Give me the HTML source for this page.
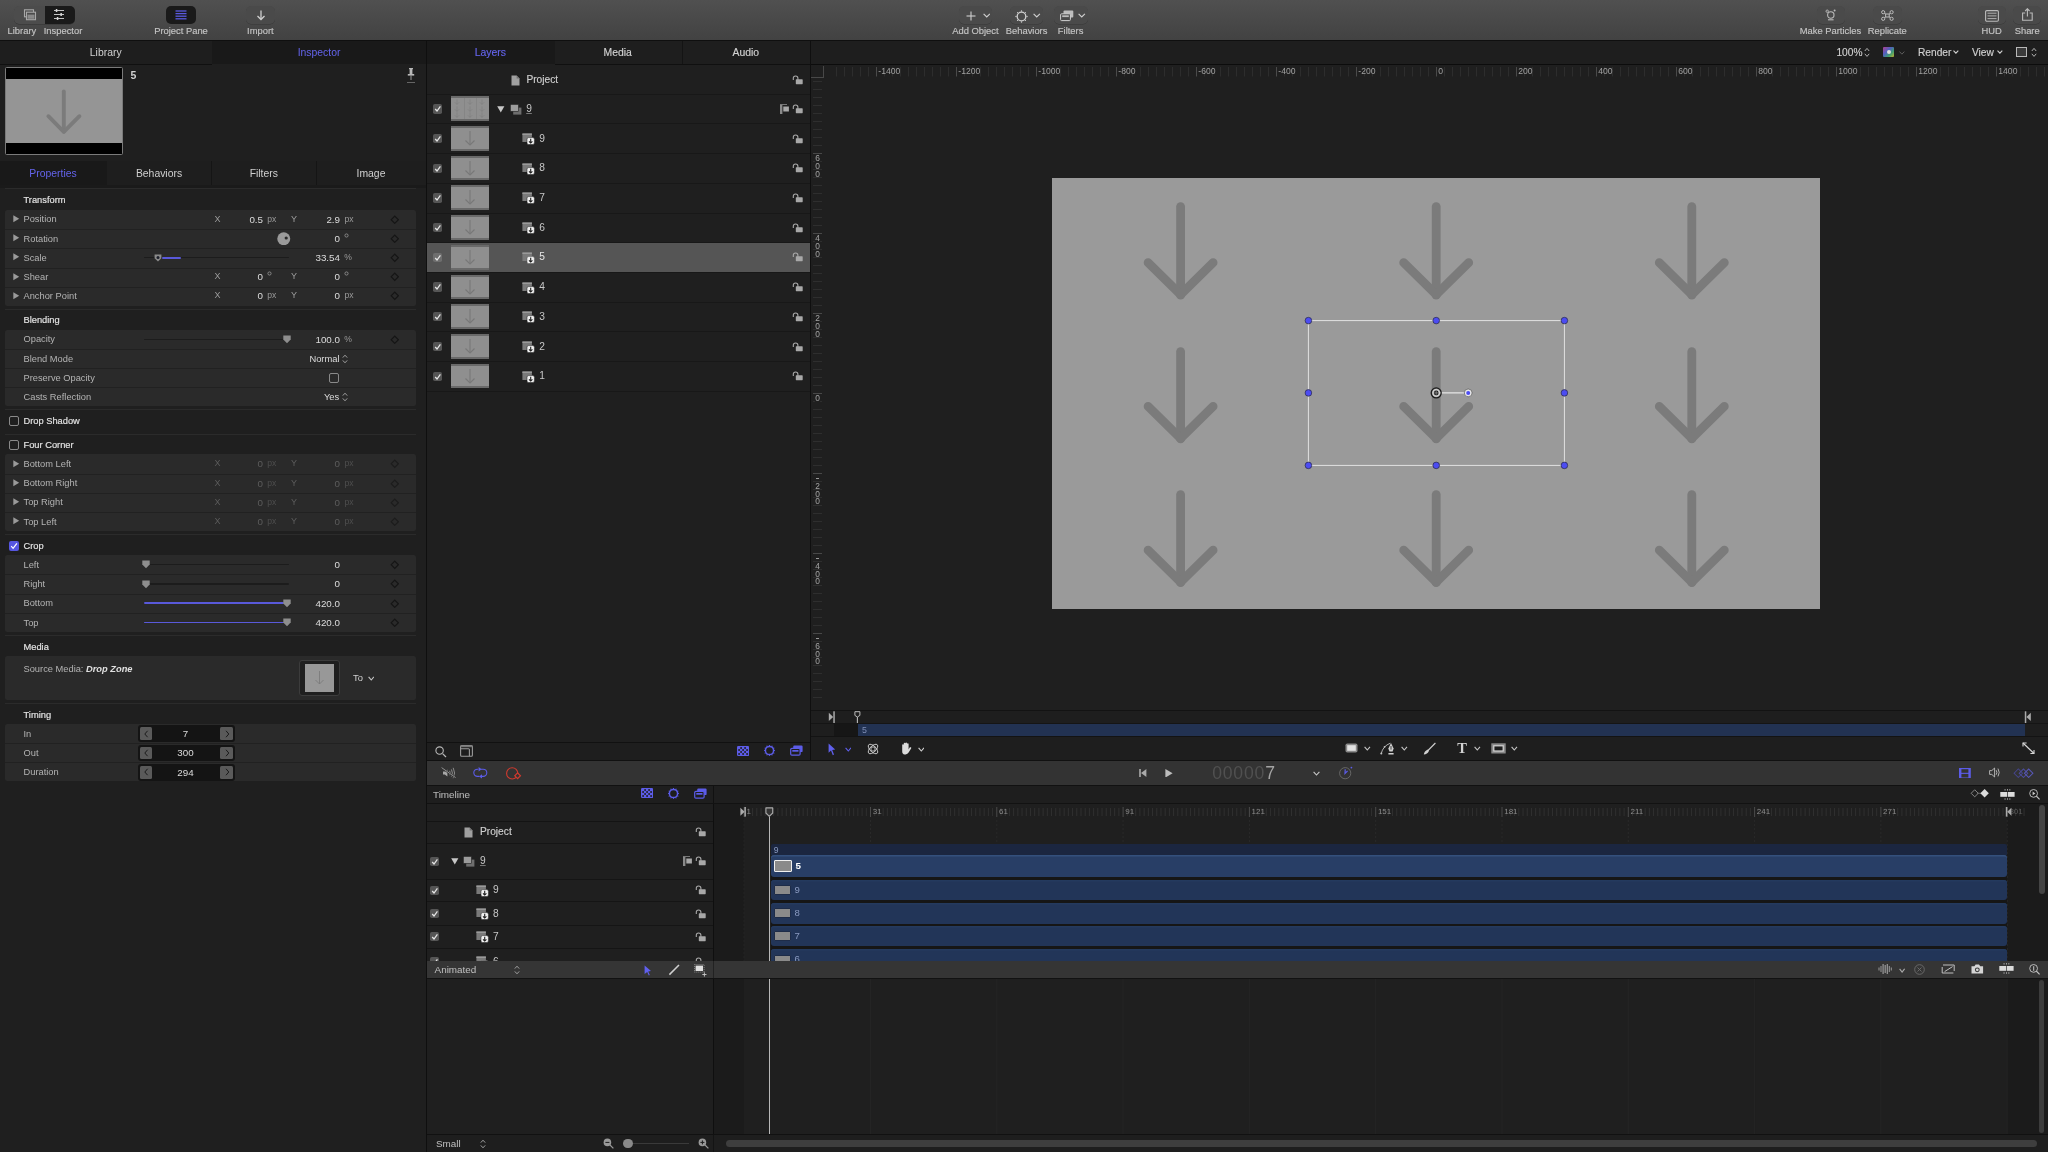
<!DOCTYPE html>
<html><head><meta charset="utf-8"><style>
html,body{margin:0;padding:0;width:2048px;height:1152px;overflow:hidden;background:#1f1f1f;font-family:"Liberation Sans",sans-serif;}
#r>div,#r>svg{position:absolute;}
#r{will-change:transform;position:relative;width:2048px;height:1152px;overflow:hidden;}
</style></head><body><div id="r">
<div style="left:0px;top:0px;width:2048px;height:40px;background:linear-gradient(#505050,#424242);"></div>
<div style="left:0px;top:40px;width:2048px;height:1px;background:#0f0f0f;"></div>
<div style="left:0px;top:41px;width:426px;height:1111px;background:#1f1f1f;"></div>
<div style="left:426px;top:41px;width:1px;height:1111px;background:#0f0f0f;"></div>
<div style="left:427px;top:41px;width:384px;height:701px;background:#1f1f1f;"></div>
<div style="left:810px;top:41px;width:1px;height:719px;background:#0f0f0f;"></div>
<div style="left:811px;top:41px;width:1237px;height:669px;background:#1f1f1f;"></div>
<div style="left:13.7px;top:6px;width:61.5px;height:18px;background:#4c4c4c;border-radius:5px;box-shadow:0 0.5px 0 rgba(0,0,0,0.3);"></div>
<div style="left:45px;top:6px;width:30.2px;height:18px;background:#1a1a1a;border-radius:0 5px 5px 0;"></div>
<svg style="left:23px;top:8px;" width="14" height="14" viewBox="0 0 14 14"><rect x="1.5" y="1.8" width="9" height="7" fill="none" stroke="#a8a8a8" stroke-width="1.1"/><rect x="3.5" y="4.2" width="9" height="7.5" fill="#4c4c4c" stroke="#a8a8a8" stroke-width="1.1"/><rect x="4.5" y="6.6" width="7" height="4.2" fill="#8a8a8a"/></svg>
<svg style="left:53px;top:9px;" width="12" height="12" viewBox="0 0 12 12"><g stroke="#d8d8d8" stroke-width="0.9"><line x1="1" y1="1.5" x2="11" y2="1.5"/><line x1="1" y1="5.5" x2="11" y2="5.5"/><line x1="1" y1="9.5" x2="11" y2="9.5"/></g><g fill="#d8d8d8"><rect x="2.8" y="0" width="1.5" height="3"/><rect x="7.4" y="4" width="1.5" height="3"/><rect x="3.8" y="8" width="1.5" height="3"/></g></svg>
<div style="left:-128.1px;width:300px;text-align:center;top:25.3px;line-height:12px;font-size:9.4px;color:#c4c4c4;font-weight:400;white-space:nowrap;-webkit-text-stroke:0.15px #c4c4c4">Library</div>
<div style="left:-87px;width:300px;text-align:center;top:25.3px;line-height:12px;font-size:9.4px;color:#c4c4c4;font-weight:400;white-space:nowrap;-webkit-text-stroke:0.15px #c4c4c4">Inspector</div>
<div style="left:166.4px;top:6px;width:29.4px;height:18px;background:#1a1a1a;border-radius:5px;"></div>
<svg style="left:175px;top:10px;" width="12" height="10" viewBox="0 0 12 10"><g stroke="#5a5ae0" stroke-width="1.3"><line x1="0.5" y1="1" x2="11.5" y2="1"/><line x1="0.5" y1="3.6" x2="11.5" y2="3.6"/><line x1="0.5" y1="6.2" x2="11.5" y2="6.2"/><line x1="0.5" y1="8.8" x2="11.5" y2="8.8"/></g></svg>
<div style="left:31px;width:300px;text-align:center;top:25.3px;line-height:12px;font-size:9.4px;color:#c4c4c4;font-weight:400;white-space:nowrap;-webkit-text-stroke:0.15px #c4c4c4">Project Pane</div>
<div style="left:246.4px;top:6px;width:28.5px;height:18px;background:#4a4a4a;border-radius:5px;box-shadow:0 0.5px 0 rgba(0,0,0,0.25);"></div>
<svg style="left:256px;top:10px;" width="10" height="11" viewBox="0 0 10 11"><g stroke="#d0d0d0" stroke-width="1.3" fill="none"><line x1="5" y1="0.5" x2="5" y2="9.3"/><polyline points="1.5,6 5,9.5 8.5,6"/></g></svg>
<div style="left:110.39999999999998px;width:300px;text-align:center;top:25.3px;line-height:12px;font-size:9.4px;color:#c4c4c4;font-weight:400;white-space:nowrap;-webkit-text-stroke:0.15px #c4c4c4">Import</div>
<div style="left:958.6px;top:6px;width:33.8px;height:18px;background:#4a4a4a;border-radius:5px;box-shadow:0 0.5px 0 rgba(0,0,0,0.25);"></div>
<div style="left:1009.5px;top:6px;width:33.8px;height:18px;background:#4a4a4a;border-radius:5px;box-shadow:0 0.5px 0 rgba(0,0,0,0.25);"></div>
<div style="left:1053.8px;top:6px;width:34.2px;height:18px;background:#4a4a4a;border-radius:5px;box-shadow:0 0.5px 0 rgba(0,0,0,0.25);"></div>
<svg style="left:966px;top:10.5px;" width="10" height="10" viewBox="0 0 10 10"><g stroke="#cfcfcf" stroke-width="1.1"><line x1="5" y1="0.5" x2="5" y2="9.5"/><line x1="0.5" y1="5" x2="9.5" y2="5"/></g></svg>
<svg style="left:982.6px;top:13.2px;" width="7.5" height="5" viewBox="0 0 7.5 5"><polyline points="0.6,0.8 3.75,4 6.9,0.8" fill="none" stroke="#cfcfcf" stroke-width="1.1"/></svg>
<svg style="left:1033.3px;top:13.2px;" width="7.5" height="5" viewBox="0 0 7.5 5"><polyline points="0.6,0.8 3.75,4 6.9,0.8" fill="none" stroke="#cfcfcf" stroke-width="1.1"/></svg>
<svg style="left:1078px;top:13.2px;" width="7.5" height="5" viewBox="0 0 7.5 5"><polyline points="0.6,0.8 3.75,4 6.9,0.8" fill="none" stroke="#cfcfcf" stroke-width="1.1"/></svg>
<svg style="left:1015px;top:9.8px;" width="13" height="13" viewBox="0 0 13 13"><circle cx="6.5" cy="6.5" r="4.3" fill="none" stroke="#cfcfcf" stroke-width="1.3"/><g fill="#cfcfcf"><circle cx="6.5" cy="1" r="0.7"/><circle cx="6.5" cy="12" r="0.7"/><circle cx="1" cy="6.5" r="0.7"/><circle cx="12" cy="6.5" r="0.7"/><circle cx="2.6" cy="2.6" r="0.6"/><circle cx="10.4" cy="2.6" r="0.6"/><circle cx="2.6" cy="10.4" r="0.6"/><circle cx="10.4" cy="10.4" r="0.6"/></g></svg>
<svg style="left:1059.5px;top:10px;" width="14" height="11.5" viewBox="0 0 14 11.5"><rect x="3.5" y="0.6" width="9.8" height="6.8" rx="1" fill="#bdbdbd"/><rect x="0.6" y="3.8" width="9.8" height="6.8" rx="1" fill="#4a4a4a" stroke="#cfcfcf" stroke-width="1"/><rect x="2.2" y="5.3" width="6.6" height="1.8" fill="#bdbdbd"/></svg>
<div style="left:825.4px;width:300px;text-align:center;top:25.3px;line-height:12px;font-size:9.4px;color:#c4c4c4;font-weight:400;white-space:nowrap;-webkit-text-stroke:0.15px #c4c4c4">Add Object</div>
<div style="left:876.5999999999999px;width:300px;text-align:center;top:25.3px;line-height:12px;font-size:9.4px;color:#c4c4c4;font-weight:400;white-space:nowrap;-webkit-text-stroke:0.15px #c4c4c4">Behaviors</div>
<div style="left:920.5999999999999px;width:300px;text-align:center;top:25.3px;line-height:12px;font-size:9.4px;color:#c4c4c4;font-weight:400;white-space:nowrap;-webkit-text-stroke:0.15px #c4c4c4">Filters</div>
<div style="left:1816.6px;top:6px;width:28.4px;height:18px;background:#4a4a4a;border-radius:5px;box-shadow:0 0.5px 0 rgba(0,0,0,0.25);"></div>
<div style="left:1872.8px;top:6px;width:29.1px;height:18px;background:#4a4a4a;border-radius:5px;box-shadow:0 0.5px 0 rgba(0,0,0,0.25);"></div>
<div style="left:1977.8px;top:6px;width:27.8px;height:18px;background:#4a4a4a;border-radius:5px;box-shadow:0 0.5px 0 rgba(0,0,0,0.25);"></div>
<div style="left:2013px;top:6px;width:27.8px;height:18px;background:#4a4a4a;border-radius:5px;box-shadow:0 0.5px 0 rgba(0,0,0,0.25);"></div>
<svg style="left:1824.5px;top:9px;" width="12" height="12" viewBox="0 0 12 12"><circle cx="5.8" cy="6" r="3.2" fill="none" stroke="#bbb" stroke-width="1.1"/><circle cx="2.2" cy="2.2" r="1.2" fill="none" stroke="#bbb" stroke-width="0.9"/><circle cx="9.6" cy="1.6" r="1" fill="#bbb"/><line x1="3" y1="10.8" x2="8.6" y2="10.8" stroke="#bbb" stroke-width="1.1"/></svg>
<svg style="left:1881px;top:9.5px;" width="13" height="11" viewBox="0 0 13 11"><g fill="none" stroke="#bbb" stroke-width="1"><circle cx="2.2" cy="2.2" r="1.6"/><circle cx="10.6" cy="2.2" r="1.6"/><circle cx="2.2" cy="8.8" r="1.6"/><circle cx="10.6" cy="8.8" r="1.6"/><rect x="4.6" y="4" width="3.6" height="3"/><line x1="3.4" y1="3.4" x2="4.8" y2="4.2"/><line x1="9.4" y1="3.4" x2="8" y2="4.2"/><line x1="3.4" y1="7.6" x2="4.8" y2="6.8"/><line x1="9.4" y1="7.6" x2="8" y2="6.8"/></g></svg>
<svg style="left:1985px;top:9.5px;" width="14" height="12" viewBox="0 0 14 12"><rect x="0.6" y="0.6" width="12.8" height="10.6" rx="1.2" fill="none" stroke="#bbb" stroke-width="1.1"/><g stroke="#bbb" stroke-width="0.9"><line x1="2.5" y1="3.2" x2="11.5" y2="3.2"/><line x1="2.5" y1="5.9" x2="11.5" y2="5.9"/><line x1="2.5" y1="8.6" x2="11.5" y2="8.6"/></g></svg>
<svg style="left:2022px;top:8px;" width="11" height="13" viewBox="0 0 11 13"><g fill="none" stroke="#bbb" stroke-width="1.1"><polyline points="3.2,5 0.6,5 0.6,12.3 10.2,12.3 10.2,5 7.6,5"/><line x1="5.4" y1="0.8" x2="5.4" y2="8.5"/><polyline points="3.2,3 5.4,0.8 7.6,3"/></g></svg>
<div style="left:1680.5px;width:300px;text-align:center;top:25.3px;line-height:12px;font-size:9.4px;color:#c4c4c4;font-weight:400;white-space:nowrap;-webkit-text-stroke:0.15px #c4c4c4">Make Particles</div>
<div style="left:1737.3px;width:300px;text-align:center;top:25.3px;line-height:12px;font-size:9.4px;color:#c4c4c4;font-weight:400;white-space:nowrap;-webkit-text-stroke:0.15px #c4c4c4">Replicate</div>
<div style="left:1841.6px;width:300px;text-align:center;top:25.3px;line-height:12px;font-size:9.4px;color:#c4c4c4;font-weight:400;white-space:nowrap;-webkit-text-stroke:0.15px #c4c4c4">HUD</div>
<div style="left:1877.2px;width:300px;text-align:center;top:25.3px;line-height:12px;font-size:9.4px;color:#c4c4c4;font-weight:400;white-space:nowrap;-webkit-text-stroke:0.15px #c4c4c4">Share</div>
<div style="left:0px;top:41px;width:212px;height:23px;background:#1e1e1e;"></div>
<div style="left:212px;top:41px;width:214px;height:23px;background:#191919;"></div>
<div style="left:0px;top:64px;width:212px;height:1px;background:#101010;"></div>
<div style="left:-44.3px;width:300px;text-align:center;top:46.2px;line-height:14px;font-size:10.4px;color:#d2d2d2;font-weight:400;white-space:nowrap;">Library</div>
<div style="left:169px;width:300px;text-align:center;top:46.2px;line-height:14px;font-size:10.4px;color:#6464ec;font-weight:400;white-space:nowrap;">Inspector</div>
<div style="left:5.2px;top:67px;width:117.5px;height:88.2px;background:#000;border:1px solid #7a7a7a;box-sizing:border-box;border-radius:1.5px;"></div>
<div style="left:6.2px;top:78.8px;width:115.5px;height:64.7px;background:#959595;"></div>
<svg style="left:40px;top:88px;" width="48" height="48" viewBox="0 0 48 48"><g stroke="#7b7b7b" stroke-width="3.9" stroke-linecap="round" stroke-linejoin="round" fill="none"><line x1="23.8" y1="3.4" x2="23.8" y2="43.5"/><polyline points="8.4,28.2 23.8,43.8 39.4,28.2"/></g></svg>
<div style="left:130.5px;top:68.1px;line-height:14px;font-size:10.5px;color:#d0d0d0;font-weight:700;white-space:nowrap;">5</div>
<svg style="left:406px;top:67px;" width="11" height="17" viewBox="0 0 11 17"><g fill="#b8b8b8"><rect x="3" y="1" width="4" height="1.2"/><rect x="3.6" y="2" width="2.8" height="5"/><polygon points="1.8,7 8.2,7 8.2,8.6 1.8,8.6"/></g><line x1="5" y1="8.6" x2="5" y2="13" stroke="#b8b8b8" stroke-width="0.8"/><line x1="1" y1="15.5" x2="9" y2="15.5" stroke="#777" stroke-width="0.8"/></svg>
<div style="left:0px;top:161px;width:107px;height:24px;background:#191919;"></div>
<div style="left:107px;top:161px;width:104px;height:24px;background:#1e1e1e;"></div>
<div style="left:211px;top:161px;width:1px;height:24px;background:#151515;"></div>
<div style="left:212px;top:161px;width:104.4px;height:24px;background:#1e1e1e;"></div>
<div style="left:316.4px;top:161px;width:1px;height:24px;background:#151515;"></div>
<div style="left:317.4px;top:161px;width:108.6px;height:24px;background:#1e1e1e;"></div>
<div style="left:0px;top:185px;width:426px;height:3px;background:#1a1a1a;"></div>
<div style="left:-97px;width:300px;text-align:center;top:167.3px;line-height:14px;font-size:10.4px;color:#6464ec;font-weight:400;white-space:nowrap;">Properties</div>
<div style="left:9px;width:300px;text-align:center;top:167.3px;line-height:14px;font-size:10.4px;color:#d0d0d0;font-weight:400;white-space:nowrap;">Behaviors</div>
<div style="left:113.80000000000001px;width:300px;text-align:center;top:167.3px;line-height:14px;font-size:10.4px;color:#d0d0d0;font-weight:400;white-space:nowrap;">Filters</div>
<div style="left:221px;width:300px;text-align:center;top:167.3px;line-height:14px;font-size:10.4px;color:#d0d0d0;font-weight:400;white-space:nowrap;">Image</div>
<div style="left:4.7px;top:188.2px;width:411px;height:1.2px;background:#2b2b2b;"></div>
<div style="left:23.5px;top:193.2px;line-height:14px;font-size:9.3px;color:#e4e4e4;font-weight:400;white-space:nowrap;-webkit-text-stroke:0.2px #dedede">Transform</div>
<div style="left:4.9px;top:209.8px;width:410.7px;height:95.80000000000001px;background:#2a2a2a;border-radius:2.5px;"></div>
<div style="left:4.9px;top:229.1px;width:410.7px;height:1px;background:#212121;"></div>
<div style="left:4.9px;top:248.3px;width:410.7px;height:1px;background:#212121;"></div>
<div style="left:4.9px;top:267.5px;width:410.7px;height:1px;background:#212121;"></div>
<div style="left:4.9px;top:286.7px;width:410.7px;height:1px;background:#212121;"></div>
<svg style="left:12.5px;top:214.79999999999998px;" width="7" height="8" viewBox="0 0 7 8"><polygon points="0.3,0.2 6.2,3.7 0.3,7.2" fill="#9a9a9a"/></svg>
<div style="left:23.5px;top:212.2px;line-height:14px;font-size:9.3px;color:#b4b4b4;font-weight:400;white-space:nowrap;">Position</div>
<svg style="left:389.5px;top:214.6px;" width="9.5" height="9.5" viewBox="0 0 9.5 9.5"><rect x="2.2" y="2.2" width="5.1" height="5.1" transform="rotate(45 4.75 4.75)" fill="none" stroke="#151515" stroke-width="1.15"/></svg>
<svg style="left:12.5px;top:234.1px;" width="7" height="8" viewBox="0 0 7 8"><polygon points="0.3,0.2 6.2,3.7 0.3,7.2" fill="#9a9a9a"/></svg>
<div style="left:23.5px;top:231.5px;line-height:14px;font-size:9.3px;color:#b4b4b4;font-weight:400;white-space:nowrap;">Rotation</div>
<svg style="left:389.5px;top:233.9px;" width="9.5" height="9.5" viewBox="0 0 9.5 9.5"><rect x="2.2" y="2.2" width="5.1" height="5.1" transform="rotate(45 4.75 4.75)" fill="none" stroke="#151515" stroke-width="1.15"/></svg>
<svg style="left:12.5px;top:253.29999999999998px;" width="7" height="8" viewBox="0 0 7 8"><polygon points="0.3,0.2 6.2,3.7 0.3,7.2" fill="#9a9a9a"/></svg>
<div style="left:23.5px;top:250.7px;line-height:14px;font-size:9.3px;color:#b4b4b4;font-weight:400;white-space:nowrap;">Scale</div>
<svg style="left:389.5px;top:253.1px;" width="9.5" height="9.5" viewBox="0 0 9.5 9.5"><rect x="2.2" y="2.2" width="5.1" height="5.1" transform="rotate(45 4.75 4.75)" fill="none" stroke="#151515" stroke-width="1.15"/></svg>
<svg style="left:12.5px;top:272.5px;" width="7" height="8" viewBox="0 0 7 8"><polygon points="0.3,0.2 6.2,3.7 0.3,7.2" fill="#9a9a9a"/></svg>
<div style="left:23.5px;top:269.9px;line-height:14px;font-size:9.3px;color:#b4b4b4;font-weight:400;white-space:nowrap;">Shear</div>
<svg style="left:389.5px;top:272.29999999999995px;" width="9.5" height="9.5" viewBox="0 0 9.5 9.5"><rect x="2.2" y="2.2" width="5.1" height="5.1" transform="rotate(45 4.75 4.75)" fill="none" stroke="#151515" stroke-width="1.15"/></svg>
<svg style="left:12.5px;top:291.6px;" width="7" height="8" viewBox="0 0 7 8"><polygon points="0.3,0.2 6.2,3.7 0.3,7.2" fill="#9a9a9a"/></svg>
<div style="left:23.5px;top:289.0px;line-height:14px;font-size:9.3px;color:#b4b4b4;font-weight:400;white-space:nowrap;">Anchor Point</div>
<svg style="left:389.5px;top:291.4px;" width="9.5" height="9.5" viewBox="0 0 9.5 9.5"><rect x="2.2" y="2.2" width="5.1" height="5.1" transform="rotate(45 4.75 4.75)" fill="none" stroke="#151515" stroke-width="1.15"/></svg>
<div style="left:67.5px;width:300px;text-align:center;top:211.6px;line-height:14px;font-size:9px;color:#9c9c9c;font-weight:400;white-space:nowrap;">X</div>
<div style="left:-37px;width:300px;text-align:right;top:212.6px;line-height:14px;font-size:9.8px;color:#dcdcdc;font-weight:400;white-space:nowrap;">0.5</div>
<div style="left:267.3px;top:211.6px;line-height:14px;font-size:8.6px;color:#9a9a9a;font-weight:400;white-space:nowrap;">px</div>
<div style="left:144.10000000000002px;width:300px;text-align:center;top:211.6px;line-height:14px;font-size:9px;color:#9c9c9c;font-weight:400;white-space:nowrap;">Y</div>
<div style="left:40px;width:300px;text-align:right;top:212.6px;line-height:14px;font-size:9.8px;color:#dcdcdc;font-weight:400;white-space:nowrap;">2.9</div>
<div style="left:344.5px;top:211.6px;line-height:14px;font-size:8.6px;color:#9a9a9a;font-weight:400;white-space:nowrap;">px</div>
<svg style="left:277.3px;top:231.9px;" width="13.5" height="13.5" viewBox="0 0 13.5 13.5"><circle cx="6.75" cy="6.75" r="6.5" fill="#9a9a9a"/><circle cx="9.2" cy="6" r="1.6" fill="#2a2a2a"/></svg>
<div style="left:40px;width:300px;text-align:right;top:231.9px;line-height:14px;font-size:9.8px;color:#dcdcdc;font-weight:400;white-space:nowrap;">0</div>
<svg style="left:344.1px;top:232.5px;" width="5" height="5" viewBox="0 0 5 5"><circle cx="2.5" cy="2.5" r="1.6" fill="none" stroke="#9a9a9a" stroke-width="0.8"/></svg>
<div style="left:144.4px;top:257.09999999999997px;width:144.8px;height:1.2px;background:#1c1c1c;border-radius:1px;"></div>
<div style="left:161.8px;top:256.8px;width:19.0px;height:1.8px;background:#5959da;border-radius:1px;"></div>
<svg style="left:154.1px;top:253.7px;" width="8" height="8" viewBox="0 0 8 8"><path d="M0.6,0.5 H7.4 V4.2 L4,7.4 L0.6,4.2 Z" fill="#8a8a8a"/><circle cx="4" cy="3.6" r="1.5" fill="#1c1f2a"/></svg>
<div style="left:40px;width:300px;text-align:right;top:251.09999999999997px;line-height:14px;font-size:9.8px;color:#dcdcdc;font-weight:400;white-space:nowrap;">33.54</div>
<div style="left:344.3px;top:250.09999999999997px;line-height:14px;font-size:8.6px;color:#9a9a9a;font-weight:400;white-space:nowrap;">%</div>
<div style="left:67.5px;width:300px;text-align:center;top:269.29999999999995px;line-height:14px;font-size:9px;color:#9c9c9c;font-weight:400;white-space:nowrap;">X</div>
<div style="left:-37px;width:300px;text-align:right;top:270.29999999999995px;line-height:14px;font-size:9.8px;color:#dcdcdc;font-weight:400;white-space:nowrap;">0</div>
<svg style="left:267.3px;top:270.9px;" width="5" height="5" viewBox="0 0 5 5"><circle cx="2.5" cy="2.5" r="1.6" fill="none" stroke="#9a9a9a" stroke-width="0.8"/></svg>
<div style="left:144.10000000000002px;width:300px;text-align:center;top:269.29999999999995px;line-height:14px;font-size:9px;color:#9c9c9c;font-weight:400;white-space:nowrap;">Y</div>
<div style="left:40px;width:300px;text-align:right;top:270.29999999999995px;line-height:14px;font-size:9.8px;color:#dcdcdc;font-weight:400;white-space:nowrap;">0</div>
<svg style="left:344.1px;top:270.9px;" width="5" height="5" viewBox="0 0 5 5"><circle cx="2.5" cy="2.5" r="1.6" fill="none" stroke="#9a9a9a" stroke-width="0.8"/></svg>
<div style="left:67.5px;width:300px;text-align:center;top:288.4px;line-height:14px;font-size:9px;color:#9c9c9c;font-weight:400;white-space:nowrap;">X</div>
<div style="left:-37px;width:300px;text-align:right;top:289.4px;line-height:14px;font-size:9.8px;color:#dcdcdc;font-weight:400;white-space:nowrap;">0</div>
<div style="left:267.3px;top:288.4px;line-height:14px;font-size:8.6px;color:#9a9a9a;font-weight:400;white-space:nowrap;">px</div>
<div style="left:144.10000000000002px;width:300px;text-align:center;top:288.4px;line-height:14px;font-size:9px;color:#9c9c9c;font-weight:400;white-space:nowrap;">Y</div>
<div style="left:40px;width:300px;text-align:right;top:289.4px;line-height:14px;font-size:9.8px;color:#dcdcdc;font-weight:400;white-space:nowrap;">0</div>
<div style="left:344.5px;top:288.4px;line-height:14px;font-size:8.6px;color:#9a9a9a;font-weight:400;white-space:nowrap;">px</div>
<div style="left:4.7px;top:308.8px;width:411px;height:1.2px;background:#2b2b2b;"></div>
<div style="left:23.5px;top:313.2px;line-height:14px;font-size:9.3px;color:#e4e4e4;font-weight:400;white-space:nowrap;-webkit-text-stroke:0.2px #dedede">Blending</div>
<div style="left:4.9px;top:329.6px;width:410.7px;height:76.39999999999998px;background:#2a2a2a;border-radius:2.5px;"></div>
<div style="left:4.9px;top:348.9px;width:410.7px;height:1px;background:#212121;"></div>
<div style="left:4.9px;top:368.1px;width:410.7px;height:1px;background:#212121;"></div>
<div style="left:4.9px;top:387.3px;width:410.7px;height:1px;background:#212121;"></div>
<div style="left:23.5px;top:332.4px;line-height:14px;font-size:9.3px;color:#b4b4b4;font-weight:400;white-space:nowrap;">Opacity</div>
<svg style="left:389.5px;top:334.79999999999995px;" width="9.5" height="9.5" viewBox="0 0 9.5 9.5"><rect x="2.2" y="2.2" width="5.1" height="5.1" transform="rotate(45 4.75 4.75)" fill="none" stroke="#151515" stroke-width="1.15"/></svg>
<div style="left:144.4px;top:338.79999999999995px;width:144.8px;height:1.2px;background:#1c1c1c;border-radius:1px;"></div>
<svg style="left:282.5px;top:334.9px;" width="8" height="9" viewBox="0 0 8 9"><path d="M0.3,0.5 H7.7 V4.4 L4,8.2 L0.3,4.4 Z" fill="#8e8e8e"/></svg>
<div style="left:40px;width:300px;text-align:right;top:332.79999999999995px;line-height:14px;font-size:9.8px;color:#dcdcdc;font-weight:400;white-space:nowrap;">100.0</div>
<div style="left:344.3px;top:331.79999999999995px;line-height:14px;font-size:8.6px;color:#9a9a9a;font-weight:400;white-space:nowrap;">%</div>
<div style="left:23.5px;top:351.5px;line-height:14px;font-size:9.3px;color:#b4b4b4;font-weight:400;white-space:nowrap;">Blend Mode</div>
<div style="left:39.60000000000002px;width:300px;text-align:right;top:351.5px;line-height:14px;font-size:9.4px;color:#dcdcdc;font-weight:400;white-space:nowrap;">Normal</div>
<svg style="left:341.7px;top:353.5px;" width="6" height="10" viewBox="0 0 6 10"><g fill="none" stroke="#a0a0a0" stroke-width="1"><polyline points="0.8,3.6 3,1.2 5.2,3.6"/><polyline points="0.8,6.4 3,8.8 5.2,6.4"/></g></svg>
<div style="left:23.5px;top:370.6px;line-height:14px;font-size:9.3px;color:#b4b4b4;font-weight:400;white-space:nowrap;">Preserve Opacity</div>
<div style="left:329.2px;top:373.2px;width:10px;height:10px;background:transparent;border:1px solid #8a8a8a;border-radius:2px;box-sizing:border-box;"></div>
<div style="left:23.5px;top:389.7px;line-height:14px;font-size:9.3px;color:#b4b4b4;font-weight:400;white-space:nowrap;">Casts Reflection</div>
<div style="left:39.19999999999999px;width:300px;text-align:right;top:389.7px;line-height:14px;font-size:9.4px;color:#dcdcdc;font-weight:400;white-space:nowrap;">Yes</div>
<svg style="left:341.7px;top:391.7px;" width="6" height="10" viewBox="0 0 6 10"><g fill="none" stroke="#a0a0a0" stroke-width="1"><polyline points="0.8,3.6 3,1.2 5.2,3.6"/><polyline points="0.8,6.4 3,8.8 5.2,6.4"/></g></svg>
<div style="left:4.7px;top:409px;width:411px;height:1.2px;background:#2b2b2b;"></div>
<div style="left:9.4px;top:416.20000000000005px;width:9.8px;height:9.8px;background:transparent;border:1px solid #8a8a8a;border-radius:2px;box-sizing:border-box;"></div>
<div style="left:23.5px;top:413.8px;line-height:14px;font-size:9.3px;color:#e4e4e4;font-weight:400;white-space:nowrap;-webkit-text-stroke:0.2px #dedede">Drop Shadow</div>
<div style="left:4.7px;top:433.6px;width:411px;height:1.2px;background:#2b2b2b;"></div>
<div style="left:9.4px;top:439.90000000000003px;width:9.8px;height:9.8px;background:transparent;border:1px solid #8a8a8a;border-radius:2px;box-sizing:border-box;"></div>
<div style="left:23.5px;top:437.8px;line-height:14px;font-size:9.3px;color:#e4e4e4;font-weight:400;white-space:nowrap;-webkit-text-stroke:0.2px #dedede">Four Corner</div>
<div style="left:4.9px;top:454.2px;width:410.7px;height:76.59999999999997px;background:#2a2a2a;border-radius:2.5px;"></div>
<div style="left:4.9px;top:473.5px;width:410.7px;height:1px;background:#212121;"></div>
<div style="left:4.9px;top:492.7px;width:410.7px;height:1px;background:#212121;"></div>
<div style="left:4.9px;top:511.9px;width:410.7px;height:1px;background:#212121;"></div>
<svg style="left:12.5px;top:459.6px;" width="7" height="8" viewBox="0 0 7 8"><polygon points="0.3,0.2 6.2,3.7 0.3,7.2" fill="#9a9a9a"/></svg>
<div style="left:23.5px;top:457.0px;line-height:14px;font-size:9.3px;color:#b4b4b4;font-weight:400;white-space:nowrap;">Bottom Left</div>
<svg style="left:389.5px;top:459.4px;" width="9.5" height="9.5" viewBox="0 0 9.5 9.5"><rect x="2.2" y="2.2" width="5.1" height="5.1" transform="rotate(45 4.75 4.75)" fill="none" stroke="#1c1c1c" stroke-width="1.15"/></svg>
<div style="left:67.5px;width:300px;text-align:center;top:456.4px;line-height:14px;font-size:9px;color:#5c5c5c;font-weight:400;white-space:nowrap;">X</div>
<div style="left:-37px;width:300px;text-align:right;top:457.4px;line-height:14px;font-size:9.8px;color:#5c5c5c;font-weight:400;white-space:nowrap;">0</div>
<div style="left:267.3px;top:456.4px;line-height:14px;font-size:8.6px;color:#4e4e4e;font-weight:400;white-space:nowrap;">px</div>
<div style="left:144.10000000000002px;width:300px;text-align:center;top:456.4px;line-height:14px;font-size:9px;color:#5c5c5c;font-weight:400;white-space:nowrap;">Y</div>
<div style="left:40px;width:300px;text-align:right;top:457.4px;line-height:14px;font-size:9.8px;color:#5c5c5c;font-weight:400;white-space:nowrap;">0</div>
<div style="left:344.5px;top:456.4px;line-height:14px;font-size:8.6px;color:#4e4e4e;font-weight:400;white-space:nowrap;">px</div>
<svg style="left:12.5px;top:478.70000000000005px;" width="7" height="8" viewBox="0 0 7 8"><polygon points="0.3,0.2 6.2,3.7 0.3,7.2" fill="#9a9a9a"/></svg>
<div style="left:23.5px;top:476.1px;line-height:14px;font-size:9.3px;color:#b4b4b4;font-weight:400;white-space:nowrap;">Bottom Right</div>
<svg style="left:389.5px;top:478.5px;" width="9.5" height="9.5" viewBox="0 0 9.5 9.5"><rect x="2.2" y="2.2" width="5.1" height="5.1" transform="rotate(45 4.75 4.75)" fill="none" stroke="#1c1c1c" stroke-width="1.15"/></svg>
<div style="left:67.5px;width:300px;text-align:center;top:475.5px;line-height:14px;font-size:9px;color:#5c5c5c;font-weight:400;white-space:nowrap;">X</div>
<div style="left:-37px;width:300px;text-align:right;top:476.5px;line-height:14px;font-size:9.8px;color:#5c5c5c;font-weight:400;white-space:nowrap;">0</div>
<div style="left:267.3px;top:475.5px;line-height:14px;font-size:8.6px;color:#4e4e4e;font-weight:400;white-space:nowrap;">px</div>
<div style="left:144.10000000000002px;width:300px;text-align:center;top:475.5px;line-height:14px;font-size:9px;color:#5c5c5c;font-weight:400;white-space:nowrap;">Y</div>
<div style="left:40px;width:300px;text-align:right;top:476.5px;line-height:14px;font-size:9.8px;color:#5c5c5c;font-weight:400;white-space:nowrap;">0</div>
<div style="left:344.5px;top:475.5px;line-height:14px;font-size:8.6px;color:#4e4e4e;font-weight:400;white-space:nowrap;">px</div>
<svg style="left:12.5px;top:497.90000000000003px;" width="7" height="8" viewBox="0 0 7 8"><polygon points="0.3,0.2 6.2,3.7 0.3,7.2" fill="#9a9a9a"/></svg>
<div style="left:23.5px;top:495.3px;line-height:14px;font-size:9.3px;color:#b4b4b4;font-weight:400;white-space:nowrap;">Top Right</div>
<svg style="left:389.5px;top:497.7px;" width="9.5" height="9.5" viewBox="0 0 9.5 9.5"><rect x="2.2" y="2.2" width="5.1" height="5.1" transform="rotate(45 4.75 4.75)" fill="none" stroke="#1c1c1c" stroke-width="1.15"/></svg>
<div style="left:67.5px;width:300px;text-align:center;top:494.7px;line-height:14px;font-size:9px;color:#5c5c5c;font-weight:400;white-space:nowrap;">X</div>
<div style="left:-37px;width:300px;text-align:right;top:495.7px;line-height:14px;font-size:9.8px;color:#5c5c5c;font-weight:400;white-space:nowrap;">0</div>
<div style="left:267.3px;top:494.7px;line-height:14px;font-size:8.6px;color:#4e4e4e;font-weight:400;white-space:nowrap;">px</div>
<div style="left:144.10000000000002px;width:300px;text-align:center;top:494.7px;line-height:14px;font-size:9px;color:#5c5c5c;font-weight:400;white-space:nowrap;">Y</div>
<div style="left:40px;width:300px;text-align:right;top:495.7px;line-height:14px;font-size:9.8px;color:#5c5c5c;font-weight:400;white-space:nowrap;">0</div>
<div style="left:344.5px;top:494.7px;line-height:14px;font-size:8.6px;color:#4e4e4e;font-weight:400;white-space:nowrap;">px</div>
<svg style="left:12.5px;top:517.1px;" width="7" height="8" viewBox="0 0 7 8"><polygon points="0.3,0.2 6.2,3.7 0.3,7.2" fill="#9a9a9a"/></svg>
<div style="left:23.5px;top:514.5px;line-height:14px;font-size:9.3px;color:#b4b4b4;font-weight:400;white-space:nowrap;">Top Left</div>
<svg style="left:389.5px;top:516.9px;" width="9.5" height="9.5" viewBox="0 0 9.5 9.5"><rect x="2.2" y="2.2" width="5.1" height="5.1" transform="rotate(45 4.75 4.75)" fill="none" stroke="#1c1c1c" stroke-width="1.15"/></svg>
<div style="left:67.5px;width:300px;text-align:center;top:513.9px;line-height:14px;font-size:9px;color:#5c5c5c;font-weight:400;white-space:nowrap;">X</div>
<div style="left:-37px;width:300px;text-align:right;top:514.9px;line-height:14px;font-size:9.8px;color:#5c5c5c;font-weight:400;white-space:nowrap;">0</div>
<div style="left:267.3px;top:513.9px;line-height:14px;font-size:8.6px;color:#4e4e4e;font-weight:400;white-space:nowrap;">px</div>
<div style="left:144.10000000000002px;width:300px;text-align:center;top:513.9px;line-height:14px;font-size:9px;color:#5c5c5c;font-weight:400;white-space:nowrap;">Y</div>
<div style="left:40px;width:300px;text-align:right;top:514.9px;line-height:14px;font-size:9.8px;color:#5c5c5c;font-weight:400;white-space:nowrap;">0</div>
<div style="left:344.5px;top:513.9px;line-height:14px;font-size:8.6px;color:#4e4e4e;font-weight:400;white-space:nowrap;">px</div>
<div style="left:4.7px;top:534px;width:411px;height:1.2px;background:#2b2b2b;"></div>
<div style="left:9.4px;top:540.8000000000001px;width:9.8px;height:9.8px;background:#5656e0;border-radius:2px;"></div>
<svg style="left:9.4px;top:540.8000000000001px;" width="10" height="10" viewBox="0 0 10 10"><polyline points="2.2,5.2 4.1,7.3 7.9,2.3" fill="none" stroke="#fff" stroke-width="1.2"/></svg>
<div style="left:23.5px;top:538.6px;line-height:14px;font-size:9.3px;color:#e4e4e4;font-weight:400;white-space:nowrap;-webkit-text-stroke:0.2px #dedede">Crop</div>
<div style="left:4.9px;top:555.2px;width:410.7px;height:76.69999999999993px;background:#2a2a2a;border-radius:2.5px;"></div>
<div style="left:4.9px;top:574.4px;width:410.7px;height:1px;background:#212121;"></div>
<div style="left:4.9px;top:593.6px;width:410.7px;height:1px;background:#212121;"></div>
<div style="left:4.9px;top:612.8px;width:410.7px;height:1px;background:#212121;"></div>
<div style="left:23.5px;top:557.8px;line-height:14px;font-size:9.3px;color:#b4b4b4;font-weight:400;white-space:nowrap;">Left</div>
<svg style="left:389.5px;top:560.1999999999999px;" width="9.5" height="9.5" viewBox="0 0 9.5 9.5"><rect x="2.2" y="2.2" width="5.1" height="5.1" transform="rotate(45 4.75 4.75)" fill="none" stroke="#151515" stroke-width="1.15"/></svg>
<div style="left:23.5px;top:577.0px;line-height:14px;font-size:9.3px;color:#b4b4b4;font-weight:400;white-space:nowrap;">Right</div>
<svg style="left:389.5px;top:579.4px;" width="9.5" height="9.5" viewBox="0 0 9.5 9.5"><rect x="2.2" y="2.2" width="5.1" height="5.1" transform="rotate(45 4.75 4.75)" fill="none" stroke="#151515" stroke-width="1.15"/></svg>
<div style="left:23.5px;top:596.3px;line-height:14px;font-size:9.3px;color:#b4b4b4;font-weight:400;white-space:nowrap;">Bottom</div>
<svg style="left:389.5px;top:598.6999999999999px;" width="9.5" height="9.5" viewBox="0 0 9.5 9.5"><rect x="2.2" y="2.2" width="5.1" height="5.1" transform="rotate(45 4.75 4.75)" fill="none" stroke="#151515" stroke-width="1.15"/></svg>
<div style="left:23.5px;top:615.5px;line-height:14px;font-size:9.3px;color:#b4b4b4;font-weight:400;white-space:nowrap;">Top</div>
<svg style="left:389.5px;top:617.9px;" width="9.5" height="9.5" viewBox="0 0 9.5 9.5"><rect x="2.2" y="2.2" width="5.1" height="5.1" transform="rotate(45 4.75 4.75)" fill="none" stroke="#151515" stroke-width="1.15"/></svg>
<div style="left:144.4px;top:564.1999999999999px;width:144.8px;height:1.2px;background:#1c1c1c;border-radius:1px;"></div>
<svg style="left:142.29999999999998px;top:560.3px;" width="8" height="9" viewBox="0 0 8 9"><path d="M0.3,0.5 H7.7 V4.4 L4,8.2 L0.3,4.4 Z" fill="#8e8e8e"/></svg>
<div style="left:40px;width:300px;text-align:right;top:558.1999999999999px;line-height:14px;font-size:9.8px;color:#dcdcdc;font-weight:400;white-space:nowrap;">0</div>
<div style="left:144.4px;top:583.4px;width:144.8px;height:1.2px;background:#1c1c1c;border-radius:1px;"></div>
<svg style="left:142.29999999999998px;top:579.5px;" width="8" height="9" viewBox="0 0 8 9"><path d="M0.3,0.5 H7.7 V4.4 L4,8.2 L0.3,4.4 Z" fill="#8e8e8e"/></svg>
<div style="left:40px;width:300px;text-align:right;top:577.4px;line-height:14px;font-size:9.8px;color:#dcdcdc;font-weight:400;white-space:nowrap;">0</div>
<div style="left:144.4px;top:602.6999999999999px;width:144.8px;height:1.2px;background:#1c1c1c;border-radius:1px;"></div>
<div style="left:144.4px;top:602.4px;width:139.6px;height:1.8px;background:#5959da;border-radius:1px;"></div>
<svg style="left:282.5px;top:598.8px;" width="8" height="9" viewBox="0 0 8 9"><path d="M0.3,0.5 H7.7 V4.4 L4,8.2 L0.3,4.4 Z" fill="#8e8e8e"/></svg>
<div style="left:40px;width:300px;text-align:right;top:596.6999999999999px;line-height:14px;font-size:9.8px;color:#dcdcdc;font-weight:400;white-space:nowrap;">420.0</div>
<div style="left:144.4px;top:621.9px;width:144.8px;height:1.2px;background:#1c1c1c;border-radius:1px;"></div>
<div style="left:144.4px;top:621.6px;width:139.6px;height:1.8px;background:#5959da;border-radius:1px;"></div>
<svg style="left:282.5px;top:618.0px;" width="8" height="9" viewBox="0 0 8 9"><path d="M0.3,0.5 H7.7 V4.4 L4,8.2 L0.3,4.4 Z" fill="#8e8e8e"/></svg>
<div style="left:40px;width:300px;text-align:right;top:615.9px;line-height:14px;font-size:9.8px;color:#dcdcdc;font-weight:400;white-space:nowrap;">420.0</div>
<div style="left:4.7px;top:635px;width:411px;height:1.2px;background:#2b2b2b;"></div>
<div style="left:23.5px;top:639.7px;line-height:14px;font-size:9.3px;color:#e4e4e4;font-weight:400;white-space:nowrap;-webkit-text-stroke:0.2px #dedede">Media</div>
<div style="left:4.9px;top:656px;width:410.7px;height:43.799999999999955px;background:#2a2a2a;border-radius:2.5px;"></div>
<div style="left:23.5px;top:662.0px;line-height:14px;font-size:9.3px;color:#b4b4b4;font-weight:400;white-space:nowrap;">Source Media: <i style="font-weight:700;color:#e0e0e0">Drop Zone</i></div>
<div style="left:299px;top:659.8px;width:41.2px;height:36.5px;background:#1f1f1f;border:1px solid #3c3c3c;border-radius:3px;box-sizing:border-box;"></div>
<div style="left:305.2px;top:664px;width:28.8px;height:28px;background:#989898;"></div>
<svg style="left:313px;top:670px;" width="13" height="16" viewBox="0 0 13 16"><g stroke="#7a7a7a" stroke-width="0.9" fill="none"><line x1="6.5" y1="1" x2="6.5" y2="14"/><polyline points="2.5,10 6.5,14 10.5,10"/></g></svg>
<div style="left:353px;top:671.3px;line-height:14px;font-size:9.4px;color:#d0d0d0;font-weight:400;white-space:nowrap;">To</div>
<svg style="left:367.6px;top:676.3px;" width="6.5" height="5" viewBox="0 0 6.5 5"><polyline points="0.6,0.8 3.25,4 5.9,0.8" fill="none" stroke="#c8c8c8" stroke-width="1.1"/></svg>
<div style="left:4.7px;top:703px;width:411px;height:1.2px;background:#2b2b2b;"></div>
<div style="left:23.5px;top:707.8px;line-height:14px;font-size:9.3px;color:#e4e4e4;font-weight:400;white-space:nowrap;-webkit-text-stroke:0.2px #dedede">Timing</div>
<div style="left:4.9px;top:723.75px;width:410.7px;height:57.25px;background:#2a2a2a;border-radius:2.5px;"></div>
<div style="left:4.9px;top:743.2px;width:410.7px;height:1px;background:#212121;"></div>
<div style="left:4.9px;top:762.4px;width:410.7px;height:1px;background:#212121;"></div>
<div style="left:23.5px;top:726.75px;line-height:14px;font-size:9.3px;color:#b4b4b4;font-weight:400;white-space:nowrap;">In</div>
<div style="left:138px;top:725.45px;width:96.8px;height:16.6px;background:#141414;border-radius:3px;"></div>
<div style="left:140.2px;top:727.45px;width:12.3px;height:12.6px;background:#5a5a5a;border-radius:1.5px;"></div>
<div style="left:220.4px;top:727.45px;width:12.3px;height:12.6px;background:#5a5a5a;border-radius:1.5px;"></div>
<svg style="left:143px;top:729.75px;" width="7" height="8" viewBox="0 0 7 8"><polyline points="4.6,0.8 1.8,4 4.6,7.2" fill="none" stroke="#1a1a1a" stroke-width="1"/></svg>
<svg style="left:223.5px;top:729.75px;" width="7" height="8" viewBox="0 0 7 8"><polyline points="2,0.8 4.8,4 2,7.2" fill="none" stroke="#1a1a1a" stroke-width="1"/></svg>
<div style="left:35.5px;width:300px;text-align:center;top:727.15px;line-height:14px;font-size:9.8px;color:#dcdcdc;font-weight:400;white-space:nowrap;">7</div>
<div style="left:23.5px;top:746.0px;line-height:14px;font-size:9.3px;color:#b4b4b4;font-weight:400;white-space:nowrap;">Out</div>
<div style="left:138px;top:744.7px;width:96.8px;height:16.6px;background:#141414;border-radius:3px;"></div>
<div style="left:140.2px;top:746.7px;width:12.3px;height:12.6px;background:#5a5a5a;border-radius:1.5px;"></div>
<div style="left:220.4px;top:746.7px;width:12.3px;height:12.6px;background:#5a5a5a;border-radius:1.5px;"></div>
<svg style="left:143px;top:749.0px;" width="7" height="8" viewBox="0 0 7 8"><polyline points="4.6,0.8 1.8,4 4.6,7.2" fill="none" stroke="#1a1a1a" stroke-width="1"/></svg>
<svg style="left:223.5px;top:749.0px;" width="7" height="8" viewBox="0 0 7 8"><polyline points="2,0.8 4.8,4 2,7.2" fill="none" stroke="#1a1a1a" stroke-width="1"/></svg>
<div style="left:35.5px;width:300px;text-align:center;top:746.4px;line-height:14px;font-size:9.8px;color:#dcdcdc;font-weight:400;white-space:nowrap;">300</div>
<div style="left:23.5px;top:765.3px;line-height:14px;font-size:9.3px;color:#b4b4b4;font-weight:400;white-space:nowrap;">Duration</div>
<div style="left:138px;top:764.0px;width:96.8px;height:16.6px;background:#141414;border-radius:3px;"></div>
<div style="left:140.2px;top:766.0px;width:12.3px;height:12.6px;background:#5a5a5a;border-radius:1.5px;"></div>
<div style="left:220.4px;top:766.0px;width:12.3px;height:12.6px;background:#5a5a5a;border-radius:1.5px;"></div>
<svg style="left:143px;top:768.3px;" width="7" height="8" viewBox="0 0 7 8"><polyline points="4.6,0.8 1.8,4 4.6,7.2" fill="none" stroke="#1a1a1a" stroke-width="1"/></svg>
<svg style="left:223.5px;top:768.3px;" width="7" height="8" viewBox="0 0 7 8"><polyline points="2,0.8 4.8,4 2,7.2" fill="none" stroke="#1a1a1a" stroke-width="1"/></svg>
<div style="left:35.5px;width:300px;text-align:center;top:765.6999999999999px;line-height:14px;font-size:9.8px;color:#dcdcdc;font-weight:400;white-space:nowrap;">294</div>
<div style="left:427px;top:41px;width:128px;height:23px;background:#191919;"></div>
<div style="left:555px;top:41px;width:126.5px;height:23px;background:#1e1e1e;"></div>
<div style="left:681.5px;top:41px;width:1px;height:23px;background:#141414;"></div>
<div style="left:682.5px;top:41px;width:127.5px;height:23px;background:#1e1e1e;"></div>
<div style="left:555px;top:64px;width:255px;height:1px;background:#101010;"></div>
<div style="left:340.3px;width:300px;text-align:center;top:46.1px;line-height:14px;font-size:10.4px;color:#6464ec;font-weight:400;white-space:nowrap;-webkit-text-stroke:0.15px #6464ec">Layers</div>
<div style="left:467.70000000000005px;width:300px;text-align:center;top:46.1px;line-height:14px;font-size:10.4px;color:#d2d2d2;font-weight:400;white-space:nowrap;-webkit-text-stroke:0.15px #d2d2d2">Media</div>
<div style="left:595.8px;width:300px;text-align:center;top:46.1px;line-height:14px;font-size:10.4px;color:#d2d2d2;font-weight:400;white-space:nowrap;-webkit-text-stroke:0.15px #d2d2d2">Audio</div>
<svg style="left:510.8px;top:74.5px;" width="9" height="11" viewBox="0 0 9 11"><path d="M0.5,0.5 H5.6 L8.5,3.4 V10.5 H0.5 Z" fill="#a0a0a0"/><path d="M5.6,0.5 V3.4 H8.5" fill="#707070"/></svg>
<div style="left:526.4px;top:72.5px;line-height:14px;font-size:10.2px;color:#cfcfcf;font-weight:400;white-space:nowrap;-webkit-text-stroke:0.15px #cfcfcf">Project</div>
<svg style="left:791.5px;top:74.5px;" width="11" height="10" viewBox="0 0 11 10"><path d="M1.3,5 V3.3 A2.3,2.3 0 0 1 5.9,3.3 V5" fill="none" stroke="#a8a8a8" stroke-width="1.1"/><rect x="3.8" y="4.3" width="6.9" height="4.9" rx="0.6" fill="#a8a8a8"/></svg>
<div style="left:427px;top:93.7px;width:383px;height:1px;background:#181818;"></div>
<div style="left:427px;top:123.4px;width:383px;height:1px;background:#181818;"></div>
<div style="left:427px;top:153.1px;width:383px;height:1px;background:#181818;"></div>
<div style="left:427px;top:182.8px;width:383px;height:1px;background:#181818;"></div>
<div style="left:427px;top:212.5px;width:383px;height:1px;background:#181818;"></div>
<div style="left:427px;top:242.2px;width:383px;height:1px;background:#181818;"></div>
<div style="left:427px;top:271.9px;width:383px;height:1px;background:#181818;"></div>
<div style="left:427px;top:301.6px;width:383px;height:1px;background:#181818;"></div>
<div style="left:427px;top:331.3px;width:383px;height:1px;background:#181818;"></div>
<div style="left:427px;top:361.0px;width:383px;height:1px;background:#181818;"></div>
<div style="left:427px;top:390.7px;width:383px;height:1px;background:#181818;"></div>
<div style="left:427px;top:243.2px;width:383px;height:28.7px;background:#555555;"></div>
<div style="left:433.1px;top:104.2px;width:9.2px;height:9.4px;background:#555;border-radius:1.8px;"></div>
<svg style="left:433.1px;top:104.2px;" width="10" height="10" viewBox="0 0 10 10"><polyline points="2.2,5 4,7 7.4,2.3" fill="none" stroke="#e6e6e6" stroke-width="1.25"/></svg>
<div style="left:451.2px;top:96.30000000000001px;width:37.6px;height:24.8px;background:#8f8f8f;border-top:2px solid #6a6a6a;border-bottom:2px solid #6a6a6a;box-sizing:border-box;"></div>
<svg style="left:454.2px;top:98.80000000000001px;" width="6" height="6" viewBox="0 0 6 6"><g stroke="#7c7c7c" stroke-width="0.6" fill="none"><line x1="3" y1="0.5" x2="3" y2="5.2"/><polyline points="1,3.4 3,5.4 5,3.4"/></g></svg>
<svg style="left:454.2px;top:105.60000000000001px;" width="6" height="6" viewBox="0 0 6 6"><g stroke="#7c7c7c" stroke-width="0.6" fill="none"><line x1="3" y1="0.5" x2="3" y2="5.2"/><polyline points="1,3.4 3,5.4 5,3.4"/></g></svg>
<svg style="left:454.2px;top:112.4px;" width="6" height="6" viewBox="0 0 6 6"><g stroke="#7c7c7c" stroke-width="0.6" fill="none"><line x1="3" y1="0.5" x2="3" y2="5.2"/><polyline points="1,3.4 3,5.4 5,3.4"/></g></svg>
<svg style="left:466.7px;top:98.80000000000001px;" width="6" height="6" viewBox="0 0 6 6"><g stroke="#7c7c7c" stroke-width="0.6" fill="none"><line x1="3" y1="0.5" x2="3" y2="5.2"/><polyline points="1,3.4 3,5.4 5,3.4"/></g></svg>
<svg style="left:466.7px;top:105.60000000000001px;" width="6" height="6" viewBox="0 0 6 6"><g stroke="#7c7c7c" stroke-width="0.6" fill="none"><line x1="3" y1="0.5" x2="3" y2="5.2"/><polyline points="1,3.4 3,5.4 5,3.4"/></g></svg>
<svg style="left:466.7px;top:112.4px;" width="6" height="6" viewBox="0 0 6 6"><g stroke="#7c7c7c" stroke-width="0.6" fill="none"><line x1="3" y1="0.5" x2="3" y2="5.2"/><polyline points="1,3.4 3,5.4 5,3.4"/></g></svg>
<svg style="left:479.2px;top:98.80000000000001px;" width="6" height="6" viewBox="0 0 6 6"><g stroke="#7c7c7c" stroke-width="0.6" fill="none"><line x1="3" y1="0.5" x2="3" y2="5.2"/><polyline points="1,3.4 3,5.4 5,3.4"/></g></svg>
<svg style="left:479.2px;top:105.60000000000001px;" width="6" height="6" viewBox="0 0 6 6"><g stroke="#7c7c7c" stroke-width="0.6" fill="none"><line x1="3" y1="0.5" x2="3" y2="5.2"/><polyline points="1,3.4 3,5.4 5,3.4"/></g></svg>
<svg style="left:479.2px;top:112.4px;" width="6" height="6" viewBox="0 0 6 6"><g stroke="#7c7c7c" stroke-width="0.6" fill="none"><line x1="3" y1="0.5" x2="3" y2="5.2"/><polyline points="1,3.4 3,5.4 5,3.4"/></g></svg>
<div style="left:463.5px;top:98.30000000000001px;width:0.8px;height:20.8px;background:#858585;"></div>
<div style="left:476.0px;top:98.30000000000001px;width:0.8px;height:20.8px;background:#858585;"></div>
<svg style="left:496.8px;top:105.60000000000001px;" width="8" height="7" viewBox="0 0 8 7"><polygon points="0.2,0.3 7.4,0.3 3.8,6.5" fill="#c8c8c8"/></svg>
<svg style="left:509.8px;top:103.5px;" width="12" height="11" viewBox="0 0 12 11"><rect x="3.2" y="3.6" width="8.2" height="7" fill="#6e6e6e"/><rect x="0.3" y="0.4" width="8.2" height="7" fill="#9c9c9c" stroke="#1f1f1f" stroke-width="0.6"/></svg>
<div style="left:526.2px;top:101.9px;line-height:14px;font-size:10.2px;color:#c8c8c8;font-weight:400;white-space:nowrap;text-decoration:underline;text-underline-offset:1px;text-decoration-color:#777">9</div>
<svg style="left:779.5px;top:103.9px;" width="10" height="10" viewBox="0 0 10 10"><rect x="0" y="0" width="7" height="1" fill="#777"/><rect x="0" y="1" width="2.4" height="9" fill="#8a8a8a"/><rect x="3.3" y="2.5" width="5.6" height="5" fill="#a8a8a8"/></svg>
<svg style="left:791.5px;top:103.9px;" width="11" height="10" viewBox="0 0 11 10"><path d="M1.3,5 V3.3 A2.3,2.3 0 0 1 5.9,3.3 V5" fill="none" stroke="#a8a8a8" stroke-width="1.1"/><rect x="3.8" y="4.3" width="6.9" height="4.9" rx="0.6" fill="#a8a8a8"/></svg>
<div style="left:433.1px;top:133.9px;width:9.2px;height:9.4px;background:#555;border-radius:1.8px;"></div>
<svg style="left:433.1px;top:133.9px;" width="10" height="10" viewBox="0 0 10 10"><polyline points="2.2,5 4,7 7.4,2.3" fill="none" stroke="#e6e6e6" stroke-width="1.25"/></svg>
<div style="left:451.2px;top:126.0px;width:37.6px;height:24.8px;background:#8f8f8f;border-top:2px solid #6a6a6a;border-bottom:2px solid #6a6a6a;box-sizing:border-box;"></div>
<svg style="left:463.0px;top:130.0px;" width="14" height="17" viewBox="0 0 14 17"><g stroke="#787878" stroke-width="1.1" fill="none"><line x1="7" y1="1" x2="7" y2="15"/><polyline points="2.5,10.5 7,15 11.5,10.5"/></g></svg>
<svg style="left:522.3px;top:133.0px;" width="13" height="12" viewBox="0 0 13 12"><rect x="0.4" y="0.5" width="9.5" height="8.5" fill="#7a7a7a"/><rect x="0.4" y="0.5" width="9.5" height="1.5" fill="#9a9a9a"/><rect x="5" y="4.6" width="7.4" height="6.9" rx="1.6" fill="#f2f2f2" stroke="#1f1f1f" stroke-width="0.5"/><g stroke="#1f1f1f" stroke-width="1.1" fill="none"><line x1="8.7" y1="5.8" x2="8.7" y2="10"/><polyline points="7,8.3 8.7,10 10.4,8.3"/></g></svg>
<div style="left:539.3px;top:131.6px;line-height:14px;font-size:10.2px;color:#c8c8c8;font-weight:400;white-space:nowrap;">9</div>
<svg style="left:791.5px;top:133.6px;" width="11" height="10" viewBox="0 0 11 10"><path d="M1.3,5 V3.3 A2.3,2.3 0 0 1 5.9,3.3 V5" fill="none" stroke="#a8a8a8" stroke-width="1.1"/><rect x="3.8" y="4.3" width="6.9" height="4.9" rx="0.6" fill="#a8a8a8"/></svg>
<div style="left:433.1px;top:163.6px;width:9.2px;height:9.4px;background:#555;border-radius:1.8px;"></div>
<svg style="left:433.1px;top:163.6px;" width="10" height="10" viewBox="0 0 10 10"><polyline points="2.2,5 4,7 7.4,2.3" fill="none" stroke="#e6e6e6" stroke-width="1.25"/></svg>
<div style="left:451.2px;top:155.7px;width:37.6px;height:24.8px;background:#8f8f8f;border-top:2px solid #6a6a6a;border-bottom:2px solid #6a6a6a;box-sizing:border-box;"></div>
<svg style="left:463.0px;top:159.7px;" width="14" height="17" viewBox="0 0 14 17"><g stroke="#787878" stroke-width="1.1" fill="none"><line x1="7" y1="1" x2="7" y2="15"/><polyline points="2.5,10.5 7,15 11.5,10.5"/></g></svg>
<svg style="left:522.3px;top:162.7px;" width="13" height="12" viewBox="0 0 13 12"><rect x="0.4" y="0.5" width="9.5" height="8.5" fill="#7a7a7a"/><rect x="0.4" y="0.5" width="9.5" height="1.5" fill="#9a9a9a"/><rect x="5" y="4.6" width="7.4" height="6.9" rx="1.6" fill="#f2f2f2" stroke="#1f1f1f" stroke-width="0.5"/><g stroke="#1f1f1f" stroke-width="1.1" fill="none"><line x1="8.7" y1="5.8" x2="8.7" y2="10"/><polyline points="7,8.3 8.7,10 10.4,8.3"/></g></svg>
<div style="left:539.3px;top:161.29999999999998px;line-height:14px;font-size:10.2px;color:#c8c8c8;font-weight:400;white-space:nowrap;">8</div>
<svg style="left:791.5px;top:163.29999999999998px;" width="11" height="10" viewBox="0 0 11 10"><path d="M1.3,5 V3.3 A2.3,2.3 0 0 1 5.9,3.3 V5" fill="none" stroke="#a8a8a8" stroke-width="1.1"/><rect x="3.8" y="4.3" width="6.9" height="4.9" rx="0.6" fill="#a8a8a8"/></svg>
<div style="left:433.1px;top:193.3px;width:9.2px;height:9.4px;background:#555;border-radius:1.8px;"></div>
<svg style="left:433.1px;top:193.3px;" width="10" height="10" viewBox="0 0 10 10"><polyline points="2.2,5 4,7 7.4,2.3" fill="none" stroke="#e6e6e6" stroke-width="1.25"/></svg>
<div style="left:451.2px;top:185.4px;width:37.6px;height:24.8px;background:#8f8f8f;border-top:2px solid #6a6a6a;border-bottom:2px solid #6a6a6a;box-sizing:border-box;"></div>
<svg style="left:463.0px;top:189.4px;" width="14" height="17" viewBox="0 0 14 17"><g stroke="#787878" stroke-width="1.1" fill="none"><line x1="7" y1="1" x2="7" y2="15"/><polyline points="2.5,10.5 7,15 11.5,10.5"/></g></svg>
<svg style="left:522.3px;top:192.4px;" width="13" height="12" viewBox="0 0 13 12"><rect x="0.4" y="0.5" width="9.5" height="8.5" fill="#7a7a7a"/><rect x="0.4" y="0.5" width="9.5" height="1.5" fill="#9a9a9a"/><rect x="5" y="4.6" width="7.4" height="6.9" rx="1.6" fill="#f2f2f2" stroke="#1f1f1f" stroke-width="0.5"/><g stroke="#1f1f1f" stroke-width="1.1" fill="none"><line x1="8.7" y1="5.8" x2="8.7" y2="10"/><polyline points="7,8.3 8.7,10 10.4,8.3"/></g></svg>
<div style="left:539.3px;top:191.0px;line-height:14px;font-size:10.2px;color:#c8c8c8;font-weight:400;white-space:nowrap;">7</div>
<svg style="left:791.5px;top:193.0px;" width="11" height="10" viewBox="0 0 11 10"><path d="M1.3,5 V3.3 A2.3,2.3 0 0 1 5.9,3.3 V5" fill="none" stroke="#a8a8a8" stroke-width="1.1"/><rect x="3.8" y="4.3" width="6.9" height="4.9" rx="0.6" fill="#a8a8a8"/></svg>
<div style="left:433.1px;top:223.0px;width:9.2px;height:9.4px;background:#555;border-radius:1.8px;"></div>
<svg style="left:433.1px;top:223.0px;" width="10" height="10" viewBox="0 0 10 10"><polyline points="2.2,5 4,7 7.4,2.3" fill="none" stroke="#e6e6e6" stroke-width="1.25"/></svg>
<div style="left:451.2px;top:215.1px;width:37.6px;height:24.8px;background:#8f8f8f;border-top:2px solid #6a6a6a;border-bottom:2px solid #6a6a6a;box-sizing:border-box;"></div>
<svg style="left:463.0px;top:219.1px;" width="14" height="17" viewBox="0 0 14 17"><g stroke="#787878" stroke-width="1.1" fill="none"><line x1="7" y1="1" x2="7" y2="15"/><polyline points="2.5,10.5 7,15 11.5,10.5"/></g></svg>
<svg style="left:522.3px;top:222.1px;" width="13" height="12" viewBox="0 0 13 12"><rect x="0.4" y="0.5" width="9.5" height="8.5" fill="#7a7a7a"/><rect x="0.4" y="0.5" width="9.5" height="1.5" fill="#9a9a9a"/><rect x="5" y="4.6" width="7.4" height="6.9" rx="1.6" fill="#f2f2f2" stroke="#1f1f1f" stroke-width="0.5"/><g stroke="#1f1f1f" stroke-width="1.1" fill="none"><line x1="8.7" y1="5.8" x2="8.7" y2="10"/><polyline points="7,8.3 8.7,10 10.4,8.3"/></g></svg>
<div style="left:539.3px;top:220.7px;line-height:14px;font-size:10.2px;color:#c8c8c8;font-weight:400;white-space:nowrap;">6</div>
<svg style="left:791.5px;top:222.7px;" width="11" height="10" viewBox="0 0 11 10"><path d="M1.3,5 V3.3 A2.3,2.3 0 0 1 5.9,3.3 V5" fill="none" stroke="#a8a8a8" stroke-width="1.1"/><rect x="3.8" y="4.3" width="6.9" height="4.9" rx="0.6" fill="#a8a8a8"/></svg>
<div style="left:433.1px;top:252.7px;width:9.2px;height:9.4px;background:#6e6e6e;border-radius:1.8px;"></div>
<svg style="left:433.1px;top:252.7px;" width="10" height="10" viewBox="0 0 10 10"><polyline points="2.2,5 4,7 7.4,2.3" fill="none" stroke="#e6e6e6" stroke-width="1.25"/></svg>
<div style="left:451.2px;top:244.79999999999998px;width:37.6px;height:24.8px;background:#8f8f8f;border-top:2px solid #6a6a6a;border-bottom:2px solid #6a6a6a;box-sizing:border-box;"></div>
<svg style="left:463.0px;top:248.79999999999998px;" width="14" height="17" viewBox="0 0 14 17"><g stroke="#787878" stroke-width="1.1" fill="none"><line x1="7" y1="1" x2="7" y2="15"/><polyline points="2.5,10.5 7,15 11.5,10.5"/></g></svg>
<svg style="left:522.3px;top:251.79999999999998px;" width="13" height="12" viewBox="0 0 13 12"><rect x="0.4" y="0.5" width="9.5" height="8.5" fill="#7a7a7a"/><rect x="0.4" y="0.5" width="9.5" height="1.5" fill="#9a9a9a"/><rect x="5" y="4.6" width="7.4" height="6.9" rx="1.6" fill="#f2f2f2" stroke="#555" stroke-width="0.5"/><g stroke="#1f1f1f" stroke-width="1.1" fill="none"><line x1="8.7" y1="5.8" x2="8.7" y2="10"/><polyline points="7,8.3 8.7,10 10.4,8.3"/></g></svg>
<div style="left:539.3px;top:250.39999999999998px;line-height:14px;font-size:10.2px;color:#e8e8e8;font-weight:400;white-space:nowrap;">5</div>
<svg style="left:791.5px;top:252.39999999999998px;" width="11" height="10" viewBox="0 0 11 10"><path d="M1.3,5 V3.3 A2.3,2.3 0 0 1 5.9,3.3 V5" fill="none" stroke="#a8a8a8" stroke-width="1.1"/><rect x="3.8" y="4.3" width="6.9" height="4.9" rx="0.6" fill="#a8a8a8"/></svg>
<div style="left:433.1px;top:282.4px;width:9.2px;height:9.4px;background:#555;border-radius:1.8px;"></div>
<svg style="left:433.1px;top:282.4px;" width="10" height="10" viewBox="0 0 10 10"><polyline points="2.2,5 4,7 7.4,2.3" fill="none" stroke="#e6e6e6" stroke-width="1.25"/></svg>
<div style="left:451.2px;top:274.49999999999994px;width:37.6px;height:24.8px;background:#8f8f8f;border-top:2px solid #6a6a6a;border-bottom:2px solid #6a6a6a;box-sizing:border-box;"></div>
<svg style="left:463.0px;top:278.49999999999994px;" width="14" height="17" viewBox="0 0 14 17"><g stroke="#787878" stroke-width="1.1" fill="none"><line x1="7" y1="1" x2="7" y2="15"/><polyline points="2.5,10.5 7,15 11.5,10.5"/></g></svg>
<svg style="left:522.3px;top:281.49999999999994px;" width="13" height="12" viewBox="0 0 13 12"><rect x="0.4" y="0.5" width="9.5" height="8.5" fill="#7a7a7a"/><rect x="0.4" y="0.5" width="9.5" height="1.5" fill="#9a9a9a"/><rect x="5" y="4.6" width="7.4" height="6.9" rx="1.6" fill="#f2f2f2" stroke="#1f1f1f" stroke-width="0.5"/><g stroke="#1f1f1f" stroke-width="1.1" fill="none"><line x1="8.7" y1="5.8" x2="8.7" y2="10"/><polyline points="7,8.3 8.7,10 10.4,8.3"/></g></svg>
<div style="left:539.3px;top:280.09999999999997px;line-height:14px;font-size:10.2px;color:#c8c8c8;font-weight:400;white-space:nowrap;">4</div>
<svg style="left:791.5px;top:282.09999999999997px;" width="11" height="10" viewBox="0 0 11 10"><path d="M1.3,5 V3.3 A2.3,2.3 0 0 1 5.9,3.3 V5" fill="none" stroke="#a8a8a8" stroke-width="1.1"/><rect x="3.8" y="4.3" width="6.9" height="4.9" rx="0.6" fill="#a8a8a8"/></svg>
<div style="left:433.1px;top:312.1px;width:9.2px;height:9.4px;background:#555;border-radius:1.8px;"></div>
<svg style="left:433.1px;top:312.1px;" width="10" height="10" viewBox="0 0 10 10"><polyline points="2.2,5 4,7 7.4,2.3" fill="none" stroke="#e6e6e6" stroke-width="1.25"/></svg>
<div style="left:451.2px;top:304.2px;width:37.6px;height:24.8px;background:#8f8f8f;border-top:2px solid #6a6a6a;border-bottom:2px solid #6a6a6a;box-sizing:border-box;"></div>
<svg style="left:463.0px;top:308.2px;" width="14" height="17" viewBox="0 0 14 17"><g stroke="#787878" stroke-width="1.1" fill="none"><line x1="7" y1="1" x2="7" y2="15"/><polyline points="2.5,10.5 7,15 11.5,10.5"/></g></svg>
<svg style="left:522.3px;top:311.2px;" width="13" height="12" viewBox="0 0 13 12"><rect x="0.4" y="0.5" width="9.5" height="8.5" fill="#7a7a7a"/><rect x="0.4" y="0.5" width="9.5" height="1.5" fill="#9a9a9a"/><rect x="5" y="4.6" width="7.4" height="6.9" rx="1.6" fill="#f2f2f2" stroke="#1f1f1f" stroke-width="0.5"/><g stroke="#1f1f1f" stroke-width="1.1" fill="none"><line x1="8.7" y1="5.8" x2="8.7" y2="10"/><polyline points="7,8.3 8.7,10 10.4,8.3"/></g></svg>
<div style="left:539.3px;top:309.8px;line-height:14px;font-size:10.2px;color:#c8c8c8;font-weight:400;white-space:nowrap;">3</div>
<svg style="left:791.5px;top:311.8px;" width="11" height="10" viewBox="0 0 11 10"><path d="M1.3,5 V3.3 A2.3,2.3 0 0 1 5.9,3.3 V5" fill="none" stroke="#a8a8a8" stroke-width="1.1"/><rect x="3.8" y="4.3" width="6.9" height="4.9" rx="0.6" fill="#a8a8a8"/></svg>
<div style="left:433.1px;top:341.8px;width:9.2px;height:9.4px;background:#555;border-radius:1.8px;"></div>
<svg style="left:433.1px;top:341.8px;" width="10" height="10" viewBox="0 0 10 10"><polyline points="2.2,5 4,7 7.4,2.3" fill="none" stroke="#e6e6e6" stroke-width="1.25"/></svg>
<div style="left:451.2px;top:333.9px;width:37.6px;height:24.8px;background:#8f8f8f;border-top:2px solid #6a6a6a;border-bottom:2px solid #6a6a6a;box-sizing:border-box;"></div>
<svg style="left:463.0px;top:337.9px;" width="14" height="17" viewBox="0 0 14 17"><g stroke="#787878" stroke-width="1.1" fill="none"><line x1="7" y1="1" x2="7" y2="15"/><polyline points="2.5,10.5 7,15 11.5,10.5"/></g></svg>
<svg style="left:522.3px;top:340.9px;" width="13" height="12" viewBox="0 0 13 12"><rect x="0.4" y="0.5" width="9.5" height="8.5" fill="#7a7a7a"/><rect x="0.4" y="0.5" width="9.5" height="1.5" fill="#9a9a9a"/><rect x="5" y="4.6" width="7.4" height="6.9" rx="1.6" fill="#f2f2f2" stroke="#1f1f1f" stroke-width="0.5"/><g stroke="#1f1f1f" stroke-width="1.1" fill="none"><line x1="8.7" y1="5.8" x2="8.7" y2="10"/><polyline points="7,8.3 8.7,10 10.4,8.3"/></g></svg>
<div style="left:539.3px;top:339.5px;line-height:14px;font-size:10.2px;color:#c8c8c8;font-weight:400;white-space:nowrap;">2</div>
<svg style="left:791.5px;top:341.5px;" width="11" height="10" viewBox="0 0 11 10"><path d="M1.3,5 V3.3 A2.3,2.3 0 0 1 5.9,3.3 V5" fill="none" stroke="#a8a8a8" stroke-width="1.1"/><rect x="3.8" y="4.3" width="6.9" height="4.9" rx="0.6" fill="#a8a8a8"/></svg>
<div style="left:433.1px;top:371.5px;width:9.2px;height:9.4px;background:#555;border-radius:1.8px;"></div>
<svg style="left:433.1px;top:371.5px;" width="10" height="10" viewBox="0 0 10 10"><polyline points="2.2,5 4,7 7.4,2.3" fill="none" stroke="#e6e6e6" stroke-width="1.25"/></svg>
<div style="left:451.2px;top:363.59999999999997px;width:37.6px;height:24.8px;background:#8f8f8f;border-top:2px solid #6a6a6a;border-bottom:2px solid #6a6a6a;box-sizing:border-box;"></div>
<svg style="left:463.0px;top:367.59999999999997px;" width="14" height="17" viewBox="0 0 14 17"><g stroke="#787878" stroke-width="1.1" fill="none"><line x1="7" y1="1" x2="7" y2="15"/><polyline points="2.5,10.5 7,15 11.5,10.5"/></g></svg>
<svg style="left:522.3px;top:370.59999999999997px;" width="13" height="12" viewBox="0 0 13 12"><rect x="0.4" y="0.5" width="9.5" height="8.5" fill="#7a7a7a"/><rect x="0.4" y="0.5" width="9.5" height="1.5" fill="#9a9a9a"/><rect x="5" y="4.6" width="7.4" height="6.9" rx="1.6" fill="#f2f2f2" stroke="#1f1f1f" stroke-width="0.5"/><g stroke="#1f1f1f" stroke-width="1.1" fill="none"><line x1="8.7" y1="5.8" x2="8.7" y2="10"/><polyline points="7,8.3 8.7,10 10.4,8.3"/></g></svg>
<div style="left:539.3px;top:369.2px;line-height:14px;font-size:10.2px;color:#c8c8c8;font-weight:400;white-space:nowrap;">1</div>
<svg style="left:791.5px;top:371.2px;" width="11" height="10" viewBox="0 0 11 10"><path d="M1.3,5 V3.3 A2.3,2.3 0 0 1 5.9,3.3 V5" fill="none" stroke="#a8a8a8" stroke-width="1.1"/><rect x="3.8" y="4.3" width="6.9" height="4.9" rx="0.6" fill="#a8a8a8"/></svg>
<div style="left:811px;top:41px;width:1237px;height:23px;background:#1e1e1e;"></div>
<div style="left:811px;top:64px;width:1237px;height:1px;background:#0c0c0c;"></div>
<div style="left:1562.5px;width:300px;text-align:right;top:45.6px;line-height:14px;font-size:10.2px;color:#d0d0d0;font-weight:400;white-space:nowrap;-webkit-text-stroke:0.15px #d0d0d0">100%</div>
<svg style="left:1863.8px;top:47px;" width="6" height="11" viewBox="0 0 6 11"><g fill="none" stroke="#c0c0c0" stroke-width="0.9"><polyline points="0.8,4 3,1.4 5.2,4"/><polyline points="0.8,6.8 3,9.4 5.2,6.8"/></g></svg>
<div style="left:1883px;top:46.8px;width:11.4px;height:9.9px;background:linear-gradient(135deg,#b04090,#5060c0 40%,#40a070 70%,#c0b030);border-radius:1px;"></div>
<div style="left:1886.5px;top:49.5px;width:4px;height:4px;border-radius:2px;background:#ddd;"></div>
<svg style="left:1899.2px;top:50.5px;" width="6" height="4" viewBox="0 0 6 4"><polyline points="0.5,0.6 2.9,3.2 5.3,0.6" fill="none" stroke="#666" stroke-width="0.9"/></svg>
<div style="left:1918px;top:45.6px;line-height:14px;font-size:10.2px;color:#d0d0d0;font-weight:400;white-space:nowrap;-webkit-text-stroke:0.15px #d0d0d0">Render</div>
<svg style="left:1952.8px;top:50.3px;" width="6" height="4" viewBox="0 0 6 4"><polyline points="0.5,0.6 2.9,3.2 5.3,0.6" fill="none" stroke="#d0d0d0" stroke-width="1.1"/></svg>
<div style="left:1972px;top:45.6px;line-height:14px;font-size:10.2px;color:#d0d0d0;font-weight:400;white-space:nowrap;-webkit-text-stroke:0.15px #d0d0d0">View</div>
<svg style="left:1996.5px;top:50.3px;" width="6" height="4" viewBox="0 0 6 4"><polyline points="0.5,0.6 2.9,3.2 5.3,0.6" fill="none" stroke="#d0d0d0" stroke-width="1.1"/></svg>
<div style="left:2016px;top:47.4px;width:11px;height:9.4px;background:#3a3a3a;border:1px solid #b8b8b8;box-sizing:border-box;"></div>
<svg style="left:2030.5px;top:47px;" width="6" height="11" viewBox="0 0 6 11"><g fill="none" stroke="#c0c0c0" stroke-width="0.9"><polyline points="0.8,4 3,1.4 5.2,4"/><polyline points="0.8,6.8 3,9.4 5.2,6.8"/></g></svg>
<svg style="left:811px;top:65px;" width="1237" height="13" viewBox="0 0 1237 13"><line x1="25.5" y1="2" x2="25.5" y2="11.5" stroke="#2d2d2d" stroke-width="1"/><line x1="33.5" y1="2" x2="33.5" y2="11.5" stroke="#2d2d2d" stroke-width="1"/><line x1="41.5" y1="2" x2="41.5" y2="11.5" stroke="#2d2d2d" stroke-width="1"/><line x1="49.5" y1="2" x2="49.5" y2="11.5" stroke="#2d2d2d" stroke-width="1"/><line x1="57.5" y1="2" x2="57.5" y2="11.5" stroke="#2d2d2d" stroke-width="1"/><line x1="65.5" y1="2" x2="65.5" y2="11.5" stroke="#4a4a4a" stroke-width="1"/><line x1="73.5" y1="2" x2="73.5" y2="11.5" stroke="#2d2d2d" stroke-width="1"/><line x1="81.5" y1="2" x2="81.5" y2="11.5" stroke="#2d2d2d" stroke-width="1"/><line x1="89.5" y1="2" x2="89.5" y2="11.5" stroke="#2d2d2d" stroke-width="1"/><line x1="97.5" y1="2" x2="97.5" y2="11.5" stroke="#2d2d2d" stroke-width="1"/><line x1="105.5" y1="2" x2="105.5" y2="11.5" stroke="#2d2d2d" stroke-width="1"/><line x1="113.5" y1="2" x2="113.5" y2="11.5" stroke="#2d2d2d" stroke-width="1"/><line x1="121.5" y1="2" x2="121.5" y2="11.5" stroke="#2d2d2d" stroke-width="1"/><line x1="129.5" y1="2" x2="129.5" y2="11.5" stroke="#2d2d2d" stroke-width="1"/><line x1="137.5" y1="2" x2="137.5" y2="11.5" stroke="#2d2d2d" stroke-width="1"/><line x1="145.5" y1="2" x2="145.5" y2="11.5" stroke="#4a4a4a" stroke-width="1"/><line x1="153.5" y1="2" x2="153.5" y2="11.5" stroke="#2d2d2d" stroke-width="1"/><line x1="161.5" y1="2" x2="161.5" y2="11.5" stroke="#2d2d2d" stroke-width="1"/><line x1="169.5" y1="2" x2="169.5" y2="11.5" stroke="#2d2d2d" stroke-width="1"/><line x1="177.5" y1="2" x2="177.5" y2="11.5" stroke="#2d2d2d" stroke-width="1"/><line x1="185.5" y1="2" x2="185.5" y2="11.5" stroke="#2d2d2d" stroke-width="1"/><line x1="193.5" y1="2" x2="193.5" y2="11.5" stroke="#2d2d2d" stroke-width="1"/><line x1="201.5" y1="2" x2="201.5" y2="11.5" stroke="#2d2d2d" stroke-width="1"/><line x1="209.5" y1="2" x2="209.5" y2="11.5" stroke="#2d2d2d" stroke-width="1"/><line x1="217.5" y1="2" x2="217.5" y2="11.5" stroke="#2d2d2d" stroke-width="1"/><line x1="225.5" y1="2" x2="225.5" y2="11.5" stroke="#4a4a4a" stroke-width="1"/><line x1="233.5" y1="2" x2="233.5" y2="11.5" stroke="#2d2d2d" stroke-width="1"/><line x1="241.5" y1="2" x2="241.5" y2="11.5" stroke="#2d2d2d" stroke-width="1"/><line x1="249.5" y1="2" x2="249.5" y2="11.5" stroke="#2d2d2d" stroke-width="1"/><line x1="257.5" y1="2" x2="257.5" y2="11.5" stroke="#2d2d2d" stroke-width="1"/><line x1="265.5" y1="2" x2="265.5" y2="11.5" stroke="#2d2d2d" stroke-width="1"/><line x1="273.5" y1="2" x2="273.5" y2="11.5" stroke="#2d2d2d" stroke-width="1"/><line x1="281.5" y1="2" x2="281.5" y2="11.5" stroke="#2d2d2d" stroke-width="1"/><line x1="289.5" y1="2" x2="289.5" y2="11.5" stroke="#2d2d2d" stroke-width="1"/><line x1="297.5" y1="2" x2="297.5" y2="11.5" stroke="#2d2d2d" stroke-width="1"/><line x1="305.5" y1="2" x2="305.5" y2="11.5" stroke="#4a4a4a" stroke-width="1"/><line x1="313.5" y1="2" x2="313.5" y2="11.5" stroke="#2d2d2d" stroke-width="1"/><line x1="321.5" y1="2" x2="321.5" y2="11.5" stroke="#2d2d2d" stroke-width="1"/><line x1="329.5" y1="2" x2="329.5" y2="11.5" stroke="#2d2d2d" stroke-width="1"/><line x1="337.5" y1="2" x2="337.5" y2="11.5" stroke="#2d2d2d" stroke-width="1"/><line x1="345.5" y1="2" x2="345.5" y2="11.5" stroke="#2d2d2d" stroke-width="1"/><line x1="353.5" y1="2" x2="353.5" y2="11.5" stroke="#2d2d2d" stroke-width="1"/><line x1="361.5" y1="2" x2="361.5" y2="11.5" stroke="#2d2d2d" stroke-width="1"/><line x1="369.5" y1="2" x2="369.5" y2="11.5" stroke="#2d2d2d" stroke-width="1"/><line x1="377.5" y1="2" x2="377.5" y2="11.5" stroke="#2d2d2d" stroke-width="1"/><line x1="385.5" y1="2" x2="385.5" y2="11.5" stroke="#4a4a4a" stroke-width="1"/><line x1="393.5" y1="2" x2="393.5" y2="11.5" stroke="#2d2d2d" stroke-width="1"/><line x1="401.5" y1="2" x2="401.5" y2="11.5" stroke="#2d2d2d" stroke-width="1"/><line x1="409.5" y1="2" x2="409.5" y2="11.5" stroke="#2d2d2d" stroke-width="1"/><line x1="417.5" y1="2" x2="417.5" y2="11.5" stroke="#2d2d2d" stroke-width="1"/><line x1="425.5" y1="2" x2="425.5" y2="11.5" stroke="#2d2d2d" stroke-width="1"/><line x1="433.5" y1="2" x2="433.5" y2="11.5" stroke="#2d2d2d" stroke-width="1"/><line x1="441.5" y1="2" x2="441.5" y2="11.5" stroke="#2d2d2d" stroke-width="1"/><line x1="449.5" y1="2" x2="449.5" y2="11.5" stroke="#2d2d2d" stroke-width="1"/><line x1="457.5" y1="2" x2="457.5" y2="11.5" stroke="#2d2d2d" stroke-width="1"/><line x1="465.5" y1="2" x2="465.5" y2="11.5" stroke="#4a4a4a" stroke-width="1"/><line x1="473.5" y1="2" x2="473.5" y2="11.5" stroke="#2d2d2d" stroke-width="1"/><line x1="481.5" y1="2" x2="481.5" y2="11.5" stroke="#2d2d2d" stroke-width="1"/><line x1="489.5" y1="2" x2="489.5" y2="11.5" stroke="#2d2d2d" stroke-width="1"/><line x1="497.5" y1="2" x2="497.5" y2="11.5" stroke="#2d2d2d" stroke-width="1"/><line x1="505.5" y1="2" x2="505.5" y2="11.5" stroke="#2d2d2d" stroke-width="1"/><line x1="513.5" y1="2" x2="513.5" y2="11.5" stroke="#2d2d2d" stroke-width="1"/><line x1="521.5" y1="2" x2="521.5" y2="11.5" stroke="#2d2d2d" stroke-width="1"/><line x1="529.5" y1="2" x2="529.5" y2="11.5" stroke="#2d2d2d" stroke-width="1"/><line x1="537.5" y1="2" x2="537.5" y2="11.5" stroke="#2d2d2d" stroke-width="1"/><line x1="545.5" y1="2" x2="545.5" y2="11.5" stroke="#4a4a4a" stroke-width="1"/><line x1="553.5" y1="2" x2="553.5" y2="11.5" stroke="#2d2d2d" stroke-width="1"/><line x1="561.5" y1="2" x2="561.5" y2="11.5" stroke="#2d2d2d" stroke-width="1"/><line x1="569.5" y1="2" x2="569.5" y2="11.5" stroke="#2d2d2d" stroke-width="1"/><line x1="577.5" y1="2" x2="577.5" y2="11.5" stroke="#2d2d2d" stroke-width="1"/><line x1="585.5" y1="2" x2="585.5" y2="11.5" stroke="#2d2d2d" stroke-width="1"/><line x1="593.5" y1="2" x2="593.5" y2="11.5" stroke="#2d2d2d" stroke-width="1"/><line x1="601.5" y1="2" x2="601.5" y2="11.5" stroke="#2d2d2d" stroke-width="1"/><line x1="609.5" y1="2" x2="609.5" y2="11.5" stroke="#2d2d2d" stroke-width="1"/><line x1="617.5" y1="2" x2="617.5" y2="11.5" stroke="#2d2d2d" stroke-width="1"/><line x1="625.5" y1="2" x2="625.5" y2="11.5" stroke="#4a4a4a" stroke-width="1"/><line x1="633.5" y1="2" x2="633.5" y2="11.5" stroke="#2d2d2d" stroke-width="1"/><line x1="641.5" y1="2" x2="641.5" y2="11.5" stroke="#2d2d2d" stroke-width="1"/><line x1="649.5" y1="2" x2="649.5" y2="11.5" stroke="#2d2d2d" stroke-width="1"/><line x1="657.5" y1="2" x2="657.5" y2="11.5" stroke="#2d2d2d" stroke-width="1"/><line x1="665.5" y1="2" x2="665.5" y2="11.5" stroke="#2d2d2d" stroke-width="1"/><line x1="673.5" y1="2" x2="673.5" y2="11.5" stroke="#2d2d2d" stroke-width="1"/><line x1="681.5" y1="2" x2="681.5" y2="11.5" stroke="#2d2d2d" stroke-width="1"/><line x1="689.5" y1="2" x2="689.5" y2="11.5" stroke="#2d2d2d" stroke-width="1"/><line x1="697.5" y1="2" x2="697.5" y2="11.5" stroke="#2d2d2d" stroke-width="1"/><line x1="705.5" y1="2" x2="705.5" y2="11.5" stroke="#4a4a4a" stroke-width="1"/><line x1="713.5" y1="2" x2="713.5" y2="11.5" stroke="#2d2d2d" stroke-width="1"/><line x1="721.5" y1="2" x2="721.5" y2="11.5" stroke="#2d2d2d" stroke-width="1"/><line x1="729.5" y1="2" x2="729.5" y2="11.5" stroke="#2d2d2d" stroke-width="1"/><line x1="737.5" y1="2" x2="737.5" y2="11.5" stroke="#2d2d2d" stroke-width="1"/><line x1="745.5" y1="2" x2="745.5" y2="11.5" stroke="#2d2d2d" stroke-width="1"/><line x1="753.5" y1="2" x2="753.5" y2="11.5" stroke="#2d2d2d" stroke-width="1"/><line x1="761.5" y1="2" x2="761.5" y2="11.5" stroke="#2d2d2d" stroke-width="1"/><line x1="769.5" y1="2" x2="769.5" y2="11.5" stroke="#2d2d2d" stroke-width="1"/><line x1="777.5" y1="2" x2="777.5" y2="11.5" stroke="#2d2d2d" stroke-width="1"/><line x1="785.5" y1="2" x2="785.5" y2="11.5" stroke="#4a4a4a" stroke-width="1"/><line x1="793.5" y1="2" x2="793.5" y2="11.5" stroke="#2d2d2d" stroke-width="1"/><line x1="801.5" y1="2" x2="801.5" y2="11.5" stroke="#2d2d2d" stroke-width="1"/><line x1="809.5" y1="2" x2="809.5" y2="11.5" stroke="#2d2d2d" stroke-width="1"/><line x1="817.5" y1="2" x2="817.5" y2="11.5" stroke="#2d2d2d" stroke-width="1"/><line x1="825.5" y1="2" x2="825.5" y2="11.5" stroke="#2d2d2d" stroke-width="1"/><line x1="833.5" y1="2" x2="833.5" y2="11.5" stroke="#2d2d2d" stroke-width="1"/><line x1="841.5" y1="2" x2="841.5" y2="11.5" stroke="#2d2d2d" stroke-width="1"/><line x1="849.5" y1="2" x2="849.5" y2="11.5" stroke="#2d2d2d" stroke-width="1"/><line x1="857.5" y1="2" x2="857.5" y2="11.5" stroke="#2d2d2d" stroke-width="1"/><line x1="865.5" y1="2" x2="865.5" y2="11.5" stroke="#4a4a4a" stroke-width="1"/><line x1="873.5" y1="2" x2="873.5" y2="11.5" stroke="#2d2d2d" stroke-width="1"/><line x1="881.5" y1="2" x2="881.5" y2="11.5" stroke="#2d2d2d" stroke-width="1"/><line x1="889.5" y1="2" x2="889.5" y2="11.5" stroke="#2d2d2d" stroke-width="1"/><line x1="897.5" y1="2" x2="897.5" y2="11.5" stroke="#2d2d2d" stroke-width="1"/><line x1="905.5" y1="2" x2="905.5" y2="11.5" stroke="#2d2d2d" stroke-width="1"/><line x1="913.5" y1="2" x2="913.5" y2="11.5" stroke="#2d2d2d" stroke-width="1"/><line x1="921.5" y1="2" x2="921.5" y2="11.5" stroke="#2d2d2d" stroke-width="1"/><line x1="929.5" y1="2" x2="929.5" y2="11.5" stroke="#2d2d2d" stroke-width="1"/><line x1="937.5" y1="2" x2="937.5" y2="11.5" stroke="#2d2d2d" stroke-width="1"/><line x1="945.5" y1="2" x2="945.5" y2="11.5" stroke="#4a4a4a" stroke-width="1"/><line x1="953.5" y1="2" x2="953.5" y2="11.5" stroke="#2d2d2d" stroke-width="1"/><line x1="961.5" y1="2" x2="961.5" y2="11.5" stroke="#2d2d2d" stroke-width="1"/><line x1="969.5" y1="2" x2="969.5" y2="11.5" stroke="#2d2d2d" stroke-width="1"/><line x1="977.5" y1="2" x2="977.5" y2="11.5" stroke="#2d2d2d" stroke-width="1"/><line x1="985.5" y1="2" x2="985.5" y2="11.5" stroke="#2d2d2d" stroke-width="1"/><line x1="993.5" y1="2" x2="993.5" y2="11.5" stroke="#2d2d2d" stroke-width="1"/><line x1="1001.5" y1="2" x2="1001.5" y2="11.5" stroke="#2d2d2d" stroke-width="1"/><line x1="1009.5" y1="2" x2="1009.5" y2="11.5" stroke="#2d2d2d" stroke-width="1"/><line x1="1017.5" y1="2" x2="1017.5" y2="11.5" stroke="#2d2d2d" stroke-width="1"/><line x1="1025.5" y1="2" x2="1025.5" y2="11.5" stroke="#4a4a4a" stroke-width="1"/><line x1="1033.5" y1="2" x2="1033.5" y2="11.5" stroke="#2d2d2d" stroke-width="1"/><line x1="1041.5" y1="2" x2="1041.5" y2="11.5" stroke="#2d2d2d" stroke-width="1"/><line x1="1049.5" y1="2" x2="1049.5" y2="11.5" stroke="#2d2d2d" stroke-width="1"/><line x1="1057.5" y1="2" x2="1057.5" y2="11.5" stroke="#2d2d2d" stroke-width="1"/><line x1="1065.5" y1="2" x2="1065.5" y2="11.5" stroke="#2d2d2d" stroke-width="1"/><line x1="1073.5" y1="2" x2="1073.5" y2="11.5" stroke="#2d2d2d" stroke-width="1"/><line x1="1081.5" y1="2" x2="1081.5" y2="11.5" stroke="#2d2d2d" stroke-width="1"/><line x1="1089.5" y1="2" x2="1089.5" y2="11.5" stroke="#2d2d2d" stroke-width="1"/><line x1="1097.5" y1="2" x2="1097.5" y2="11.5" stroke="#2d2d2d" stroke-width="1"/><line x1="1105.5" y1="2" x2="1105.5" y2="11.5" stroke="#4a4a4a" stroke-width="1"/><line x1="1113.5" y1="2" x2="1113.5" y2="11.5" stroke="#2d2d2d" stroke-width="1"/><line x1="1121.5" y1="2" x2="1121.5" y2="11.5" stroke="#2d2d2d" stroke-width="1"/><line x1="1129.5" y1="2" x2="1129.5" y2="11.5" stroke="#2d2d2d" stroke-width="1"/><line x1="1137.5" y1="2" x2="1137.5" y2="11.5" stroke="#2d2d2d" stroke-width="1"/><line x1="1145.5" y1="2" x2="1145.5" y2="11.5" stroke="#2d2d2d" stroke-width="1"/><line x1="1153.5" y1="2" x2="1153.5" y2="11.5" stroke="#2d2d2d" stroke-width="1"/><line x1="1161.5" y1="2" x2="1161.5" y2="11.5" stroke="#2d2d2d" stroke-width="1"/><line x1="1169.5" y1="2" x2="1169.5" y2="11.5" stroke="#2d2d2d" stroke-width="1"/><line x1="1177.5" y1="2" x2="1177.5" y2="11.5" stroke="#2d2d2d" stroke-width="1"/><line x1="1185.5" y1="2" x2="1185.5" y2="11.5" stroke="#4a4a4a" stroke-width="1"/><line x1="1193.5" y1="2" x2="1193.5" y2="11.5" stroke="#2d2d2d" stroke-width="1"/><line x1="1201.5" y1="2" x2="1201.5" y2="11.5" stroke="#2d2d2d" stroke-width="1"/><line x1="1209.5" y1="2" x2="1209.5" y2="11.5" stroke="#2d2d2d" stroke-width="1"/><line x1="1217.5" y1="2" x2="1217.5" y2="11.5" stroke="#2d2d2d" stroke-width="1"/><line x1="1225.5" y1="2" x2="1225.5" y2="11.5" stroke="#2d2d2d" stroke-width="1"/><line x1="1233.5" y1="2" x2="1233.5" y2="11.5" stroke="#2d2d2d" stroke-width="1"/></svg>
<div style="left:811px;top:65.5px;width:13px;height:12px;background:transparent;border-right:1px solid #484848;border-bottom:1px solid #484848;box-sizing:border-box;"></div>
<div style="left:878.3px;top:64.1px;line-height:14px;font-size:8.6px;color:#a0a0a0;font-weight:400;white-space:nowrap;">-1400</div>
<div style="left:958.3px;top:64.1px;line-height:14px;font-size:8.6px;color:#a0a0a0;font-weight:400;white-space:nowrap;">-1200</div>
<div style="left:1038.3px;top:64.1px;line-height:14px;font-size:8.6px;color:#a0a0a0;font-weight:400;white-space:nowrap;">-1000</div>
<div style="left:1118.3px;top:64.1px;line-height:14px;font-size:8.6px;color:#a0a0a0;font-weight:400;white-space:nowrap;">-800</div>
<div style="left:1198.3px;top:64.1px;line-height:14px;font-size:8.6px;color:#a0a0a0;font-weight:400;white-space:nowrap;">-600</div>
<div style="left:1278.3px;top:64.1px;line-height:14px;font-size:8.6px;color:#a0a0a0;font-weight:400;white-space:nowrap;">-400</div>
<div style="left:1358.3px;top:64.1px;line-height:14px;font-size:8.6px;color:#a0a0a0;font-weight:400;white-space:nowrap;">-200</div>
<div style="left:1438.3px;top:64.1px;line-height:14px;font-size:8.6px;color:#a0a0a0;font-weight:400;white-space:nowrap;">0</div>
<div style="left:1518.3px;top:64.1px;line-height:14px;font-size:8.6px;color:#a0a0a0;font-weight:400;white-space:nowrap;">200</div>
<div style="left:1598.3px;top:64.1px;line-height:14px;font-size:8.6px;color:#a0a0a0;font-weight:400;white-space:nowrap;">400</div>
<div style="left:1678.3px;top:64.1px;line-height:14px;font-size:8.6px;color:#a0a0a0;font-weight:400;white-space:nowrap;">600</div>
<div style="left:1758.3px;top:64.1px;line-height:14px;font-size:8.6px;color:#a0a0a0;font-weight:400;white-space:nowrap;">800</div>
<div style="left:1838.3px;top:64.1px;line-height:14px;font-size:8.6px;color:#a0a0a0;font-weight:400;white-space:nowrap;">1000</div>
<div style="left:1918.3px;top:64.1px;line-height:14px;font-size:8.6px;color:#a0a0a0;font-weight:400;white-space:nowrap;">1200</div>
<div style="left:1998.3px;top:64.1px;line-height:14px;font-size:8.6px;color:#a0a0a0;font-weight:400;white-space:nowrap;">1400</div>
<svg style="left:811px;top:65px;" width="14" height="645" viewBox="0 0 14 645"><line x1="2" y1="16.5" x2="11" y2="16.5" stroke="#2e2e2e" stroke-width="1"/><line x1="2" y1="24.5" x2="11" y2="24.5" stroke="#2e2e2e" stroke-width="1"/><line x1="2" y1="32.5" x2="11" y2="32.5" stroke="#2e2e2e" stroke-width="1"/><line x1="2" y1="40.5" x2="11" y2="40.5" stroke="#2e2e2e" stroke-width="1"/><line x1="2" y1="48.5" x2="11" y2="48.5" stroke="#2e2e2e" stroke-width="1"/><line x1="2" y1="56.5" x2="11" y2="56.5" stroke="#2e2e2e" stroke-width="1"/><line x1="2" y1="64.5" x2="11" y2="64.5" stroke="#2e2e2e" stroke-width="1"/><line x1="2" y1="72.5" x2="11" y2="72.5" stroke="#2e2e2e" stroke-width="1"/><line x1="2" y1="80.5" x2="11" y2="80.5" stroke="#2e2e2e" stroke-width="1"/><line x1="2" y1="88.5" x2="11" y2="88.5" stroke="#484848" stroke-width="1"/><line x1="2" y1="96.5" x2="11" y2="96.5" stroke="#2e2e2e" stroke-width="1"/><line x1="2" y1="104.5" x2="11" y2="104.5" stroke="#2e2e2e" stroke-width="1"/><line x1="2" y1="112.5" x2="11" y2="112.5" stroke="#2e2e2e" stroke-width="1"/><line x1="2" y1="120.5" x2="11" y2="120.5" stroke="#2e2e2e" stroke-width="1"/><line x1="2" y1="128.5" x2="11" y2="128.5" stroke="#2e2e2e" stroke-width="1"/><line x1="2" y1="136.5" x2="11" y2="136.5" stroke="#2e2e2e" stroke-width="1"/><line x1="2" y1="144.5" x2="11" y2="144.5" stroke="#2e2e2e" stroke-width="1"/><line x1="2" y1="152.5" x2="11" y2="152.5" stroke="#2e2e2e" stroke-width="1"/><line x1="2" y1="160.5" x2="11" y2="160.5" stroke="#2e2e2e" stroke-width="1"/><line x1="2" y1="168.5" x2="11" y2="168.5" stroke="#484848" stroke-width="1"/><line x1="2" y1="176.5" x2="11" y2="176.5" stroke="#2e2e2e" stroke-width="1"/><line x1="2" y1="184.5" x2="11" y2="184.5" stroke="#2e2e2e" stroke-width="1"/><line x1="2" y1="192.5" x2="11" y2="192.5" stroke="#2e2e2e" stroke-width="1"/><line x1="2" y1="200.5" x2="11" y2="200.5" stroke="#2e2e2e" stroke-width="1"/><line x1="2" y1="208.5" x2="11" y2="208.5" stroke="#2e2e2e" stroke-width="1"/><line x1="2" y1="216.5" x2="11" y2="216.5" stroke="#2e2e2e" stroke-width="1"/><line x1="2" y1="224.5" x2="11" y2="224.5" stroke="#2e2e2e" stroke-width="1"/><line x1="2" y1="232.5" x2="11" y2="232.5" stroke="#2e2e2e" stroke-width="1"/><line x1="2" y1="240.5" x2="11" y2="240.5" stroke="#2e2e2e" stroke-width="1"/><line x1="2" y1="248.5" x2="11" y2="248.5" stroke="#484848" stroke-width="1"/><line x1="2" y1="256.5" x2="11" y2="256.5" stroke="#2e2e2e" stroke-width="1"/><line x1="2" y1="264.5" x2="11" y2="264.5" stroke="#2e2e2e" stroke-width="1"/><line x1="2" y1="272.5" x2="11" y2="272.5" stroke="#2e2e2e" stroke-width="1"/><line x1="2" y1="280.5" x2="11" y2="280.5" stroke="#2e2e2e" stroke-width="1"/><line x1="2" y1="288.5" x2="11" y2="288.5" stroke="#2e2e2e" stroke-width="1"/><line x1="2" y1="296.5" x2="11" y2="296.5" stroke="#2e2e2e" stroke-width="1"/><line x1="2" y1="304.5" x2="11" y2="304.5" stroke="#2e2e2e" stroke-width="1"/><line x1="2" y1="312.5" x2="11" y2="312.5" stroke="#2e2e2e" stroke-width="1"/><line x1="2" y1="320.5" x2="11" y2="320.5" stroke="#2e2e2e" stroke-width="1"/><line x1="2" y1="328.5" x2="11" y2="328.5" stroke="#484848" stroke-width="1"/><line x1="2" y1="336.5" x2="11" y2="336.5" stroke="#2e2e2e" stroke-width="1"/><line x1="2" y1="344.5" x2="11" y2="344.5" stroke="#2e2e2e" stroke-width="1"/><line x1="2" y1="352.5" x2="11" y2="352.5" stroke="#2e2e2e" stroke-width="1"/><line x1="2" y1="360.5" x2="11" y2="360.5" stroke="#2e2e2e" stroke-width="1"/><line x1="2" y1="368.5" x2="11" y2="368.5" stroke="#2e2e2e" stroke-width="1"/><line x1="2" y1="376.5" x2="11" y2="376.5" stroke="#2e2e2e" stroke-width="1"/><line x1="2" y1="384.5" x2="11" y2="384.5" stroke="#2e2e2e" stroke-width="1"/><line x1="2" y1="392.5" x2="11" y2="392.5" stroke="#2e2e2e" stroke-width="1"/><line x1="2" y1="400.5" x2="11" y2="400.5" stroke="#2e2e2e" stroke-width="1"/><line x1="2" y1="408.5" x2="11" y2="408.5" stroke="#484848" stroke-width="1"/><line x1="2" y1="416.5" x2="11" y2="416.5" stroke="#2e2e2e" stroke-width="1"/><line x1="2" y1="424.5" x2="11" y2="424.5" stroke="#2e2e2e" stroke-width="1"/><line x1="2" y1="432.5" x2="11" y2="432.5" stroke="#2e2e2e" stroke-width="1"/><line x1="2" y1="440.5" x2="11" y2="440.5" stroke="#2e2e2e" stroke-width="1"/><line x1="2" y1="448.5" x2="11" y2="448.5" stroke="#2e2e2e" stroke-width="1"/><line x1="2" y1="456.5" x2="11" y2="456.5" stroke="#2e2e2e" stroke-width="1"/><line x1="2" y1="464.5" x2="11" y2="464.5" stroke="#2e2e2e" stroke-width="1"/><line x1="2" y1="472.5" x2="11" y2="472.5" stroke="#2e2e2e" stroke-width="1"/><line x1="2" y1="480.5" x2="11" y2="480.5" stroke="#2e2e2e" stroke-width="1"/><line x1="2" y1="488.5" x2="11" y2="488.5" stroke="#484848" stroke-width="1"/><line x1="2" y1="496.5" x2="11" y2="496.5" stroke="#2e2e2e" stroke-width="1"/><line x1="2" y1="504.5" x2="11" y2="504.5" stroke="#2e2e2e" stroke-width="1"/><line x1="2" y1="512.5" x2="11" y2="512.5" stroke="#2e2e2e" stroke-width="1"/><line x1="2" y1="520.5" x2="11" y2="520.5" stroke="#2e2e2e" stroke-width="1"/><line x1="2" y1="528.5" x2="11" y2="528.5" stroke="#2e2e2e" stroke-width="1"/><line x1="2" y1="536.5" x2="11" y2="536.5" stroke="#2e2e2e" stroke-width="1"/><line x1="2" y1="544.5" x2="11" y2="544.5" stroke="#2e2e2e" stroke-width="1"/><line x1="2" y1="552.5" x2="11" y2="552.5" stroke="#2e2e2e" stroke-width="1"/><line x1="2" y1="560.5" x2="11" y2="560.5" stroke="#2e2e2e" stroke-width="1"/><line x1="2" y1="568.5" x2="11" y2="568.5" stroke="#484848" stroke-width="1"/><line x1="2" y1="576.5" x2="11" y2="576.5" stroke="#2e2e2e" stroke-width="1"/><line x1="2" y1="584.5" x2="11" y2="584.5" stroke="#2e2e2e" stroke-width="1"/><line x1="2" y1="592.5" x2="11" y2="592.5" stroke="#2e2e2e" stroke-width="1"/><line x1="2" y1="600.5" x2="11" y2="600.5" stroke="#2e2e2e" stroke-width="1"/><line x1="2" y1="608.5" x2="11" y2="608.5" stroke="#2e2e2e" stroke-width="1"/><line x1="2" y1="616.5" x2="11" y2="616.5" stroke="#2e2e2e" stroke-width="1"/><line x1="2" y1="624.5" x2="11" y2="624.5" stroke="#2e2e2e" stroke-width="1"/><line x1="2" y1="632.5" x2="11" y2="632.5" stroke="#2e2e2e" stroke-width="1"/></svg>
<div style="left:815px;top:154.9px;width:5.4px;height:6.8px;background:#1f1f1f;"></div>
<div style="left:667.6px;width:300px;text-align:center;top:154.0px;line-height:9px;font-size:8.4px;color:#a4a4a4;font-weight:400;white-space:nowrap;">6</div>
<div style="left:815px;top:162.70000000000002px;width:5.4px;height:6.8px;background:#1f1f1f;"></div>
<div style="left:667.6px;width:300px;text-align:center;top:161.8px;line-height:9px;font-size:8.4px;color:#a4a4a4;font-weight:400;white-space:nowrap;">0</div>
<div style="left:815px;top:170.5px;width:5.4px;height:6.8px;background:#1f1f1f;"></div>
<div style="left:667.6px;width:300px;text-align:center;top:169.6px;line-height:9px;font-size:8.4px;color:#a4a4a4;font-weight:400;white-space:nowrap;">0</div>
<div style="left:815px;top:234.9px;width:5.4px;height:6.8px;background:#1f1f1f;"></div>
<div style="left:667.6px;width:300px;text-align:center;top:234.0px;line-height:9px;font-size:8.4px;color:#a4a4a4;font-weight:400;white-space:nowrap;">4</div>
<div style="left:815px;top:242.70000000000002px;width:5.4px;height:6.8px;background:#1f1f1f;"></div>
<div style="left:667.6px;width:300px;text-align:center;top:241.8px;line-height:9px;font-size:8.4px;color:#a4a4a4;font-weight:400;white-space:nowrap;">0</div>
<div style="left:815px;top:250.5px;width:5.4px;height:6.8px;background:#1f1f1f;"></div>
<div style="left:667.6px;width:300px;text-align:center;top:249.6px;line-height:9px;font-size:8.4px;color:#a4a4a4;font-weight:400;white-space:nowrap;">0</div>
<div style="left:815px;top:314.90000000000003px;width:5.4px;height:6.8px;background:#1f1f1f;"></div>
<div style="left:667.6px;width:300px;text-align:center;top:314.0px;line-height:9px;font-size:8.4px;color:#a4a4a4;font-weight:400;white-space:nowrap;">2</div>
<div style="left:815px;top:322.70000000000005px;width:5.4px;height:6.8px;background:#1f1f1f;"></div>
<div style="left:667.6px;width:300px;text-align:center;top:321.8px;line-height:9px;font-size:8.4px;color:#a4a4a4;font-weight:400;white-space:nowrap;">0</div>
<div style="left:815px;top:330.50000000000006px;width:5.4px;height:6.8px;background:#1f1f1f;"></div>
<div style="left:667.6px;width:300px;text-align:center;top:329.6px;line-height:9px;font-size:8.4px;color:#a4a4a4;font-weight:400;white-space:nowrap;">0</div>
<div style="left:815px;top:394.90000000000003px;width:5.4px;height:6.8px;background:#1f1f1f;"></div>
<div style="left:667.6px;width:300px;text-align:center;top:394.0px;line-height:9px;font-size:8.4px;color:#a4a4a4;font-weight:400;white-space:nowrap;">0</div>
<div style="left:815.7px;top:477.7px;width:3px;height:0.9px;background:#9a9a9a;"></div>
<div style="left:815px;top:482.70000000000005px;width:5.4px;height:6.8px;background:#1f1f1f;"></div>
<div style="left:667.6px;width:300px;text-align:center;top:481.8px;line-height:9px;font-size:8.4px;color:#a4a4a4;font-weight:400;white-space:nowrap;">2</div>
<div style="left:815px;top:490.50000000000006px;width:5.4px;height:6.8px;background:#1f1f1f;"></div>
<div style="left:667.6px;width:300px;text-align:center;top:489.6px;line-height:9px;font-size:8.4px;color:#a4a4a4;font-weight:400;white-space:nowrap;">0</div>
<div style="left:815px;top:498.30000000000007px;width:5.4px;height:6.8px;background:#1f1f1f;"></div>
<div style="left:667.6px;width:300px;text-align:center;top:497.40000000000003px;line-height:9px;font-size:8.4px;color:#a4a4a4;font-weight:400;white-space:nowrap;">0</div>
<div style="left:815.7px;top:557.7px;width:3px;height:0.9px;background:#9a9a9a;"></div>
<div style="left:815px;top:562.6999999999999px;width:5.4px;height:6.8px;background:#1f1f1f;"></div>
<div style="left:667.6px;width:300px;text-align:center;top:561.8px;line-height:9px;font-size:8.4px;color:#a4a4a4;font-weight:400;white-space:nowrap;">4</div>
<div style="left:815px;top:570.4999999999999px;width:5.4px;height:6.8px;background:#1f1f1f;"></div>
<div style="left:667.6px;width:300px;text-align:center;top:569.5999999999999px;line-height:9px;font-size:8.4px;color:#a4a4a4;font-weight:400;white-space:nowrap;">0</div>
<div style="left:815px;top:578.3px;width:5.4px;height:6.8px;background:#1f1f1f;"></div>
<div style="left:667.6px;width:300px;text-align:center;top:577.4px;line-height:9px;font-size:8.4px;color:#a4a4a4;font-weight:400;white-space:nowrap;">0</div>
<div style="left:815.7px;top:637.7px;width:3px;height:0.9px;background:#9a9a9a;"></div>
<div style="left:815px;top:642.6999999999999px;width:5.4px;height:6.8px;background:#1f1f1f;"></div>
<div style="left:667.6px;width:300px;text-align:center;top:641.8px;line-height:9px;font-size:8.4px;color:#a4a4a4;font-weight:400;white-space:nowrap;">6</div>
<div style="left:815px;top:650.4999999999999px;width:5.4px;height:6.8px;background:#1f1f1f;"></div>
<div style="left:667.6px;width:300px;text-align:center;top:649.5999999999999px;line-height:9px;font-size:8.4px;color:#a4a4a4;font-weight:400;white-space:nowrap;">0</div>
<div style="left:815px;top:658.3px;width:5.4px;height:6.8px;background:#1f1f1f;"></div>
<div style="left:667.6px;width:300px;text-align:center;top:657.4px;line-height:9px;font-size:8.4px;color:#a4a4a4;font-weight:400;white-space:nowrap;">0</div>
<div style="left:1052px;top:177.6px;width:768px;height:431.7px;background:#9a9a9a;"></div>
<svg style="left:1052px;top:177.6px;" width="768" height="432" viewBox="0 0 768 432"><g stroke="#7b7b7b" stroke-width="8.8" stroke-linecap="round" stroke-linejoin="round" fill="none"><line x1="128.5999999999999" y1="28.599999999999994" x2="128.5999999999999" y2="117.20000000000002" /><polyline points="96.09999999999991,84.70000000000002 128.5999999999999,116.70000000000002 161.0999999999999,84.70000000000002"/><line x1="128.5999999999999" y1="173.6" x2="128.5999999999999" y2="260.9" /><polyline points="96.09999999999991,228.39999999999998 128.5999999999999,260.4 161.0999999999999,228.39999999999998"/><line x1="128.5999999999999" y1="316.6" x2="128.5999999999999" y2="404.69999999999993" /><polyline points="96.09999999999991,372.19999999999993 128.5999999999999,404.19999999999993 161.0999999999999,372.19999999999993"/><line x1="384.20000000000005" y1="28.599999999999994" x2="384.20000000000005" y2="117.20000000000002" /><polyline points="351.70000000000005,84.70000000000002 384.20000000000005,116.70000000000002 416.70000000000005,84.70000000000002"/><line x1="384.20000000000005" y1="173.6" x2="384.20000000000005" y2="260.9" /><polyline points="351.70000000000005,228.39999999999998 384.20000000000005,260.4 416.70000000000005,228.39999999999998"/><line x1="384.20000000000005" y1="316.6" x2="384.20000000000005" y2="404.69999999999993" /><polyline points="351.70000000000005,372.19999999999993 384.20000000000005,404.19999999999993 416.70000000000005,372.19999999999993"/><line x1="639.8" y1="28.599999999999994" x2="639.8" y2="117.20000000000002" /><polyline points="607.3,84.70000000000002 639.8,116.70000000000002 672.3,84.70000000000002"/><line x1="639.8" y1="173.6" x2="639.8" y2="260.9" /><polyline points="607.3,228.39999999999998 639.8,260.4 672.3,228.39999999999998"/><line x1="639.8" y1="316.6" x2="639.8" y2="404.69999999999993" /><polyline points="607.3,372.19999999999993 639.8,404.19999999999993 672.3,372.19999999999993"/></g></svg>
<svg style="left:1300px;top:312px;" width="272" height="162" viewBox="0 0 272 162"><rect x="8.400000000000091" y="8.600000000000023" width="256.0" height="144.79999999999995" fill="none" stroke="#e2e2e2" stroke-width="1"/><line x1="136.20000000000005" y1="80.89999999999998" x2="168.20000000000005" y2="80.89999999999998" stroke="#e6e6e6" stroke-width="1.2"/><circle cx="8.400000000000091" cy="8.600000000000023" r="3.3" fill="#4c4cf2" stroke="#2a2a40" stroke-width="0.7"/><circle cx="8.400000000000091" cy="80.89999999999998" r="3.3" fill="#4c4cf2" stroke="#2a2a40" stroke-width="0.7"/><circle cx="8.400000000000091" cy="153.39999999999998" r="3.3" fill="#4c4cf2" stroke="#2a2a40" stroke-width="0.7"/><circle cx="136.20000000000005" cy="8.600000000000023" r="3.3" fill="#4c4cf2" stroke="#2a2a40" stroke-width="0.7"/><circle cx="136.20000000000005" cy="153.39999999999998" r="3.3" fill="#4c4cf2" stroke="#2a2a40" stroke-width="0.7"/><circle cx="264.4000000000001" cy="8.600000000000023" r="3.3" fill="#4c4cf2" stroke="#2a2a40" stroke-width="0.7"/><circle cx="264.4000000000001" cy="80.89999999999998" r="3.3" fill="#4c4cf2" stroke="#2a2a40" stroke-width="0.7"/><circle cx="264.4000000000001" cy="153.39999999999998" r="3.3" fill="#4c4cf2" stroke="#2a2a40" stroke-width="0.7"/><circle cx="168.20000000000005" cy="80.89999999999998" r="3.9" fill="#e8e8e8" stroke="#444" stroke-width="0.6"/><circle cx="168.20000000000005" cy="80.89999999999998" r="2" fill="#4c4cf2"/><circle cx="136.20000000000005" cy="80.89999999999998" r="5" fill="none" stroke="#1a1a1a" stroke-width="1.3"/><circle cx="136.20000000000005" cy="80.89999999999998" r="3.6" fill="#bbb" stroke="#eee" stroke-width="0.6"/><circle cx="136.20000000000005" cy="80.89999999999998" r="2.3" fill="#1a1a1a"/><path d="M136.20000000000005,78.89999999999998 V82.89999999999998 M134.20000000000005,80.89999999999998 H138.20000000000005" stroke="#aaa" stroke-width="0.6"/></svg>
<div style="left:427px;top:742px;width:383px;height:1px;background:#111;"></div>
<div style="left:427px;top:743px;width:383px;height:17px;background:#1e1e1e;"></div>
<svg style="left:434.6px;top:745.6px;" width="12" height="12" viewBox="0 0 12 12"><circle cx="4.6" cy="4.6" r="3.7" fill="none" stroke="#b8b8b8" stroke-width="1.1"/><line x1="7.6" y1="7.6" x2="11" y2="11" stroke="#b8b8b8" stroke-width="1.2"/></svg>
<svg style="left:460.4px;top:744.8px;" width="13" height="12" viewBox="0 0 13 12"><rect x="0.6" y="0.6" width="11.8" height="10.6" rx="1" fill="none" stroke="#9a9a9a" stroke-width="1.1"/><rect x="0.6" y="0.4" width="11.8" height="1.8" fill="#777"/><path d="M0.6,3.8 H8.6 A0.8,0.8 0 0 1 9.4,4.6 V11.2" fill="none" stroke="#9a9a9a" stroke-width="1.1"/></svg>
<svg style="left:736.8px;top:745.5px;" width="12.2" height="10" viewBox="0 0 12.2 10"><rect x="0" y="0" width="12.2" height="10" rx="1.3" fill="#5c5ce8"/><rect x="3.2499999999999996" y="1.15" width="1.7" height="1.7" fill="#1e1e1e"/><rect x="7.25" y="1.15" width="1.7" height="1.7" fill="#1e1e1e"/><rect x="1.25" y="3.15" width="1.7" height="1.7" fill="#1e1e1e"/><rect x="5.25" y="3.15" width="1.7" height="1.7" fill="#1e1e1e"/><rect x="9.25" y="3.15" width="1.7" height="1.7" fill="#1e1e1e"/><rect x="3.2499999999999996" y="5.15" width="1.7" height="1.7" fill="#1e1e1e"/><rect x="7.25" y="5.15" width="1.7" height="1.7" fill="#1e1e1e"/><rect x="1.25" y="7.15" width="1.7" height="1.7" fill="#1e1e1e"/><rect x="5.25" y="7.15" width="1.7" height="1.7" fill="#1e1e1e"/><rect x="9.25" y="7.15" width="1.7" height="1.7" fill="#1e1e1e"/></svg>
<svg style="left:763.6px;top:745.2px;" width="11" height="11" viewBox="0 0 11 11"><circle cx="5.5" cy="5.5" r="4.1" fill="none" stroke="#5c5ce8" stroke-width="1.5"/><circle cx="10.55" cy="5.5" r="0.6" fill="#5c5ce8"/><circle cx="9.873428289111416" cy="8.024999999999999" r="0.6" fill="#5c5ce8"/><circle cx="8.025" cy="9.873428289111414" r="0.6" fill="#5c5ce8"/><circle cx="5.5" cy="10.55" r="0.6" fill="#5c5ce8"/><circle cx="2.9750000000000014" cy="9.873428289111416" r="0.6" fill="#5c5ce8"/><circle cx="1.1265717108885847" cy="8.024999999999999" r="0.6" fill="#5c5ce8"/><circle cx="0.4500000000000002" cy="5.500000000000001" r="0.6" fill="#5c5ce8"/><circle cx="1.1265717108885838" cy="2.9750000000000014" r="0.6" fill="#5c5ce8"/><circle cx="2.974999999999998" cy="1.1265717108885864" r="0.6" fill="#5c5ce8"/><circle cx="5.499999999999999" cy="0.4500000000000002" r="0.6" fill="#5c5ce8"/><circle cx="8.025" cy="1.1265717108885855" r="0.6" fill="#5c5ce8"/><circle cx="9.873428289111413" cy="2.974999999999998" r="0.6" fill="#5c5ce8"/></svg>
<svg style="left:789.6px;top:745.3px;" width="13" height="11" viewBox="0 0 13 11"><rect x="3.2" y="0.5" width="9.4" height="6.6" rx="1.2" fill="#5c5ce8"/><rect x="0.7" y="3.4" width="9.4" height="6.8" rx="1.2" fill="#1e1e1e" stroke="#5c5ce8" stroke-width="1.2"/><rect x="2.3" y="5" width="6.2" height="1.7" fill="#5c5ce8"/></svg>
<div style="left:811px;top:710px;width:1237px;height:1px;background:#131313;"></div>
<div style="left:811px;top:711px;width:1237px;height:12px;background:#1e1e1e;"></div>
<div style="left:811px;top:723px;width:1237px;height:1px;background:#151515;"></div>
<div style="left:811px;top:724px;width:1237px;height:12px;background:#1e1e1e;"></div>
<div style="left:834px;top:724px;width:23.5px;height:12px;background:#161616;"></div>
<div style="left:857.5px;top:724px;width:1167.5px;height:12px;background:#223252;"></div>
<div style="left:862px;top:723.4px;line-height:14px;font-size:8.8px;color:#7d8db5;font-weight:400;white-space:nowrap;">5</div>
<div style="left:811px;top:736px;width:1237px;height:1px;background:#131313;"></div>
<div style="left:811px;top:737px;width:1237px;height:23px;background:#1e1e1e;"></div>
<div style="left:811px;top:760px;width:1237px;height:1px;background:#111;"></div>
<svg style="left:828px;top:711px;" width="8" height="13" viewBox="0 0 8 13"><polygon points="0.8,1.8 5.2,5.9 0.8,10" fill="#aaa"/><rect x="5.3" y="0.3" width="1.5" height="11.7" fill="#aaa"/></svg>
<svg style="left:854px;top:711px;" width="7" height="13" viewBox="0 0 7 13"><path d="M0.9,0.7 H5.9 V4.4 L3.4,6 L0.9,4.4 Z" fill="none" stroke="#bbb" stroke-width="1"/><line x1="3.4" y1="6" x2="3.4" y2="12" stroke="#bbb" stroke-width="1.1"/></svg>
<svg style="left:2023.6px;top:711px;" width="8" height="13" viewBox="0 0 8 13"><polygon points="6.8,1.8 2.4,5.9 6.8,10" fill="#aaa"/><rect x="0.8" y="0.3" width="1.5" height="11.7" fill="#aaa"/></svg>
<svg style="left:828px;top:742.5px;" width="8" height="13" viewBox="0 0 8 13"><path d="M0.6,0.6 L7.2,6.6 L4.2,7 L6,11.6 L4.8,12.2 L3,7.6 L0.6,9.8 Z" fill="#6060ee"/></svg>
<svg style="left:844.8px;top:746.6px;" width="6.6" height="5" viewBox="0 0 6.6 5"><polyline points="0.6,0.8 3.3,4 6.0,0.8" fill="none" stroke="#6060ee" stroke-width="1.1"/></svg>
<svg style="left:866.4px;top:742px;" width="14" height="14" viewBox="0 0 14 14"><g fill="none" stroke="#d0d0d0" stroke-width="0.9"><ellipse cx="7" cy="7" rx="6" ry="3" transform="rotate(45 7 7)"/><ellipse cx="7" cy="7" rx="6" ry="3" transform="rotate(-45 7 7)"/><rect x="4.9" y="4.9" width="4.2" height="4.2" fill="#1e1e1e" stroke="none"/><rect x="5" y="5" width="4" height="4"/></g></svg>
<svg style="left:899.5px;top:742.2px;" width="12" height="13" viewBox="0 0 12 13"><path d="M2.2,6.5 V3 a0.8,0.8 0 0 1 1.6,0 V6 V1.6 a0.8,0.8 0 0 1 1.6,0 V6 V1.2 a0.8,0.8 0 0 1 1.6,0 V6 V2 a0.8,0.8 0 0 1 1.6,0 V7.5 L9.6,5.6 a0.9,0.9 0 0 1 1.5,1 L8.6,10.6 Q7.6,12.4 5.6,12.4 H4.6 Q2.2,12.4 2.2,9.6 Z" fill="#dcdcdc"/></svg>
<svg style="left:917.8px;top:746.6px;" width="6.6" height="5" viewBox="0 0 6.6 5"><polyline points="0.6,0.8 3.3,4 6.0,0.8" fill="none" stroke="#d0d0d0" stroke-width="1.1"/></svg>
<svg style="left:1345px;top:743.3px;" width="13" height="10" viewBox="0 0 13 10"><rect x="0.5" y="0.5" width="12" height="9" rx="1.8" fill="#8a8a8a"/><rect x="2.2" y="2.2" width="8.6" height="5.6" fill="#e2e2e2"/></svg>
<svg style="left:1364px;top:746.2px;" width="6.6" height="5" viewBox="0 0 6.6 5"><polyline points="0.6,0.8 3.3,4 6.0,0.8" fill="none" stroke="#c8c8c8" stroke-width="1.1"/></svg>
<svg style="left:1379.6px;top:741.6px;" width="17" height="13.5" viewBox="0 0 17 13.5"><path d="M1.2,11.6 Q3,4 10.3,1.2" fill="none" stroke="#c0c0c0" stroke-width="0.9"/><circle cx="1.3" cy="11.6" r="1" fill="#c0c0c0"/><circle cx="4.6" cy="4.8" r="0.9" fill="#c0c0c0"/><path d="M11,1 L13.6,6.6 L12.6,9.6 H9.4 L8.4,6.6 Z" fill="#d0d0d0"/><line x1="11" y1="4" x2="11" y2="7.6" stroke="#1e1e1e" stroke-width="0.8"/><rect x="8.4" y="11" width="5.2" height="1.5" fill="#d0d0d0"/></svg>
<svg style="left:1401px;top:746.2px;" width="6.6" height="5" viewBox="0 0 6.6 5"><polyline points="0.6,0.8 3.3,4 6.0,0.8" fill="none" stroke="#c8c8c8" stroke-width="1.1"/></svg>
<svg style="left:1422.6px;top:741.6px;" width="13.5" height="13.5" viewBox="0 0 13.5 13.5"><line x1="12.4" y1="1" x2="4.5" y2="9" stroke="#d0d0d0" stroke-width="1.1"/><path d="M4.8,7.6 L6,8.8 Q4.4,12.6 0.8,12.6 Q1.2,9.2 4.8,7.6 Z" fill="#d0d0d0"/></svg>
<div style="left:1455px;top:740.6px;width:14px;line-height:15px;font-size:14.5px;font-weight:700;color:#d2d2d2;font-family:'Liberation Serif',serif;text-align:center;">T</div>
<svg style="left:1474.4px;top:746.2px;" width="6.6" height="5" viewBox="0 0 6.6 5"><polyline points="0.6,0.8 3.3,4 6.0,0.8" fill="none" stroke="#c8c8c8" stroke-width="1.1"/></svg>
<svg style="left:1491.4px;top:743.2px;" width="15" height="10.8" viewBox="0 0 15 10.8"><rect x="0.3" y="0.3" width="14.4" height="10.2" fill="#8a8a8a"/><rect x="2.8" y="2.8" width="9.4" height="5.2" fill="#1e1e1e" stroke="#d6d6d6" stroke-width="1.2"/></svg>
<svg style="left:1511.2px;top:746.2px;" width="6.6" height="5" viewBox="0 0 6.6 5"><polyline points="0.6,0.8 3.3,4 6.0,0.8" fill="none" stroke="#c8c8c8" stroke-width="1.1"/></svg>
<svg style="left:2021.5px;top:742.4px;" width="13" height="12.5" viewBox="0 0 13 12.5"><g stroke="#d8d8d8" stroke-width="1.1" fill="none"><line x1="1" y1="1" x2="12" y2="11.5"/><polyline points="1,4.6 1,1 4.6,1"/><polyline points="8.4,11.5 12,11.5 12,7.9"/></g></svg>
<div style="left:427px;top:760px;width:1621px;height:1px;background:#111;"></div>
<div style="left:427px;top:761px;width:1621px;height:24px;background:#333333;"></div>
<div style="left:427px;top:785px;width:1621px;height:1px;background:#111;"></div>
<svg style="left:440.8px;top:767.4px;" width="16" height="12" viewBox="0 0 16 12"><path d="M2,4.6 H3.8 L6.4,2.4 V9.6 L3.8,7.4 H2 Z" fill="#a8a8a8"/><path d="M8.6,3.8 Q9.8,6 8.6,8.2 M10.4,2.4 Q12.4,6 10.4,9.6 M12.2,0.8 Q15,6 12.2,11.2" fill="none" stroke="#a0a0a0" stroke-width="0.8"/><line x1="0.6" y1="0.8" x2="14.6" y2="10.8" stroke="#333" stroke-width="1.8"/><line x1="0.6" y1="0.6" x2="14.6" y2="10.6" stroke="#a8a8a8" stroke-width="0.8"/></svg>
<svg style="left:472.6px;top:767px;" width="15" height="12" viewBox="0 0 15 12"><g fill="none" stroke="#5c5ce8" stroke-width="1.1"><path d="M7.8,2.2 H10.2 A3.6,3.6 0 0 1 10.2,9.4 H8.6"/><path d="M6.4,9.4 H4.4 A3.6,3.6 0 0 1 4.4,2.2 H5.4"/></g><polygon points="5.6,0 8.6,2.2 5.6,4.4" fill="#5c5ce8"/><polygon points="9,7.2 6,9.4 9,11.6" fill="#5c5ce8"/></svg>
<svg style="left:505.5px;top:766.6px;" width="16" height="13" viewBox="0 0 16 13"><circle cx="6.2" cy="6.4" r="5.6" fill="none" stroke="#d03a2e" stroke-width="1.1"/><rect x="9.6" y="6.8" width="4" height="4" transform="rotate(45 11.6 8.8)" fill="#333" stroke="#d03a2e" stroke-width="1.2"/></svg>
<svg style="left:1138.6px;top:768.8px;" width="8" height="8" viewBox="0 0 8 8"><rect x="0.2" y="0" width="1.6" height="8" fill="#aaa"/><polygon points="7.4,0 2,4 7.4,8" fill="#aaa"/></svg>
<svg style="left:1165px;top:768.6px;" width="8" height="8.6" viewBox="0 0 8 8.6"><polygon points="0.4,0 7.6,4.3 0.4,8.6" fill="#bcbcbc"/></svg>
<div style="left:1212.2px;top:762.6px;line-height:20px;font-size:17.6px;color:#505050;white-space:nowrap;letter-spacing:0.8px;">00000<span style="color:#a4a4a4">7</span></div>
<svg style="left:1312.6px;top:771.3px;" width="7" height="5" viewBox="0 0 7 5"><polyline points="0.6,0.8 3.5,4 6.4,0.8" fill="none" stroke="#c8c8c8" stroke-width="1.1"/></svg>
<svg style="left:1338.6px;top:766.4px;" width="14.5" height="13.5" viewBox="0 0 14.5 13.5"><circle cx="6.2" cy="7.2" r="5.6" fill="none" stroke="#666" stroke-width="1"/><polyline points="6.2,3.2 6,7.4 8.6,4.8" fill="none" stroke="#5c5ce8" stroke-width="1.2"/><circle cx="12.4" cy="1.6" r="0.9" fill="#5c5ce8"/></svg>
<svg style="left:1959.4px;top:767.6px;" width="11.8" height="10.6" viewBox="0 0 11.8 10.6"><rect x="0" y="0" width="11.8" height="10.6" fill="#5c5ce8"/><rect x="2.4" y="1.2" width="7" height="3.6" fill="#333"/><rect x="2.4" y="5.9" width="7" height="3.6" fill="#333"/></svg>
<svg style="left:1988.8px;top:767.4px;" width="12" height="11" viewBox="0 0 12 11"><path d="M0.6,3.6 H2.8 L5.6,1 V10 L2.8,7.4 H0.6 Z" fill="none" stroke="#c0c0c0" stroke-width="0.9"/><path d="M7.2,3.2 Q8.6,5.5 7.2,7.8 M9,1.6 Q11.4,5.5 9,9.4" fill="none" stroke="#c0c0c0" stroke-width="0.9"/></svg>
<svg style="left:2013px;top:767.6px;" width="21" height="10.6" viewBox="0 0 21 10.6"><g fill="none" stroke-width="1"><rect x="2.2" y="2.2" width="6" height="6" transform="rotate(45 5.3 5.3)" stroke="#45458a"/><rect x="7.4" y="2.2" width="6" height="6" transform="rotate(45 10.4 5.3)" stroke="#4c4c9a"/><rect x="12.6" y="2.2" width="6" height="6" transform="rotate(45 15.6 5.3)" stroke="#5858b8"/></g></svg>
<div style="left:427px;top:786px;width:1621px;height:16.5px;background:#1e1e1e;"></div>
<div style="left:427px;top:802.5px;width:1621px;height:1px;background:#121212;"></div>
<div style="left:433px;top:788.1px;line-height:14px;font-size:9.9px;color:#b4b4b4;font-weight:400;white-space:nowrap;-webkit-text-stroke:0.1px #b4b4b4">Timeline</div>
<div style="left:713.4px;top:786px;width:1px;height:17px;background:#111;"></div>
<svg style="left:640.9px;top:787.8px;" width="12.2" height="10" viewBox="0 0 12.2 10"><rect x="0" y="0" width="12.2" height="10" rx="1.3" fill="#5c5ce8"/><rect x="3.2499999999999996" y="1.15" width="1.7" height="1.7" fill="#1e1e1e"/><rect x="7.25" y="1.15" width="1.7" height="1.7" fill="#1e1e1e"/><rect x="1.25" y="3.15" width="1.7" height="1.7" fill="#1e1e1e"/><rect x="5.25" y="3.15" width="1.7" height="1.7" fill="#1e1e1e"/><rect x="9.25" y="3.15" width="1.7" height="1.7" fill="#1e1e1e"/><rect x="3.2499999999999996" y="5.15" width="1.7" height="1.7" fill="#1e1e1e"/><rect x="7.25" y="5.15" width="1.7" height="1.7" fill="#1e1e1e"/><rect x="1.25" y="7.15" width="1.7" height="1.7" fill="#1e1e1e"/><rect x="5.25" y="7.15" width="1.7" height="1.7" fill="#1e1e1e"/><rect x="9.25" y="7.15" width="1.7" height="1.7" fill="#1e1e1e"/></svg>
<svg style="left:667.6px;top:787.6px;" width="11" height="11" viewBox="0 0 11 11"><circle cx="5.5" cy="5.5" r="4.1" fill="none" stroke="#5c5ce8" stroke-width="1.5"/><circle cx="10.55" cy="5.5" r="0.6" fill="#5c5ce8"/><circle cx="9.873428289111416" cy="8.024999999999999" r="0.6" fill="#5c5ce8"/><circle cx="8.025" cy="9.873428289111414" r="0.6" fill="#5c5ce8"/><circle cx="5.5" cy="10.55" r="0.6" fill="#5c5ce8"/><circle cx="2.9750000000000014" cy="9.873428289111416" r="0.6" fill="#5c5ce8"/><circle cx="1.1265717108885847" cy="8.024999999999999" r="0.6" fill="#5c5ce8"/><circle cx="0.4500000000000002" cy="5.500000000000001" r="0.6" fill="#5c5ce8"/><circle cx="1.1265717108885838" cy="2.9750000000000014" r="0.6" fill="#5c5ce8"/><circle cx="2.974999999999998" cy="1.1265717108885864" r="0.6" fill="#5c5ce8"/><circle cx="5.499999999999999" cy="0.4500000000000002" r="0.6" fill="#5c5ce8"/><circle cx="8.025" cy="1.1265717108885855" r="0.6" fill="#5c5ce8"/><circle cx="9.873428289111413" cy="2.974999999999998" r="0.6" fill="#5c5ce8"/></svg>
<svg style="left:693.6px;top:787.6px;" width="13" height="11" viewBox="0 0 13 11"><rect x="3.2" y="0.5" width="9.4" height="6.6" rx="1.2" fill="#5c5ce8"/><rect x="0.7" y="3.4" width="9.4" height="6.8" rx="1.2" fill="#1e1e1e" stroke="#5c5ce8" stroke-width="1.2"/><rect x="2.3" y="5" width="6.2" height="1.7" fill="#5c5ce8"/></svg>
<svg style="left:1969.8px;top:789.4px;" width="19" height="9" viewBox="0 0 19 9"><rect x="2.2" y="1.8" width="5" height="5" transform="rotate(45 4.7 4.3)" fill="none" stroke="#9a9a9a" stroke-width="0.8"/><line x1="7" y1="4.3" x2="12" y2="4.3" stroke="#777" stroke-width="0.8"/><rect x="11.6" y="1.3" width="6" height="6" transform="rotate(45 14.6 4.3)" fill="#dcdcdc"/></svg>
<svg style="left:1999.8px;top:789px;" width="15" height="11" viewBox="0 0 15 11"><rect x="0.3" y="3" width="6.8" height="4.8" fill="#dcdcdc"/><rect x="7.8" y="3" width="6.8" height="4.8" fill="#dcdcdc"/><g fill="#aaa"><rect x="4.6" y="0" width="0.9" height="1.6"/><rect x="7" y="0" width="0.9" height="1.6"/><rect x="9.4" y="0" width="0.9" height="1.6"/><rect x="4.6" y="9.2" width="0.9" height="1.6"/><rect x="7" y="9.2" width="0.9" height="1.6"/><rect x="9.4" y="9.2" width="0.9" height="1.6"/></g></svg>
<svg style="left:2029.3px;top:789px;" width="11" height="11" viewBox="0 0 11 11"><circle cx="4.6" cy="4.4" r="3.9" fill="none" stroke="#c8c8c8" stroke-width="0.9"/><line x1="7.4" y1="7.2" x2="10.6" y2="10.4" stroke="#c8c8c8" stroke-width="1.2"/><polygon points="3.6,2.6 6.4,4.4 3.6,6.2" fill="#c8c8c8"/></svg>
<div style="left:713.4px;top:803.5px;width:1px;height:157.5px;background:#0f0f0f;"></div>
<div style="left:427px;top:803.5px;width:286.4px;height:17px;background:#1f1f1f;"></div>
<div style="left:427px;top:820.5px;width:286.4px;height:1px;background:#141414;"></div>
<div style="left:427px;top:843.2px;width:286.4px;height:1.2px;background:#151515;"></div>
<div style="left:427px;top:878.8px;width:286.4px;height:1.2px;background:#151515;"></div>
<div style="left:427px;top:901.3px;width:286.4px;height:1.2px;background:#151515;"></div>
<div style="left:427px;top:924.8px;width:286.4px;height:1.2px;background:#151515;"></div>
<div style="left:427px;top:947.8px;width:286.4px;height:1.2px;background:#151515;"></div>
<svg style="left:464.3px;top:827.3000000000001px;" width="9" height="11" viewBox="0 0 9 11"><path d="M0.5,0.5 H5.6 L8.5,3.4 V10.5 H0.5 Z" fill="#a0a0a0"/><path d="M5.6,0.5 V3.4 H8.5" fill="#707070"/></svg>
<div style="left:480px;top:825.1px;line-height:14px;font-size:10.2px;color:#cfcfcf;font-weight:400;white-space:nowrap;-webkit-text-stroke:0.15px #cfcfcf">Project</div>
<svg style="left:694.5px;top:827.1px;" width="11" height="10" viewBox="0 0 11 10"><path d="M1.3,5 V3.3 A2.3,2.3 0 0 1 5.9,3.3 V5" fill="none" stroke="#a8a8a8" stroke-width="1.1"/><rect x="3.8" y="4.3" width="6.9" height="4.9" rx="0.6" fill="#a8a8a8"/></svg>
<div style="left:430.3px;top:856.5px;width:9.2px;height:9.4px;background:#555;border-radius:1.8px;"></div>
<svg style="left:430.3px;top:856.5px;" width="10" height="10" viewBox="0 0 10 10"><polyline points="2.2,5 4,7 7.4,2.3" fill="none" stroke="#e6e6e6" stroke-width="1.25"/></svg>
<svg style="left:450.6px;top:857.9000000000001px;" width="8" height="7" viewBox="0 0 8 7"><polygon points="0.2,0.3 7.4,0.3 3.8,6.5" fill="#c8c8c8"/></svg>
<svg style="left:463px;top:855.8000000000001px;" width="12" height="11" viewBox="0 0 12 11"><rect x="3.2" y="3.6" width="8.2" height="7" fill="#6e6e6e"/><rect x="0.3" y="0.4" width="8.2" height="7" fill="#9c9c9c" stroke="#1f1f1f" stroke-width="0.6"/></svg>
<div style="left:480px;top:854.2px;line-height:14px;font-size:10.2px;color:#c8c8c8;font-weight:400;white-space:nowrap;text-decoration:underline;text-underline-offset:1px;text-decoration-color:#777">9</div>
<svg style="left:682.6px;top:856.2px;" width="10" height="10" viewBox="0 0 10 10"><rect x="0" y="0" width="7" height="1" fill="#777"/><rect x="0" y="1" width="2.4" height="9" fill="#8a8a8a"/><rect x="3.3" y="2.5" width="5.6" height="5" fill="#a8a8a8"/></svg>
<svg style="left:694.5px;top:856.2px;" width="11" height="10" viewBox="0 0 11 10"><path d="M1.3,5 V3.3 A2.3,2.3 0 0 1 5.9,3.3 V5" fill="none" stroke="#a8a8a8" stroke-width="1.1"/><rect x="3.8" y="4.3" width="6.9" height="4.9" rx="0.6" fill="#a8a8a8"/></svg>
<div style="left:430.3px;top:885.6999999999999px;width:9.2px;height:9.4px;background:#555;border-radius:1.8px;"></div>
<svg style="left:430.3px;top:885.6999999999999px;" width="10" height="10" viewBox="0 0 10 10"><polyline points="2.2,5 4,7 7.4,2.3" fill="none" stroke="#e6e6e6" stroke-width="1.25"/></svg>
<svg style="left:475.8px;top:884.8px;" width="13" height="12" viewBox="0 0 13 12"><rect x="0.4" y="0.5" width="9.5" height="8.5" fill="#7a7a7a"/><rect x="0.4" y="0.5" width="9.5" height="1.5" fill="#9a9a9a"/><rect x="5" y="4.6" width="7.4" height="6.9" rx="1.6" fill="#f2f2f2" stroke="#1f1f1f" stroke-width="0.5"/><g stroke="#1f1f1f" stroke-width="1.1" fill="none"><line x1="8.7" y1="5.8" x2="8.7" y2="10"/><polyline points="7,8.3 8.7,10 10.4,8.3"/></g></svg>
<div style="left:493px;top:883.4px;line-height:14px;font-size:10.2px;color:#c8c8c8;font-weight:400;white-space:nowrap;">9</div>
<svg style="left:694.5px;top:885.4px;" width="11" height="10" viewBox="0 0 11 10"><path d="M1.3,5 V3.3 A2.3,2.3 0 0 1 5.9,3.3 V5" fill="none" stroke="#a8a8a8" stroke-width="1.1"/><rect x="3.8" y="4.3" width="6.9" height="4.9" rx="0.6" fill="#a8a8a8"/></svg>
<div style="left:430.3px;top:908.8px;width:9.2px;height:9.4px;background:#555;border-radius:1.8px;"></div>
<svg style="left:430.3px;top:908.8px;" width="10" height="10" viewBox="0 0 10 10"><polyline points="2.2,5 4,7 7.4,2.3" fill="none" stroke="#e6e6e6" stroke-width="1.25"/></svg>
<svg style="left:475.8px;top:907.9px;" width="13" height="12" viewBox="0 0 13 12"><rect x="0.4" y="0.5" width="9.5" height="8.5" fill="#7a7a7a"/><rect x="0.4" y="0.5" width="9.5" height="1.5" fill="#9a9a9a"/><rect x="5" y="4.6" width="7.4" height="6.9" rx="1.6" fill="#f2f2f2" stroke="#1f1f1f" stroke-width="0.5"/><g stroke="#1f1f1f" stroke-width="1.1" fill="none"><line x1="8.7" y1="5.8" x2="8.7" y2="10"/><polyline points="7,8.3 8.7,10 10.4,8.3"/></g></svg>
<div style="left:493px;top:906.5px;line-height:14px;font-size:10.2px;color:#c8c8c8;font-weight:400;white-space:nowrap;">8</div>
<svg style="left:694.5px;top:908.5px;" width="11" height="10" viewBox="0 0 11 10"><path d="M1.3,5 V3.3 A2.3,2.3 0 0 1 5.9,3.3 V5" fill="none" stroke="#a8a8a8" stroke-width="1.1"/><rect x="3.8" y="4.3" width="6.9" height="4.9" rx="0.6" fill="#a8a8a8"/></svg>
<div style="left:430.3px;top:932.0px;width:9.2px;height:9.4px;background:#555;border-radius:1.8px;"></div>
<svg style="left:430.3px;top:932.0px;" width="10" height="10" viewBox="0 0 10 10"><polyline points="2.2,5 4,7 7.4,2.3" fill="none" stroke="#e6e6e6" stroke-width="1.25"/></svg>
<svg style="left:475.8px;top:931.1px;" width="13" height="12" viewBox="0 0 13 12"><rect x="0.4" y="0.5" width="9.5" height="8.5" fill="#7a7a7a"/><rect x="0.4" y="0.5" width="9.5" height="1.5" fill="#9a9a9a"/><rect x="5" y="4.6" width="7.4" height="6.9" rx="1.6" fill="#f2f2f2" stroke="#1f1f1f" stroke-width="0.5"/><g stroke="#1f1f1f" stroke-width="1.1" fill="none"><line x1="8.7" y1="5.8" x2="8.7" y2="10"/><polyline points="7,8.3 8.7,10 10.4,8.3"/></g></svg>
<div style="left:493px;top:929.7px;line-height:14px;font-size:10.2px;color:#c8c8c8;font-weight:400;white-space:nowrap;">7</div>
<svg style="left:694.5px;top:931.7px;" width="11" height="10" viewBox="0 0 11 10"><path d="M1.3,5 V3.3 A2.3,2.3 0 0 1 5.9,3.3 V5" fill="none" stroke="#a8a8a8" stroke-width="1.1"/><rect x="3.8" y="4.3" width="6.9" height="4.9" rx="0.6" fill="#a8a8a8"/></svg>
<div style="left:430.3px;top:956.8px;width:9.2px;height:9.4px;background:#555;border-radius:1.8px;"></div>
<svg style="left:430.3px;top:956.8px;" width="10" height="10" viewBox="0 0 10 10"><polyline points="2.2,5 4,7 7.4,2.3" fill="none" stroke="#e6e6e6" stroke-width="1.25"/></svg>
<svg style="left:475.8px;top:955.9px;" width="13" height="12" viewBox="0 0 13 12"><rect x="0.4" y="0.5" width="9.5" height="8.5" fill="#7a7a7a"/><rect x="0.4" y="0.5" width="9.5" height="1.5" fill="#9a9a9a"/><rect x="5" y="4.6" width="7.4" height="6.9" rx="1.6" fill="#f2f2f2" stroke="#1f1f1f" stroke-width="0.5"/><g stroke="#1f1f1f" stroke-width="1.1" fill="none"><line x1="8.7" y1="5.8" x2="8.7" y2="10"/><polyline points="7,8.3 8.7,10 10.4,8.3"/></g></svg>
<div style="left:493px;top:954.5px;line-height:14px;font-size:10.2px;color:#c8c8c8;font-weight:400;white-space:nowrap;">6</div>
<svg style="left:694.5px;top:956.5px;" width="11" height="10" viewBox="0 0 11 10"><path d="M1.3,5 V3.3 A2.3,2.3 0 0 1 5.9,3.3 V5" fill="none" stroke="#a8a8a8" stroke-width="1.1"/><rect x="3.8" y="4.3" width="6.9" height="4.9" rx="0.6" fill="#a8a8a8"/></svg>
<div style="left:714.4px;top:803.5px;width:1333.6px;height:157.5px;background:#1f1f1f;"></div>
<div style="left:714.4px;top:803.5px;width:29.6px;height:157.5px;background:#1b1b1b;"></div>
<div style="left:2007px;top:803.5px;width:41px;height:157.5px;background:#1b1b1b;"></div>
<svg style="left:714px;top:803px;" width="1334" height="17" viewBox="0 0 1334 17"><line x1="30.200000000000045" y1="4" x2="30.200000000000045" y2="14" stroke="#4a4a4a" stroke-width="1"/><line x1="34.41000000000008" y1="5" x2="34.41000000000008" y2="13" stroke="#323232" stroke-width="0.9"/><line x1="38.620000000000005" y1="5" x2="38.620000000000005" y2="13" stroke="#323232" stroke-width="0.9"/><line x1="42.83000000000004" y1="5" x2="42.83000000000004" y2="13" stroke="#323232" stroke-width="0.9"/><line x1="47.04000000000008" y1="5" x2="47.04000000000008" y2="13" stroke="#323232" stroke-width="0.9"/><line x1="51.25" y1="5" x2="51.25" y2="13" stroke="#323232" stroke-width="0.9"/><line x1="55.460000000000036" y1="5" x2="55.460000000000036" y2="13" stroke="#323232" stroke-width="0.9"/><line x1="59.67000000000007" y1="5" x2="59.67000000000007" y2="13" stroke="#323232" stroke-width="0.9"/><line x1="63.879999999999995" y1="5" x2="63.879999999999995" y2="13" stroke="#323232" stroke-width="0.9"/><line x1="68.09000000000003" y1="5" x2="68.09000000000003" y2="13" stroke="#323232" stroke-width="0.9"/><line x1="72.30000000000007" y1="5" x2="72.30000000000007" y2="13" stroke="#323232" stroke-width="0.9"/><line x1="76.50999999999999" y1="5" x2="76.50999999999999" y2="13" stroke="#323232" stroke-width="0.9"/><line x1="80.72000000000003" y1="5" x2="80.72000000000003" y2="13" stroke="#323232" stroke-width="0.9"/><line x1="84.93000000000006" y1="5" x2="84.93000000000006" y2="13" stroke="#323232" stroke-width="0.9"/><line x1="89.1400000000001" y1="5" x2="89.1400000000001" y2="13" stroke="#323232" stroke-width="0.9"/><line x1="93.35000000000002" y1="5" x2="93.35000000000002" y2="13" stroke="#323232" stroke-width="0.9"/><line x1="97.56000000000006" y1="5" x2="97.56000000000006" y2="13" stroke="#323232" stroke-width="0.9"/><line x1="101.76999999999998" y1="5" x2="101.76999999999998" y2="13" stroke="#323232" stroke-width="0.9"/><line x1="105.98000000000002" y1="5" x2="105.98000000000002" y2="13" stroke="#323232" stroke-width="0.9"/><line x1="110.19000000000005" y1="5" x2="110.19000000000005" y2="13" stroke="#323232" stroke-width="0.9"/><line x1="114.40000000000009" y1="5" x2="114.40000000000009" y2="13" stroke="#323232" stroke-width="0.9"/><line x1="118.61000000000001" y1="5" x2="118.61000000000001" y2="13" stroke="#323232" stroke-width="0.9"/><line x1="122.82000000000005" y1="5" x2="122.82000000000005" y2="13" stroke="#323232" stroke-width="0.9"/><line x1="127.03000000000009" y1="5" x2="127.03000000000009" y2="13" stroke="#323232" stroke-width="0.9"/><line x1="131.24" y1="5" x2="131.24" y2="13" stroke="#323232" stroke-width="0.9"/><line x1="135.45000000000005" y1="5" x2="135.45000000000005" y2="13" stroke="#323232" stroke-width="0.9"/><line x1="139.66000000000008" y1="5" x2="139.66000000000008" y2="13" stroke="#323232" stroke-width="0.9"/><line x1="143.87" y1="5" x2="143.87" y2="13" stroke="#323232" stroke-width="0.9"/><line x1="148.08000000000004" y1="5" x2="148.08000000000004" y2="13" stroke="#323232" stroke-width="0.9"/><line x1="152.29000000000008" y1="5" x2="152.29000000000008" y2="13" stroke="#323232" stroke-width="0.9"/><line x1="156.5" y1="4" x2="156.5" y2="14" stroke="#4a4a4a" stroke-width="1"/><line x1="160.71000000000004" y1="5" x2="160.71000000000004" y2="13" stroke="#323232" stroke-width="0.9"/><line x1="164.92000000000007" y1="5" x2="164.92000000000007" y2="13" stroke="#323232" stroke-width="0.9"/><line x1="169.1300000000001" y1="5" x2="169.1300000000001" y2="13" stroke="#323232" stroke-width="0.9"/><line x1="173.34000000000003" y1="5" x2="173.34000000000003" y2="13" stroke="#323232" stroke-width="0.9"/><line x1="177.55000000000007" y1="5" x2="177.55000000000007" y2="13" stroke="#323232" stroke-width="0.9"/><line x1="181.76" y1="5" x2="181.76" y2="13" stroke="#323232" stroke-width="0.9"/><line x1="185.97000000000003" y1="5" x2="185.97000000000003" y2="13" stroke="#323232" stroke-width="0.9"/><line x1="190.18000000000006" y1="5" x2="190.18000000000006" y2="13" stroke="#323232" stroke-width="0.9"/><line x1="194.3900000000001" y1="5" x2="194.3900000000001" y2="13" stroke="#323232" stroke-width="0.9"/><line x1="198.60000000000002" y1="5" x2="198.60000000000002" y2="13" stroke="#323232" stroke-width="0.9"/><line x1="202.81000000000006" y1="5" x2="202.81000000000006" y2="13" stroke="#323232" stroke-width="0.9"/><line x1="207.01999999999998" y1="5" x2="207.01999999999998" y2="13" stroke="#323232" stroke-width="0.9"/><line x1="211.23000000000002" y1="5" x2="211.23000000000002" y2="13" stroke="#323232" stroke-width="0.9"/><line x1="215.44000000000005" y1="5" x2="215.44000000000005" y2="13" stroke="#323232" stroke-width="0.9"/><line x1="219.6500000000001" y1="5" x2="219.6500000000001" y2="13" stroke="#323232" stroke-width="0.9"/><line x1="223.86" y1="5" x2="223.86" y2="13" stroke="#323232" stroke-width="0.9"/><line x1="228.07000000000005" y1="5" x2="228.07000000000005" y2="13" stroke="#323232" stroke-width="0.9"/><line x1="232.27999999999997" y1="5" x2="232.27999999999997" y2="13" stroke="#323232" stroke-width="0.9"/><line x1="236.49" y1="5" x2="236.49" y2="13" stroke="#323232" stroke-width="0.9"/><line x1="240.70000000000005" y1="5" x2="240.70000000000005" y2="13" stroke="#323232" stroke-width="0.9"/><line x1="244.91000000000008" y1="5" x2="244.91000000000008" y2="13" stroke="#323232" stroke-width="0.9"/><line x1="249.12" y1="5" x2="249.12" y2="13" stroke="#323232" stroke-width="0.9"/><line x1="253.33000000000004" y1="5" x2="253.33000000000004" y2="13" stroke="#323232" stroke-width="0.9"/><line x1="257.5400000000001" y1="5" x2="257.5400000000001" y2="13" stroke="#323232" stroke-width="0.9"/><line x1="261.75" y1="5" x2="261.75" y2="13" stroke="#323232" stroke-width="0.9"/><line x1="265.96000000000004" y1="5" x2="265.96000000000004" y2="13" stroke="#323232" stroke-width="0.9"/><line x1="270.1700000000001" y1="5" x2="270.1700000000001" y2="13" stroke="#323232" stroke-width="0.9"/><line x1="274.3800000000001" y1="5" x2="274.3800000000001" y2="13" stroke="#323232" stroke-width="0.9"/><line x1="278.59000000000003" y1="5" x2="278.59000000000003" y2="13" stroke="#323232" stroke-width="0.9"/><line x1="282.80000000000007" y1="4" x2="282.80000000000007" y2="14" stroke="#4a4a4a" stroke-width="1"/><line x1="287.01" y1="5" x2="287.01" y2="13" stroke="#323232" stroke-width="0.9"/><line x1="291.22" y1="5" x2="291.22" y2="13" stroke="#323232" stroke-width="0.9"/><line x1="295.43000000000006" y1="5" x2="295.43000000000006" y2="13" stroke="#323232" stroke-width="0.9"/><line x1="299.6400000000001" y1="5" x2="299.6400000000001" y2="13" stroke="#323232" stroke-width="0.9"/><line x1="303.85" y1="5" x2="303.85" y2="13" stroke="#323232" stroke-width="0.9"/><line x1="308.06000000000006" y1="5" x2="308.06000000000006" y2="13" stroke="#323232" stroke-width="0.9"/><line x1="312.27" y1="5" x2="312.27" y2="13" stroke="#323232" stroke-width="0.9"/><line x1="316.48" y1="5" x2="316.48" y2="13" stroke="#323232" stroke-width="0.9"/><line x1="320.69000000000005" y1="5" x2="320.69000000000005" y2="13" stroke="#323232" stroke-width="0.9"/><line x1="324.9000000000001" y1="5" x2="324.9000000000001" y2="13" stroke="#323232" stroke-width="0.9"/><line x1="329.1100000000001" y1="5" x2="329.1100000000001" y2="13" stroke="#323232" stroke-width="0.9"/><line x1="333.32000000000016" y1="5" x2="333.32000000000016" y2="13" stroke="#323232" stroke-width="0.9"/><line x1="337.53" y1="5" x2="337.53" y2="13" stroke="#323232" stroke-width="0.9"/><line x1="341.74" y1="5" x2="341.74" y2="13" stroke="#323232" stroke-width="0.9"/><line x1="345.95000000000005" y1="5" x2="345.95000000000005" y2="13" stroke="#323232" stroke-width="0.9"/><line x1="350.1600000000001" y1="5" x2="350.1600000000001" y2="13" stroke="#323232" stroke-width="0.9"/><line x1="354.3700000000001" y1="5" x2="354.3700000000001" y2="13" stroke="#323232" stroke-width="0.9"/><line x1="358.5799999999999" y1="5" x2="358.5799999999999" y2="13" stroke="#323232" stroke-width="0.9"/><line x1="362.78999999999996" y1="5" x2="362.78999999999996" y2="13" stroke="#323232" stroke-width="0.9"/><line x1="367.0" y1="5" x2="367.0" y2="13" stroke="#323232" stroke-width="0.9"/><line x1="371.21000000000004" y1="5" x2="371.21000000000004" y2="13" stroke="#323232" stroke-width="0.9"/><line x1="375.4200000000001" y1="5" x2="375.4200000000001" y2="13" stroke="#323232" stroke-width="0.9"/><line x1="379.6300000000001" y1="5" x2="379.6300000000001" y2="13" stroke="#323232" stroke-width="0.9"/><line x1="383.84000000000015" y1="5" x2="383.84000000000015" y2="13" stroke="#323232" stroke-width="0.9"/><line x1="388.0500000000002" y1="5" x2="388.0500000000002" y2="13" stroke="#323232" stroke-width="0.9"/><line x1="392.26" y1="5" x2="392.26" y2="13" stroke="#323232" stroke-width="0.9"/><line x1="396.47" y1="5" x2="396.47" y2="13" stroke="#323232" stroke-width="0.9"/><line x1="400.68000000000006" y1="5" x2="400.68000000000006" y2="13" stroke="#323232" stroke-width="0.9"/><line x1="404.8900000000001" y1="5" x2="404.8900000000001" y2="13" stroke="#323232" stroke-width="0.9"/><line x1="409.0999999999999" y1="4" x2="409.0999999999999" y2="14" stroke="#4a4a4a" stroke-width="1"/><line x1="413.30999999999995" y1="5" x2="413.30999999999995" y2="13" stroke="#323232" stroke-width="0.9"/><line x1="417.52" y1="5" x2="417.52" y2="13" stroke="#323232" stroke-width="0.9"/><line x1="421.73" y1="5" x2="421.73" y2="13" stroke="#323232" stroke-width="0.9"/><line x1="425.94000000000005" y1="5" x2="425.94000000000005" y2="13" stroke="#323232" stroke-width="0.9"/><line x1="430.1500000000001" y1="5" x2="430.1500000000001" y2="13" stroke="#323232" stroke-width="0.9"/><line x1="434.3600000000001" y1="5" x2="434.3600000000001" y2="13" stroke="#323232" stroke-width="0.9"/><line x1="438.57000000000016" y1="5" x2="438.57000000000016" y2="13" stroke="#323232" stroke-width="0.9"/><line x1="442.78" y1="5" x2="442.78" y2="13" stroke="#323232" stroke-width="0.9"/><line x1="446.99" y1="5" x2="446.99" y2="13" stroke="#323232" stroke-width="0.9"/><line x1="451.20000000000005" y1="5" x2="451.20000000000005" y2="13" stroke="#323232" stroke-width="0.9"/><line x1="455.4100000000001" y1="5" x2="455.4100000000001" y2="13" stroke="#323232" stroke-width="0.9"/><line x1="459.6200000000001" y1="5" x2="459.6200000000001" y2="13" stroke="#323232" stroke-width="0.9"/><line x1="463.8299999999999" y1="5" x2="463.8299999999999" y2="13" stroke="#323232" stroke-width="0.9"/><line x1="468.03999999999996" y1="5" x2="468.03999999999996" y2="13" stroke="#323232" stroke-width="0.9"/><line x1="472.25" y1="5" x2="472.25" y2="13" stroke="#323232" stroke-width="0.9"/><line x1="476.46000000000004" y1="5" x2="476.46000000000004" y2="13" stroke="#323232" stroke-width="0.9"/><line x1="480.6700000000001" y1="5" x2="480.6700000000001" y2="13" stroke="#323232" stroke-width="0.9"/><line x1="484.8800000000001" y1="5" x2="484.8800000000001" y2="13" stroke="#323232" stroke-width="0.9"/><line x1="489.09000000000015" y1="5" x2="489.09000000000015" y2="13" stroke="#323232" stroke-width="0.9"/><line x1="493.3000000000002" y1="5" x2="493.3000000000002" y2="13" stroke="#323232" stroke-width="0.9"/><line x1="497.51" y1="5" x2="497.51" y2="13" stroke="#323232" stroke-width="0.9"/><line x1="501.72" y1="5" x2="501.72" y2="13" stroke="#323232" stroke-width="0.9"/><line x1="505.93000000000006" y1="5" x2="505.93000000000006" y2="13" stroke="#323232" stroke-width="0.9"/><line x1="510.1400000000001" y1="5" x2="510.1400000000001" y2="13" stroke="#323232" stroke-width="0.9"/><line x1="514.3499999999999" y1="5" x2="514.3499999999999" y2="13" stroke="#323232" stroke-width="0.9"/><line x1="518.56" y1="5" x2="518.56" y2="13" stroke="#323232" stroke-width="0.9"/><line x1="522.77" y1="5" x2="522.77" y2="13" stroke="#323232" stroke-width="0.9"/><line x1="526.98" y1="5" x2="526.98" y2="13" stroke="#323232" stroke-width="0.9"/><line x1="531.19" y1="5" x2="531.19" y2="13" stroke="#323232" stroke-width="0.9"/><line x1="535.4000000000001" y1="4" x2="535.4000000000001" y2="14" stroke="#4a4a4a" stroke-width="1"/><line x1="539.6100000000001" y1="5" x2="539.6100000000001" y2="13" stroke="#323232" stroke-width="0.9"/><line x1="543.8200000000002" y1="5" x2="543.8200000000002" y2="13" stroke="#323232" stroke-width="0.9"/><line x1="548.0300000000002" y1="5" x2="548.0300000000002" y2="13" stroke="#323232" stroke-width="0.9"/><line x1="552.24" y1="5" x2="552.24" y2="13" stroke="#323232" stroke-width="0.9"/><line x1="556.45" y1="5" x2="556.45" y2="13" stroke="#323232" stroke-width="0.9"/><line x1="560.6600000000001" y1="5" x2="560.6600000000001" y2="13" stroke="#323232" stroke-width="0.9"/><line x1="564.8699999999999" y1="5" x2="564.8699999999999" y2="13" stroke="#323232" stroke-width="0.9"/><line x1="569.0799999999999" y1="5" x2="569.0799999999999" y2="13" stroke="#323232" stroke-width="0.9"/><line x1="573.29" y1="5" x2="573.29" y2="13" stroke="#323232" stroke-width="0.9"/><line x1="577.5" y1="5" x2="577.5" y2="13" stroke="#323232" stroke-width="0.9"/><line x1="581.71" y1="5" x2="581.71" y2="13" stroke="#323232" stroke-width="0.9"/><line x1="585.9200000000001" y1="5" x2="585.9200000000001" y2="13" stroke="#323232" stroke-width="0.9"/><line x1="590.1300000000001" y1="5" x2="590.1300000000001" y2="13" stroke="#323232" stroke-width="0.9"/><line x1="594.3400000000001" y1="5" x2="594.3400000000001" y2="13" stroke="#323232" stroke-width="0.9"/><line x1="598.5500000000002" y1="5" x2="598.5500000000002" y2="13" stroke="#323232" stroke-width="0.9"/><line x1="602.76" y1="5" x2="602.76" y2="13" stroke="#323232" stroke-width="0.9"/><line x1="606.97" y1="5" x2="606.97" y2="13" stroke="#323232" stroke-width="0.9"/><line x1="611.1800000000001" y1="5" x2="611.1800000000001" y2="13" stroke="#323232" stroke-width="0.9"/><line x1="615.3899999999999" y1="5" x2="615.3899999999999" y2="13" stroke="#323232" stroke-width="0.9"/><line x1="619.5999999999999" y1="5" x2="619.5999999999999" y2="13" stroke="#323232" stroke-width="0.9"/><line x1="623.81" y1="5" x2="623.81" y2="13" stroke="#323232" stroke-width="0.9"/><line x1="628.02" y1="5" x2="628.02" y2="13" stroke="#323232" stroke-width="0.9"/><line x1="632.23" y1="5" x2="632.23" y2="13" stroke="#323232" stroke-width="0.9"/><line x1="636.44" y1="5" x2="636.44" y2="13" stroke="#323232" stroke-width="0.9"/><line x1="640.6500000000001" y1="5" x2="640.6500000000001" y2="13" stroke="#323232" stroke-width="0.9"/><line x1="644.8600000000001" y1="5" x2="644.8600000000001" y2="13" stroke="#323232" stroke-width="0.9"/><line x1="649.0700000000002" y1="5" x2="649.0700000000002" y2="13" stroke="#323232" stroke-width="0.9"/><line x1="653.2800000000002" y1="5" x2="653.2800000000002" y2="13" stroke="#323232" stroke-width="0.9"/><line x1="657.49" y1="5" x2="657.49" y2="13" stroke="#323232" stroke-width="0.9"/><line x1="661.7" y1="4" x2="661.7" y2="14" stroke="#4a4a4a" stroke-width="1"/><line x1="665.9100000000001" y1="5" x2="665.9100000000001" y2="13" stroke="#323232" stroke-width="0.9"/><line x1="670.1199999999999" y1="5" x2="670.1199999999999" y2="13" stroke="#323232" stroke-width="0.9"/><line x1="674.3299999999999" y1="5" x2="674.3299999999999" y2="13" stroke="#323232" stroke-width="0.9"/><line x1="678.54" y1="5" x2="678.54" y2="13" stroke="#323232" stroke-width="0.9"/><line x1="682.75" y1="5" x2="682.75" y2="13" stroke="#323232" stroke-width="0.9"/><line x1="686.96" y1="5" x2="686.96" y2="13" stroke="#323232" stroke-width="0.9"/><line x1="691.1700000000001" y1="5" x2="691.1700000000001" y2="13" stroke="#323232" stroke-width="0.9"/><line x1="695.3800000000001" y1="5" x2="695.3800000000001" y2="13" stroke="#323232" stroke-width="0.9"/><line x1="699.5900000000001" y1="5" x2="699.5900000000001" y2="13" stroke="#323232" stroke-width="0.9"/><line x1="703.8000000000002" y1="5" x2="703.8000000000002" y2="13" stroke="#323232" stroke-width="0.9"/><line x1="708.01" y1="5" x2="708.01" y2="13" stroke="#323232" stroke-width="0.9"/><line x1="712.22" y1="5" x2="712.22" y2="13" stroke="#323232" stroke-width="0.9"/><line x1="716.4300000000001" y1="5" x2="716.4300000000001" y2="13" stroke="#323232" stroke-width="0.9"/><line x1="720.6399999999999" y1="5" x2="720.6399999999999" y2="13" stroke="#323232" stroke-width="0.9"/><line x1="724.8499999999999" y1="5" x2="724.8499999999999" y2="13" stroke="#323232" stroke-width="0.9"/><line x1="729.06" y1="5" x2="729.06" y2="13" stroke="#323232" stroke-width="0.9"/><line x1="733.27" y1="5" x2="733.27" y2="13" stroke="#323232" stroke-width="0.9"/><line x1="737.48" y1="5" x2="737.48" y2="13" stroke="#323232" stroke-width="0.9"/><line x1="741.69" y1="5" x2="741.69" y2="13" stroke="#323232" stroke-width="0.9"/><line x1="745.9000000000001" y1="5" x2="745.9000000000001" y2="13" stroke="#323232" stroke-width="0.9"/><line x1="750.1100000000001" y1="5" x2="750.1100000000001" y2="13" stroke="#323232" stroke-width="0.9"/><line x1="754.3200000000002" y1="5" x2="754.3200000000002" y2="13" stroke="#323232" stroke-width="0.9"/><line x1="758.5300000000002" y1="5" x2="758.5300000000002" y2="13" stroke="#323232" stroke-width="0.9"/><line x1="762.74" y1="5" x2="762.74" y2="13" stroke="#323232" stroke-width="0.9"/><line x1="766.95" y1="5" x2="766.95" y2="13" stroke="#323232" stroke-width="0.9"/><line x1="771.1600000000001" y1="5" x2="771.1600000000001" y2="13" stroke="#323232" stroke-width="0.9"/><line x1="775.3699999999999" y1="5" x2="775.3699999999999" y2="13" stroke="#323232" stroke-width="0.9"/><line x1="779.5799999999999" y1="5" x2="779.5799999999999" y2="13" stroke="#323232" stroke-width="0.9"/><line x1="783.79" y1="5" x2="783.79" y2="13" stroke="#323232" stroke-width="0.9"/><line x1="788.0" y1="4" x2="788.0" y2="14" stroke="#4a4a4a" stroke-width="1"/><line x1="792.21" y1="5" x2="792.21" y2="13" stroke="#323232" stroke-width="0.9"/><line x1="796.4200000000001" y1="5" x2="796.4200000000001" y2="13" stroke="#323232" stroke-width="0.9"/><line x1="800.6300000000001" y1="5" x2="800.6300000000001" y2="13" stroke="#323232" stroke-width="0.9"/><line x1="804.8400000000001" y1="5" x2="804.8400000000001" y2="13" stroke="#323232" stroke-width="0.9"/><line x1="809.0500000000002" y1="5" x2="809.0500000000002" y2="13" stroke="#323232" stroke-width="0.9"/><line x1="813.26" y1="5" x2="813.26" y2="13" stroke="#323232" stroke-width="0.9"/><line x1="817.47" y1="5" x2="817.47" y2="13" stroke="#323232" stroke-width="0.9"/><line x1="821.6800000000001" y1="5" x2="821.6800000000001" y2="13" stroke="#323232" stroke-width="0.9"/><line x1="825.8899999999999" y1="5" x2="825.8899999999999" y2="13" stroke="#323232" stroke-width="0.9"/><line x1="830.0999999999999" y1="5" x2="830.0999999999999" y2="13" stroke="#323232" stroke-width="0.9"/><line x1="834.31" y1="5" x2="834.31" y2="13" stroke="#323232" stroke-width="0.9"/><line x1="838.52" y1="5" x2="838.52" y2="13" stroke="#323232" stroke-width="0.9"/><line x1="842.73" y1="5" x2="842.73" y2="13" stroke="#323232" stroke-width="0.9"/><line x1="846.94" y1="5" x2="846.94" y2="13" stroke="#323232" stroke-width="0.9"/><line x1="851.1500000000001" y1="5" x2="851.1500000000001" y2="13" stroke="#323232" stroke-width="0.9"/><line x1="855.3600000000001" y1="5" x2="855.3600000000001" y2="13" stroke="#323232" stroke-width="0.9"/><line x1="859.5700000000002" y1="5" x2="859.5700000000002" y2="13" stroke="#323232" stroke-width="0.9"/><line x1="863.7800000000002" y1="5" x2="863.7800000000002" y2="13" stroke="#323232" stroke-width="0.9"/><line x1="867.99" y1="5" x2="867.99" y2="13" stroke="#323232" stroke-width="0.9"/><line x1="872.2" y1="5" x2="872.2" y2="13" stroke="#323232" stroke-width="0.9"/><line x1="876.4100000000001" y1="5" x2="876.4100000000001" y2="13" stroke="#323232" stroke-width="0.9"/><line x1="880.6199999999999" y1="5" x2="880.6199999999999" y2="13" stroke="#323232" stroke-width="0.9"/><line x1="884.8299999999999" y1="5" x2="884.8299999999999" y2="13" stroke="#323232" stroke-width="0.9"/><line x1="889.04" y1="5" x2="889.04" y2="13" stroke="#323232" stroke-width="0.9"/><line x1="893.25" y1="5" x2="893.25" y2="13" stroke="#323232" stroke-width="0.9"/><line x1="897.46" y1="5" x2="897.46" y2="13" stroke="#323232" stroke-width="0.9"/><line x1="901.6700000000001" y1="5" x2="901.6700000000001" y2="13" stroke="#323232" stroke-width="0.9"/><line x1="905.8800000000001" y1="5" x2="905.8800000000001" y2="13" stroke="#323232" stroke-width="0.9"/><line x1="910.0900000000001" y1="5" x2="910.0900000000001" y2="13" stroke="#323232" stroke-width="0.9"/><line x1="914.3000000000002" y1="4" x2="914.3000000000002" y2="14" stroke="#4a4a4a" stroke-width="1"/><line x1="918.51" y1="5" x2="918.51" y2="13" stroke="#323232" stroke-width="0.9"/><line x1="922.72" y1="5" x2="922.72" y2="13" stroke="#323232" stroke-width="0.9"/><line x1="926.9300000000001" y1="5" x2="926.9300000000001" y2="13" stroke="#323232" stroke-width="0.9"/><line x1="931.1399999999999" y1="5" x2="931.1399999999999" y2="13" stroke="#323232" stroke-width="0.9"/><line x1="935.3499999999999" y1="5" x2="935.3499999999999" y2="13" stroke="#323232" stroke-width="0.9"/><line x1="939.56" y1="5" x2="939.56" y2="13" stroke="#323232" stroke-width="0.9"/><line x1="943.77" y1="5" x2="943.77" y2="13" stroke="#323232" stroke-width="0.9"/><line x1="947.98" y1="5" x2="947.98" y2="13" stroke="#323232" stroke-width="0.9"/><line x1="952.19" y1="5" x2="952.19" y2="13" stroke="#323232" stroke-width="0.9"/><line x1="956.4000000000001" y1="5" x2="956.4000000000001" y2="13" stroke="#323232" stroke-width="0.9"/><line x1="960.6100000000001" y1="5" x2="960.6100000000001" y2="13" stroke="#323232" stroke-width="0.9"/><line x1="964.8200000000002" y1="5" x2="964.8200000000002" y2="13" stroke="#323232" stroke-width="0.9"/><line x1="969.0300000000002" y1="5" x2="969.0300000000002" y2="13" stroke="#323232" stroke-width="0.9"/><line x1="973.24" y1="5" x2="973.24" y2="13" stroke="#323232" stroke-width="0.9"/><line x1="977.45" y1="5" x2="977.45" y2="13" stroke="#323232" stroke-width="0.9"/><line x1="981.6600000000001" y1="5" x2="981.6600000000001" y2="13" stroke="#323232" stroke-width="0.9"/><line x1="985.8699999999999" y1="5" x2="985.8699999999999" y2="13" stroke="#323232" stroke-width="0.9"/><line x1="990.0799999999999" y1="5" x2="990.0799999999999" y2="13" stroke="#323232" stroke-width="0.9"/><line x1="994.29" y1="5" x2="994.29" y2="13" stroke="#323232" stroke-width="0.9"/><line x1="998.5" y1="5" x2="998.5" y2="13" stroke="#323232" stroke-width="0.9"/><line x1="1002.71" y1="5" x2="1002.71" y2="13" stroke="#323232" stroke-width="0.9"/><line x1="1006.9200000000001" y1="5" x2="1006.9200000000001" y2="13" stroke="#323232" stroke-width="0.9"/><line x1="1011.1300000000001" y1="5" x2="1011.1300000000001" y2="13" stroke="#323232" stroke-width="0.9"/><line x1="1015.3400000000001" y1="5" x2="1015.3400000000001" y2="13" stroke="#323232" stroke-width="0.9"/><line x1="1019.5500000000002" y1="5" x2="1019.5500000000002" y2="13" stroke="#323232" stroke-width="0.9"/><line x1="1023.76" y1="5" x2="1023.76" y2="13" stroke="#323232" stroke-width="0.9"/><line x1="1027.97" y1="5" x2="1027.97" y2="13" stroke="#323232" stroke-width="0.9"/><line x1="1032.18" y1="5" x2="1032.18" y2="13" stroke="#323232" stroke-width="0.9"/><line x1="1036.3899999999999" y1="5" x2="1036.3899999999999" y2="13" stroke="#323232" stroke-width="0.9"/><line x1="1040.6" y1="4" x2="1040.6" y2="14" stroke="#4a4a4a" stroke-width="1"/><line x1="1044.81" y1="5" x2="1044.81" y2="13" stroke="#323232" stroke-width="0.9"/><line x1="1049.02" y1="5" x2="1049.02" y2="13" stroke="#323232" stroke-width="0.9"/><line x1="1053.23" y1="5" x2="1053.23" y2="13" stroke="#323232" stroke-width="0.9"/><line x1="1057.44" y1="5" x2="1057.44" y2="13" stroke="#323232" stroke-width="0.9"/><line x1="1061.65" y1="5" x2="1061.65" y2="13" stroke="#323232" stroke-width="0.9"/><line x1="1065.8600000000001" y1="5" x2="1065.8600000000001" y2="13" stroke="#323232" stroke-width="0.9"/><line x1="1070.07" y1="5" x2="1070.07" y2="13" stroke="#323232" stroke-width="0.9"/><line x1="1074.28" y1="5" x2="1074.28" y2="13" stroke="#323232" stroke-width="0.9"/><line x1="1078.49" y1="5" x2="1078.49" y2="13" stroke="#323232" stroke-width="0.9"/><line x1="1082.7" y1="5" x2="1082.7" y2="13" stroke="#323232" stroke-width="0.9"/><line x1="1086.91" y1="5" x2="1086.91" y2="13" stroke="#323232" stroke-width="0.9"/><line x1="1091.1200000000001" y1="5" x2="1091.1200000000001" y2="13" stroke="#323232" stroke-width="0.9"/><line x1="1095.33" y1="5" x2="1095.33" y2="13" stroke="#323232" stroke-width="0.9"/><line x1="1099.54" y1="5" x2="1099.54" y2="13" stroke="#323232" stroke-width="0.9"/><line x1="1103.75" y1="5" x2="1103.75" y2="13" stroke="#323232" stroke-width="0.9"/><line x1="1107.96" y1="5" x2="1107.96" y2="13" stroke="#323232" stroke-width="0.9"/><line x1="1112.17" y1="5" x2="1112.17" y2="13" stroke="#323232" stroke-width="0.9"/><line x1="1116.38" y1="5" x2="1116.38" y2="13" stroke="#323232" stroke-width="0.9"/><line x1="1120.5900000000001" y1="5" x2="1120.5900000000001" y2="13" stroke="#323232" stroke-width="0.9"/><line x1="1124.8" y1="5" x2="1124.8" y2="13" stroke="#323232" stroke-width="0.9"/><line x1="1129.01" y1="5" x2="1129.01" y2="13" stroke="#323232" stroke-width="0.9"/><line x1="1133.22" y1="5" x2="1133.22" y2="13" stroke="#323232" stroke-width="0.9"/><line x1="1137.43" y1="5" x2="1137.43" y2="13" stroke="#323232" stroke-width="0.9"/><line x1="1141.64" y1="5" x2="1141.64" y2="13" stroke="#323232" stroke-width="0.9"/><line x1="1145.8500000000001" y1="5" x2="1145.8500000000001" y2="13" stroke="#323232" stroke-width="0.9"/><line x1="1150.06" y1="5" x2="1150.06" y2="13" stroke="#323232" stroke-width="0.9"/><line x1="1154.27" y1="5" x2="1154.27" y2="13" stroke="#323232" stroke-width="0.9"/><line x1="1158.48" y1="5" x2="1158.48" y2="13" stroke="#323232" stroke-width="0.9"/><line x1="1162.69" y1="5" x2="1162.69" y2="13" stroke="#323232" stroke-width="0.9"/><line x1="1166.9" y1="4" x2="1166.9" y2="14" stroke="#4a4a4a" stroke-width="1"/><line x1="1171.1100000000001" y1="5" x2="1171.1100000000001" y2="13" stroke="#323232" stroke-width="0.9"/><line x1="1175.32" y1="5" x2="1175.32" y2="13" stroke="#323232" stroke-width="0.9"/><line x1="1179.53" y1="5" x2="1179.53" y2="13" stroke="#323232" stroke-width="0.9"/><line x1="1183.74" y1="5" x2="1183.74" y2="13" stroke="#323232" stroke-width="0.9"/><line x1="1187.95" y1="5" x2="1187.95" y2="13" stroke="#323232" stroke-width="0.9"/><line x1="1192.16" y1="5" x2="1192.16" y2="13" stroke="#323232" stroke-width="0.9"/><line x1="1196.3700000000001" y1="5" x2="1196.3700000000001" y2="13" stroke="#323232" stroke-width="0.9"/><line x1="1200.58" y1="5" x2="1200.58" y2="13" stroke="#323232" stroke-width="0.9"/><line x1="1204.79" y1="5" x2="1204.79" y2="13" stroke="#323232" stroke-width="0.9"/><line x1="1209.0" y1="5" x2="1209.0" y2="13" stroke="#323232" stroke-width="0.9"/><line x1="1213.21" y1="5" x2="1213.21" y2="13" stroke="#323232" stroke-width="0.9"/><line x1="1217.42" y1="5" x2="1217.42" y2="13" stroke="#323232" stroke-width="0.9"/><line x1="1221.63" y1="5" x2="1221.63" y2="13" stroke="#323232" stroke-width="0.9"/><line x1="1225.8400000000001" y1="5" x2="1225.8400000000001" y2="13" stroke="#323232" stroke-width="0.9"/><line x1="1230.05" y1="5" x2="1230.05" y2="13" stroke="#323232" stroke-width="0.9"/><line x1="1234.26" y1="5" x2="1234.26" y2="13" stroke="#323232" stroke-width="0.9"/><line x1="1238.47" y1="5" x2="1238.47" y2="13" stroke="#323232" stroke-width="0.9"/><line x1="1242.68" y1="5" x2="1242.68" y2="13" stroke="#323232" stroke-width="0.9"/><line x1="1246.89" y1="5" x2="1246.89" y2="13" stroke="#323232" stroke-width="0.9"/><line x1="1251.1000000000001" y1="5" x2="1251.1000000000001" y2="13" stroke="#323232" stroke-width="0.9"/><line x1="1255.31" y1="5" x2="1255.31" y2="13" stroke="#323232" stroke-width="0.9"/><line x1="1259.52" y1="5" x2="1259.52" y2="13" stroke="#323232" stroke-width="0.9"/><line x1="1263.73" y1="5" x2="1263.73" y2="13" stroke="#323232" stroke-width="0.9"/><line x1="1267.94" y1="5" x2="1267.94" y2="13" stroke="#323232" stroke-width="0.9"/><line x1="1272.15" y1="5" x2="1272.15" y2="13" stroke="#323232" stroke-width="0.9"/><line x1="1276.3600000000001" y1="5" x2="1276.3600000000001" y2="13" stroke="#323232" stroke-width="0.9"/><line x1="1280.57" y1="5" x2="1280.57" y2="13" stroke="#323232" stroke-width="0.9"/><line x1="1284.78" y1="5" x2="1284.78" y2="13" stroke="#323232" stroke-width="0.9"/><line x1="1288.99" y1="5" x2="1288.99" y2="13" stroke="#323232" stroke-width="0.9"/><line x1="1293.2" y1="4" x2="1293.2" y2="14" stroke="#4a4a4a" stroke-width="1"/><line x1="1297.41" y1="5" x2="1297.41" y2="13" stroke="#323232" stroke-width="0.9"/><line x1="1301.6200000000001" y1="5" x2="1301.6200000000001" y2="13" stroke="#323232" stroke-width="0.9"/><line x1="1305.83" y1="5" x2="1305.83" y2="13" stroke="#323232" stroke-width="0.9"/><line x1="1310.04" y1="5" x2="1310.04" y2="13" stroke="#323232" stroke-width="0.9"/></svg>
<div style="left:746.4000000000001px;top:804.7px;line-height:14px;font-size:8px;color:#8a8a8a;font-weight:400;white-space:nowrap;">1</div>
<div style="left:872.7px;top:804.7px;line-height:14px;font-size:8px;color:#8a8a8a;font-weight:400;white-space:nowrap;">31</div>
<div style="left:999.0000000000001px;top:804.7px;line-height:14px;font-size:8px;color:#8a8a8a;font-weight:400;white-space:nowrap;">61</div>
<div style="left:1125.3px;top:804.7px;line-height:14px;font-size:8px;color:#8a8a8a;font-weight:400;white-space:nowrap;">91</div>
<div style="left:1251.6000000000001px;top:804.7px;line-height:14px;font-size:8px;color:#8a8a8a;font-weight:400;white-space:nowrap;">121</div>
<div style="left:1377.9px;top:804.7px;line-height:14px;font-size:8px;color:#8a8a8a;font-weight:400;white-space:nowrap;">151</div>
<div style="left:1504.2px;top:804.7px;line-height:14px;font-size:8px;color:#8a8a8a;font-weight:400;white-space:nowrap;">181</div>
<div style="left:1630.5000000000002px;top:804.7px;line-height:14px;font-size:8px;color:#8a8a8a;font-weight:400;white-space:nowrap;">211</div>
<div style="left:1756.8px;top:804.7px;line-height:14px;font-size:8px;color:#8a8a8a;font-weight:400;white-space:nowrap;">241</div>
<div style="left:1883.1000000000001px;top:804.7px;line-height:14px;font-size:8px;color:#8a8a8a;font-weight:400;white-space:nowrap;">271</div>
<div style="left:2009.4px;top:804.7px;line-height:14px;font-size:8px;color:#5a5a5a;font-weight:400;white-space:nowrap;">301</div>
<svg style="left:714px;top:820px;" width="1334" height="141" viewBox="0 0 1334 141"><line x1="156.5" y1="0" x2="156.5" y2="141" stroke="#2c2c2c" stroke-width="0.8" stroke-dasharray="2 2"/><line x1="282.80000000000007" y1="0" x2="282.80000000000007" y2="141" stroke="#2c2c2c" stroke-width="0.8" stroke-dasharray="2 2"/><line x1="409.0999999999999" y1="0" x2="409.0999999999999" y2="141" stroke="#2c2c2c" stroke-width="0.8" stroke-dasharray="2 2"/><line x1="535.4000000000001" y1="0" x2="535.4000000000001" y2="141" stroke="#2c2c2c" stroke-width="0.8" stroke-dasharray="2 2"/><line x1="661.7" y1="0" x2="661.7" y2="141" stroke="#2c2c2c" stroke-width="0.8" stroke-dasharray="2 2"/><line x1="788.0" y1="0" x2="788.0" y2="141" stroke="#2c2c2c" stroke-width="0.8" stroke-dasharray="2 2"/><line x1="914.3000000000002" y1="0" x2="914.3000000000002" y2="141" stroke="#2c2c2c" stroke-width="0.8" stroke-dasharray="2 2"/><line x1="1040.6" y1="0" x2="1040.6" y2="141" stroke="#2c2c2c" stroke-width="0.8" stroke-dasharray="2 2"/><line x1="1166.9" y1="0" x2="1166.9" y2="141" stroke="#2c2c2c" stroke-width="0.8" stroke-dasharray="2 2"/><line x1="1293.2" y1="0" x2="1293.2" y2="141" stroke="#2c2c2c" stroke-width="0.8" stroke-dasharray="2 2"/><line x1="30" y1="0" x2="30" y2="141" stroke="#262626" stroke-width="0.8" stroke-dasharray="2 2"/></svg>
<svg style="left:739.6px;top:807px;" width="7" height="10" viewBox="0 0 7 10"><polygon points="0.4,0.8 4.6,4.8 0.4,8.8" fill="#aaa"/><rect x="4.4" y="0" width="1.5" height="9.6" fill="#aaa"/></svg>
<svg style="left:2004.5px;top:807px;" width="7" height="10" viewBox="0 0 7 10"><polygon points="6.4,0.8 2.2,4.8 6.4,8.8" fill="#aaa"/><rect x="0.8" y="0" width="1.5" height="9.6" fill="#aaa"/></svg>
<div style="left:770.8px;top:844px;width:1236.2px;height:11.4px;background:#1b2640;border-radius:2px 2px 0 0;"></div>
<div style="left:773.7px;top:843.0px;line-height:14px;font-size:8.6px;color:#8a9ac0;font-weight:400;white-space:nowrap;">9</div>
<div style="left:770.8px;top:856px;width:1236.2px;height:105px;background:#161616;"></div>
<div style="left:770.8px;top:855.4px;width:1236px;height:21.300000000000068px;background:#283e66;border-radius:3px;box-shadow:inset 0 1.5px 0 #34507c;"></div>
<div style="left:773.7px;top:860.4499999999999px;width:18.6px;height:11.3px;background:#8a8a8a;border:1.4px solid #f0f0f0;box-sizing:border-box;border-radius:1px;"></div>
<div style="left:795.6px;top:859.25px;line-height:14px;font-size:9.8px;color:#ffffff;font-weight:700;white-space:nowrap;">5</div>
<div style="left:770.8px;top:879.6px;width:1236px;height:20.5px;background:#223558;border-radius:3px;box-shadow:inset 0 1.5px 0 #243a5e;"></div>
<div style="left:773.7px;top:885.0500000000001px;width:17.6px;height:9.6px;background:#8a8a8a;border:1px solid #1e2c48;box-sizing:border-box;border-radius:1px;"></div>
<div style="left:794.6px;top:882.85px;line-height:14px;font-size:9.6px;color:#8a9ac0;font-weight:400;white-space:nowrap;">9</div>
<div style="left:770.8px;top:902.8px;width:1236px;height:20.800000000000068px;background:#223558;border-radius:3px;box-shadow:inset 0 1.5px 0 #243a5e;"></div>
<div style="left:773.7px;top:908.4000000000001px;width:17.6px;height:9.6px;background:#8a8a8a;border:1px solid #1e2c48;box-sizing:border-box;border-radius:1px;"></div>
<div style="left:794.6px;top:906.2px;line-height:14px;font-size:9.6px;color:#8a9ac0;font-weight:400;white-space:nowrap;">8</div>
<div style="left:770.8px;top:926px;width:1236px;height:20.399999999999977px;background:#223558;border-radius:3px;box-shadow:inset 0 1.5px 0 #243a5e;"></div>
<div style="left:773.7px;top:931.4000000000001px;width:17.6px;height:9.6px;background:#8a8a8a;border:1px solid #1e2c48;box-sizing:border-box;border-radius:1px;"></div>
<div style="left:794.6px;top:929.2px;line-height:14px;font-size:9.6px;color:#8a9ac0;font-weight:400;white-space:nowrap;">7</div>
<div style="left:770.8px;top:949.2px;width:1236px;height:20.5px;background:#223558;border-radius:3px;box-shadow:inset 0 1.5px 0 #243a5e;"></div>
<div style="left:773.7px;top:954.6500000000001px;width:17.6px;height:9.6px;background:#8a8a8a;border:1px solid #1e2c48;box-sizing:border-box;border-radius:1px;"></div>
<div style="left:794.6px;top:952.45px;line-height:14px;font-size:9.6px;color:#8a9ac0;font-weight:400;white-space:nowrap;">6</div>
<div style="left:2039px;top:805px;width:5.6px;height:89px;background:#444;border-radius:3px;"></div>
<div style="left:427px;top:961px;width:1621px;height:16.8px;background:#353535;"></div>
<div style="left:427px;top:977.8px;width:1621px;height:1px;background:#121212;"></div>
<div style="left:713.4px;top:961px;width:1px;height:17px;background:#222;"></div>
<div style="left:434.6px;top:963.0px;line-height:14px;font-size:9.9px;color:#c0c0c0;font-weight:400;white-space:nowrap;">Animated</div>
<svg style="left:514px;top:965px;" width="6" height="10" viewBox="0 0 6 10"><g fill="none" stroke="#a0a0a0" stroke-width="1"><polyline points="0.8,3.6 3,1.2 5.2,3.6"/><polyline points="0.8,6.4 3,8.8 5.2,6.4"/></g></svg>
<svg style="left:643.8px;top:964.8px;" width="8" height="11" viewBox="0 0 8 11"><path d="M0.6,0.6 L7,6 L4.2,6.4 L5.8,10 L4.8,10.5 L3.2,6.9 L0.6,9 Z" fill="#6060ee"/></svg>
<svg style="left:667.8px;top:964px;" width="12" height="12" viewBox="0 0 12 12"><line x1="11" y1="1" x2="1.4" y2="10.6" stroke="#cfcfcf" stroke-width="1.5"/></svg>
<svg style="left:694px;top:964.4px;" width="13" height="13" viewBox="0 0 13 13"><rect x="0.5" y="0.5" width="9.6" height="7.6" fill="none" stroke="#aaa" stroke-width="0.7" stroke-dasharray="1 1"/><rect x="1.6" y="1.6" width="7.4" height="5.4" fill="#e0e0e0"/><path d="M10.4,8.4 V12.6 M8.3,10.5 H12.5" stroke="#ccc" stroke-width="0.9"/></svg>
<svg style="left:1878.4px;top:964px;" width="14.4" height="10" viewBox="0 0 14.4 10"><g fill="#9a9a9a"><rect x="0.5" y="3.5" width="1" height="3"/><rect x="2.5" y="2" width="1" height="6"/><rect x="4.5" y="0" width="1.2" height="10"/><rect x="6.6" y="1" width="1.2" height="8"/><rect x="8.7" y="0" width="1.2" height="10"/><rect x="10.8" y="2" width="1" height="6"/><rect x="12.8" y="3.5" width="1" height="3"/></g></svg>
<svg style="left:1898.8px;top:967.6px;" width="6.2" height="5" viewBox="0 0 6.2 5"><polyline points="0.6,0.8 3.1,4 5.6000000000000005,0.8" fill="none" stroke="#aaa" stroke-width="1.1"/></svg>
<svg style="left:1913.8px;top:963.6px;" width="11" height="11" viewBox="0 0 11 11"><circle cx="5.5" cy="5.5" r="4.8" fill="none" stroke="#6e6e6e" stroke-width="0.9"/><path d="M3.5,3.5 L7.5,7.5 M7.5,3.5 L3.5,7.5" stroke="#6e6e6e" stroke-width="0.9"/></svg>
<svg style="left:1941.4px;top:963.8px;" width="15" height="10" viewBox="0 0 15 10"><g fill="none" stroke="#c0c0c0" stroke-width="1"><polyline points="1.2,3 1.2,9 12.4,9"/><polyline points="13.2,7 13.2,1 2,1"/><line x1="3.6" y1="7.6" x2="11.6" y2="2.6"/></g></svg>
<svg style="left:1971.4px;top:964px;" width="12.6" height="10" viewBox="0 0 12.6 10"><path d="M0.5,2.2 H3.4 L4.6,0.4 H8 L9.2,2.2 H12.1 V9.6 H0.5 Z" fill="#d4d4d4"/><circle cx="6.3" cy="5.8" r="2.4" fill="#353535"/><circle cx="6.3" cy="5.8" r="1.4" fill="#d4d4d4"/></svg>
<svg style="left:1999px;top:963.4px;" width="15" height="11" viewBox="0 0 15 11"><rect x="0.3" y="3" width="6.8" height="4.8" fill="#dcdcdc"/><rect x="7.8" y="3" width="6.8" height="4.8" fill="#dcdcdc"/><g fill="#aaa"><rect x="4.6" y="0" width="0.9" height="1.6"/><rect x="7" y="0" width="0.9" height="1.6"/><rect x="9.4" y="0" width="0.9" height="1.6"/><rect x="4.6" y="9.2" width="0.9" height="1.6"/><rect x="7" y="9.2" width="0.9" height="1.6"/><rect x="9.4" y="9.2" width="0.9" height="1.6"/></g></svg>
<svg style="left:2029.2px;top:963.6px;" width="11" height="11" viewBox="0 0 11 11"><circle cx="4.6" cy="4.4" r="3.9" fill="none" stroke="#c8c8c8" stroke-width="0.9"/><line x1="7.4" y1="7.2" x2="10.6" y2="10.4" stroke="#c8c8c8" stroke-width="1.2"/><rect x="4.2" y="2.2" width="1" height="4.6" fill="#c8c8c8"/></svg>
<div style="left:427px;top:978.8px;width:286.4px;height:155.6px;background:#1f1f1f;"></div>
<div style="left:713.4px;top:978.8px;width:1px;height:155.6px;background:#0f0f0f;"></div>
<div style="left:714.4px;top:978.8px;width:1333.6px;height:155.6px;background:#1f1f1f;"></div>
<div style="left:714.4px;top:978.8px;width:29.6px;height:155.6px;background:#1b1b1b;"></div>
<div style="left:2006.5px;top:978.8px;width:41.5px;height:155.6px;background:#1b1b1b;"></div>
<svg style="left:714px;top:978.8px;" width="1334" height="156" viewBox="0 0 1334 156"><line x1="156.5" y1="0" x2="156.5" y2="156" stroke="#262626" stroke-width="0.8"/><line x1="282.80000000000007" y1="0" x2="282.80000000000007" y2="156" stroke="#262626" stroke-width="0.8"/><line x1="409.0999999999999" y1="0" x2="409.0999999999999" y2="156" stroke="#262626" stroke-width="0.8"/><line x1="535.4000000000001" y1="0" x2="535.4000000000001" y2="156" stroke="#262626" stroke-width="0.8"/><line x1="661.7" y1="0" x2="661.7" y2="156" stroke="#262626" stroke-width="0.8"/><line x1="788.0" y1="0" x2="788.0" y2="156" stroke="#262626" stroke-width="0.8"/><line x1="914.3000000000002" y1="0" x2="914.3000000000002" y2="156" stroke="#262626" stroke-width="0.8"/><line x1="1040.6" y1="0" x2="1040.6" y2="156" stroke="#262626" stroke-width="0.8"/><line x1="1166.9" y1="0" x2="1166.9" y2="156" stroke="#262626" stroke-width="0.8"/><line x1="1293.2" y1="0" x2="1293.2" y2="156" stroke="#262626" stroke-width="0.8"/></svg>
<div style="left:2039px;top:980px;width:4.5px;height:152.5px;background:#3c3c3c;border-radius:2.5px;"></div>
<svg style="left:764.8px;top:807.1px;" width="9" height="11" viewBox="0 0 9 11"><path d="M0.9,0.9 H7.7 V6 L4.3,9.4 L0.9,6 Z" fill="#353535" stroke="#aaaaaa" stroke-width="1.1" stroke-linejoin="round"/></svg>
<div style="left:768.5px;top:816.5px;width:1.3px;height:144.5px;background:#b8b8b8;"></div>
<div style="left:768.5px;top:978.8px;width:1.3px;height:155.4px;background:#b8b8b8;"></div>
<div style="left:427px;top:1134.2px;width:1621px;height:1px;background:#111;"></div>
<div style="left:427px;top:1135.2px;width:1621px;height:17px;background:#1e1e1e;"></div>
<div style="left:713.4px;top:1135.2px;width:1px;height:17px;background:#141414;"></div>
<div style="left:436px;top:1136.6px;line-height:14px;font-size:9.9px;color:#c0c0c0;font-weight:400;white-space:nowrap;">Small</div>
<svg style="left:480.4px;top:1138.6px;" width="6" height="10" viewBox="0 0 6 10"><g fill="none" stroke="#a0a0a0" stroke-width="1"><polyline points="0.8,3.6 3,1.2 5.2,3.6"/><polyline points="0.8,6.4 3,8.8 5.2,6.4"/></g></svg>
<svg style="left:602.8px;top:1137.8px;" width="11" height="11" viewBox="0 0 11 11"><circle cx="4.4" cy="4.4" r="3.8" fill="#999"/><rect x="2.4" y="3.9" width="4" height="1" fill="#1e1e1e"/><line x1="7" y1="7" x2="10.4" y2="10.4" stroke="#999" stroke-width="1.2"/></svg>
<div style="left:628px;top:1142.8px;width:60.5px;height:1.3px;background:#3a3a3a;"></div>
<div style="left:623.4px;top:1139.2px;width:9.2px;height:9.2px;background:#8a8a8a;border-radius:5px;"></div>
<svg style="left:698.4px;top:1137.8px;" width="11" height="11" viewBox="0 0 11 11"><circle cx="4.4" cy="4.4" r="3.8" fill="#999"/><path d="M4.4,2.4 V6.4 M2.4,4.4 H6.4" stroke="#1e1e1e" stroke-width="1"/><line x1="7" y1="7" x2="10.4" y2="10.4" stroke="#999" stroke-width="1.2"/></svg>
<div style="left:726px;top:1139.8px;width:1310.5px;height:7.6px;background:#3e3e3e;border-radius:4px;"></div>
</div></body></html>
